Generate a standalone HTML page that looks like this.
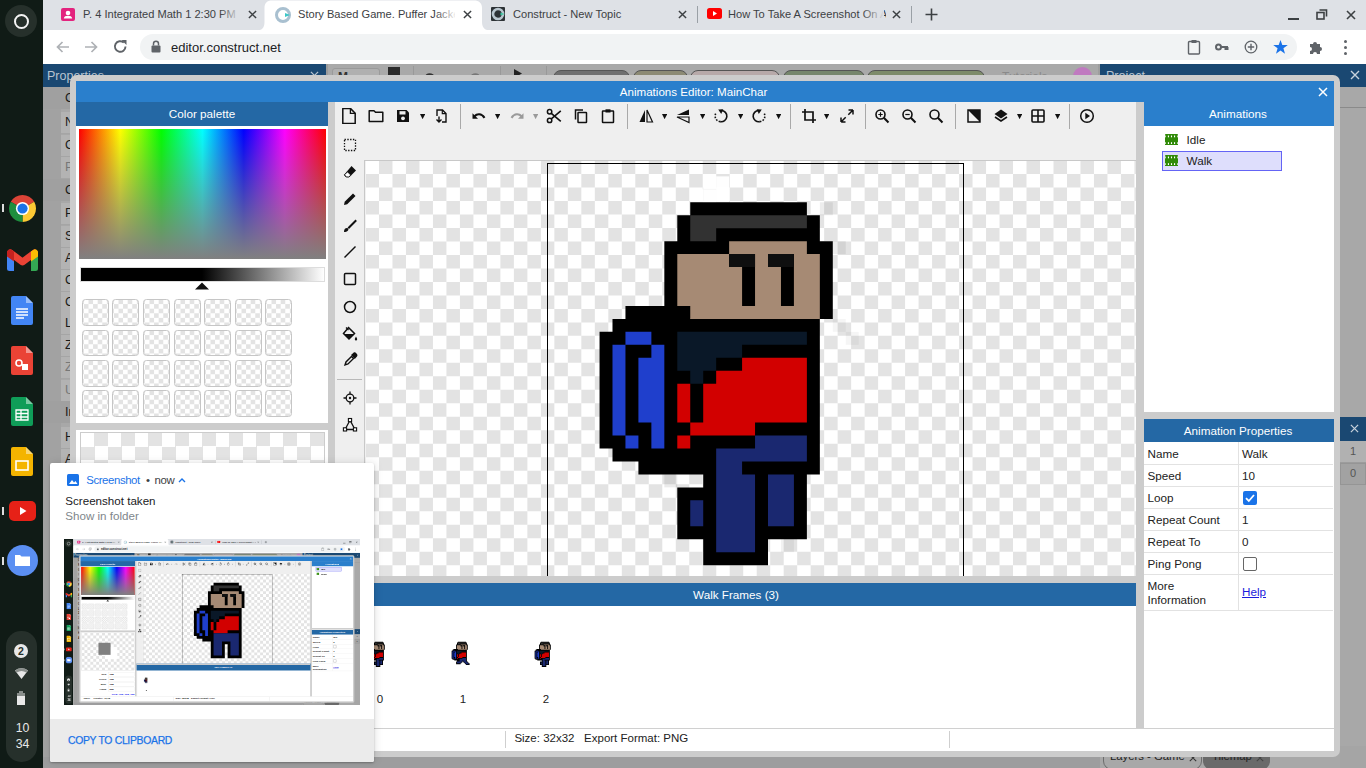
<!DOCTYPE html><html><head><meta charset="utf-8"><style>
html,body{margin:0;padding:0;}
.th div{font-weight:bold;}
body{width:1366px;height:768px;position:relative;overflow:hidden;font-family:"Liberation Sans",sans-serif;background:#a9a9a9;-webkit-font-smoothing:antialiased;}
</style></head><body><div style="position:absolute;left:0px;top:0px;width:43px;height:768px;background:#101b16;"></div><div style="position:absolute;left:5.2px;top:5.2px;width:32px;height:32px;background:#26302b;border-radius:50%;"></div><div style="position:absolute;left:13.8px;top:13.8px;width:15.2px;height:15.2px;border:2.5px solid #f4f4f4;border-radius:50%;box-sizing:border-box;"></div><svg style="position:absolute;left:8px;top:194px" width="29" height="29" viewBox="0 0 30 30"><path d="M15 15L2.88 8A14 14 0 0 1 27.12 8Z" fill="#db4437"/><path d="M15 15L27.12 8A14 14 0 0 1 15 29Z" fill="#fcc934"/><path d="M15 15L15 29A14 14 0 0 1 2.88 8Z" fill="#1e8e3e"/><circle cx="15" cy="15" r="6.8" fill="#fff"/><circle cx="15" cy="15" r="5.3" fill="#1a73e8"/></svg><div style="position:absolute;left:2px;top:204px;width:2px;height:8px;background:#ddd;"></div><svg style="position:absolute;left:7px;top:247px" width="31" height="24" viewBox="0 0 31 24"><path d="M3.5 6L15.5 15L27.5 6" stroke="#ea4335" stroke-width="7" fill="none" stroke-linecap="round" stroke-linejoin="round"/><path d="M0 6.5V21.5A2.5 2.5 0 0 0 2.5 24H7V9Z" fill="#4285f4"/><path d="M31 6.5V21.5A2.5 2.5 0 0 1 28.5 24H24V9Z" fill="#34a853"/><path d="M24 4.5L27.5 2.2A3.5 3.5 0 0 1 31 6.5V9.5L24 14.5Z" fill="#fbbc04"/><path d="M0 9.5V6.5A3.5 3.5 0 0 1 3.5 2.2L7 4.5V14.5Z" fill="#c5221f"/></svg><svg style="position:absolute;left:11px;top:296px" width="23" height="29" viewBox="0 0 23 29"><path d="M2 0H15L22 7V27A2 2 0 0 1 20 29H2A2 2 0 0 1 0 27V2A2 2 0 0 1 2 0Z" fill="#4285f4"/><path d="M15 0V7H22Z" fill="#fff" opacity="0.45"/><path d="M5 13H17M5 16H17M5 19H17M5 22H13" stroke="#fff" stroke-width="1.3"/></svg><svg style="position:absolute;left:11px;top:346px" width="23" height="29" viewBox="0 0 23 29"><path d="M2 0H15L22 7V27A2 2 0 0 1 20 29H2A2 2 0 0 1 0 27V2A2 2 0 0 1 2 0Z" fill="#ea4335"/><path d="M15 0V7H22Z" fill="#fff" opacity="0.45"/><circle cx="8" cy="17" r="3" fill="none" stroke="#fff" stroke-width="1.6"/><path d="M11 18H17V24H11Z" fill="#fff"/></svg><svg style="position:absolute;left:11px;top:397px" width="23" height="29" viewBox="0 0 23 29"><path d="M2 0H15L22 7V27A2 2 0 0 1 20 29H2A2 2 0 0 1 0 27V2A2 2 0 0 1 2 0Z" fill="#0f9d58"/><path d="M15 0V7H22Z" fill="#fff" opacity="0.45"/><path d="M5 13H17V23H5Z M5 16.5H17M5 20H17M10 13V23" fill="none" stroke="#fff" stroke-width="1.3"/></svg><svg style="position:absolute;left:11px;top:447px" width="23" height="29" viewBox="0 0 23 29"><path d="M2 0H15L22 7V27A2 2 0 0 1 20 29H2A2 2 0 0 1 0 27V2A2 2 0 0 1 2 0Z" fill="#f4b400"/><path d="M15 0V7H22Z" fill="#fff" opacity="0.45"/><rect x="5" y="14" width="12" height="9" fill="none" stroke="#fff" stroke-width="1.6"/></svg><svg style="position:absolute;left:9px;top:501px" width="27" height="20" viewBox="0 0 27 20"><rect x="0" y="0" width="27" height="20" rx="5" fill="#e62117"/><path d="M11 6V14L17.5 10Z" fill="#fff"/></svg><div style="position:absolute;left:2px;top:507px;width:2px;height:8px;background:#ddd;"></div><svg style="position:absolute;left:7px;top:545px" width="31" height="31" viewBox="0 0 31 31"><circle cx="15.5" cy="15.5" r="15.5" fill="#5b8ff2"/><path d="M8 10H13L14.5 11.5H23V21H8Z" fill="#fff"/></svg><div style="position:absolute;left:2px;top:557px;width:2px;height:8px;background:#ddd;"></div><div style="position:absolute;left:6px;top:631px;width:31px;height:131px;background:#26302b;border-radius:15px;"></div><div style="position:absolute;left:13.5px;top:643.5px;width:14.6px;height:14.6px;background:#e8e8e8;border-radius:50%;"></div><div style="position:absolute;left:-279.2px;width:600px;text-align:center;top:646.11px;font-size:10.5px;line-height:1;color:#26302b;white-space:pre;font-weight:bold;">2</div><svg style="position:absolute;left:14.5px;top:668px" width="13" height="11" viewBox="0 0 13 11"><path d="M0 2.5A11 11 0 0 1 13 2.5L6.5 11Z" fill="#e8e8e8"/><path d="M0 2.5A11 11 0 0 1 13 2.5L11.3 4.6A8.5 8.5 0 0 0 1.7 4.6Z" fill="#8a8f8c"/></svg><div style="position:absolute;left:17px;top:696px;width:8px;height:9px;background:#e8e8e8;"></div><div style="position:absolute;left:17px;top:693px;width:8px;height:3px;background:#8a8f8c;"></div><div style="position:absolute;left:19px;top:691px;width:4px;height:2px;background:#8a8f8c;"></div><div style="position:absolute;left:-277.4px;width:600px;text-align:center;top:722.29px;font-size:12.3px;line-height:1;color:#e8e8e8;white-space:pre;">10</div><div style="position:absolute;left:-277.4px;width:600px;text-align:center;top:738.29px;font-size:12.3px;line-height:1;color:#e8e8e8;white-space:pre;">34</div><div style="position:absolute;left:43px;top:0px;width:1323px;height:30px;background:#dee1e6;"></div><svg style="position:absolute;left:256px;top:0px" width="235" height="31" viewBox="0 0 235 31"><path d="M0 30.5C6 30.5 8.5 28 8.5 22V8C8.5 3 11 0.5 16 0.5H218C223 0.5 226 3 226 8V22C226 28 229 30.5 235 30.5Z" fill="#fff"/></svg><div style="position:absolute;left:61px;top:8px;width:14px;height:13px;background:#e3237e;border-radius:2px;"></div><svg style="position:absolute;left:61px;top:8px" width="14" height="13" viewBox="0 0 14 13"><circle cx="7" cy="5" r="2.3" fill="#fff"/><path d="M2.8 10.5C3 8.5 4.8 7.8 7 7.8C9.2 7.8 11 8.5 11.2 10.5Z" fill="#fff"/></svg><div style="position:absolute;left:83px;top:9.10px;font-size:11.1px;line-height:1;color:#3c4043;white-space:pre;width:155px;overflow:hidden;">P. 4 Integrated Math 1 2:30 PM -</div><div style="position:absolute;left:220px;top:4px;width:20px;height:20px;background:linear-gradient(90deg,rgba(222,225,230,0),#dee1e6);"></div><svg style="position:absolute;left:247.5px;top:9.5px" width="9" height="9" viewBox="0 0 10 10"><path d="M1 1L9 9M9 1L1 9" stroke="#3c4043" stroke-width="1.6"/></svg><svg style="position:absolute;left:275px;top:7px" width="16" height="16" viewBox="0 0 16 16"><circle cx="8" cy="8" r="6.5" fill="none" stroke="#a9c0d0" stroke-width="3"/><path d="M10 6L15 8L10 10Z" fill="#3cc7c7"/></svg><div style="position:absolute;left:298px;top:9.10px;font-size:11.1px;line-height:1;color:#3c4043;white-space:pre;width:157px;overflow:hidden;">Story Based Game. Puffer Jacket</div><div style="position:absolute;left:435px;top:4px;width:22px;height:20px;background:linear-gradient(90deg,rgba(255,255,255,0),#fff);"></div><svg style="position:absolute;left:462.5px;top:9.5px" width="9" height="9" viewBox="0 0 10 10"><path d="M1 1L9 9M9 1L1 9" stroke="#3c4043" stroke-width="1.6"/></svg><svg style="position:absolute;left:491px;top:7px" width="14" height="14" viewBox="0 0 14 14"><rect width="14" height="14" rx="1" fill="#2d3236"/><circle cx="7" cy="7" r="5" fill="none" stroke="#b9c6cf" stroke-width="2.6"/><path d="M9.5 5.5L13.5 7L9.5 8.5Z" fill="#3cc7a0"/></svg><div style="position:absolute;left:513px;top:9.10px;font-size:11.1px;line-height:1;color:#3c4043;white-space:pre;">Construct - New Topic</div><svg style="position:absolute;left:677.5px;top:9.5px" width="9" height="9" viewBox="0 0 10 10"><path d="M1 1L9 9M9 1L1 9" stroke="#3c4043" stroke-width="1.6"/></svg><div style="position:absolute;left:697px;top:6px;width:1px;height:17px;background:#9aa0a6;"></div><svg style="position:absolute;left:707px;top:8px" width="15" height="11" viewBox="0 0 15 11"><rect width="15" height="11" rx="2.5" fill="#f00"/><path d="M6 3V8L10 5.5Z" fill="#fff"/></svg><div style="position:absolute;left:728px;top:9.10px;font-size:11.1px;line-height:1;color:#3c4043;white-space:pre;width:158px;overflow:hidden;">How To Take A Screenshot On A</div><div style="position:absolute;left:862px;top:4px;width:22px;height:20px;background:linear-gradient(90deg,rgba(222,225,230,0),#dee1e6);"></div><svg style="position:absolute;left:891.5px;top:9.5px" width="9" height="9" viewBox="0 0 10 10"><path d="M1 1L9 9M9 1L1 9" stroke="#3c4043" stroke-width="1.6"/></svg><div style="position:absolute;left:911px;top:6px;width:1px;height:17px;background:#9aa0a6;"></div><svg style="position:absolute;left:925px;top:8px" width="13" height="13" viewBox="0 0 13 13"><path d="M6.5 0.5V12.5M0.5 6.5H12.5" stroke="#3c4043" stroke-width="1.6"/></svg><div style="position:absolute;left:1288px;top:18px;width:11px;height:2px;background:#3c4043;"></div><svg style="position:absolute;left:1316px;top:9px" width="12" height="11" viewBox="0 0 12 11"><rect x="1" y="3.5" width="7" height="6.5" fill="none" stroke="#3c4043" stroke-width="1.6"/><path d="M3.5 1H10.5V7.5" fill="none" stroke="#3c4043" stroke-width="1.6"/></svg><svg style="position:absolute;left:1346.0px;top:10.0px" width="10" height="10" viewBox="0 0 10 10"><path d="M1 1L9 9M9 1L1 9" stroke="#3c4043" stroke-width="1.6"/></svg><div style="position:absolute;left:43px;top:30px;width:1323px;height:34px;background:#fff;"></div><svg style="position:absolute;left:55px;top:39px" width="16" height="16" viewBox="0 0 16 16"><path d="M14 8H3M7.5 3L2.5 8L7.5 13" fill="none" stroke="#aeb1b5" stroke-width="1.7"/></svg><svg style="position:absolute;left:83px;top:39px" width="16" height="16" viewBox="0 0 16 16"><path d="M2 8H13M8.5 3L13.5 8L8.5 13" fill="none" stroke="#aeb1b5" stroke-width="1.7"/></svg><svg style="position:absolute;left:112px;top:38px" width="17" height="17" viewBox="0 0 17 17"><path d="M13.5 8.5A5.3 5.3 0 1 1 11.8 4.6" fill="none" stroke="#5f6368" stroke-width="1.9"/><path d="M9.5 2H14.5V7Z" fill="#5f6368"/></svg><div style="position:absolute;left:140px;top:34px;width:1157px;height:26px;background:#f1f3f4;border-radius:13px;"></div><svg style="position:absolute;left:151px;top:40px" width="10" height="13" viewBox="0 0 10 13"><path d="M2.5 5.5V3.8A2.5 2.5 0 0 1 7.5 3.8V5.5" fill="none" stroke="#5f6368" stroke-width="1.5"/><rect x="0.5" y="5.5" width="9" height="7" rx="1" fill="#5f6368"/></svg><div style="position:absolute;left:171px;top:40.80px;font-size:13px;line-height:1;color:#202124;white-space:pre;">editor.construct.net</div><svg style="position:absolute;left:1187px;top:39px" width="14" height="16" viewBox="0 0 14 16"><rect x="1.5" y="2.5" width="11" height="12.5" rx="1" fill="none" stroke="#5f6368" stroke-width="1.4"/><rect x="4.5" y="1" width="5" height="3" fill="#5f6368"/></svg><svg style="position:absolute;left:1215px;top:42px" width="14" height="10" viewBox="0 0 14 10"><circle cx="3.5" cy="5" r="2.5" fill="none" stroke="#5f6368" stroke-width="2"/><path d="M6 5H13M10.5 5V8M12.5 5V8" stroke="#5f6368" stroke-width="2"/></svg><svg style="position:absolute;left:1244px;top:40px" width="14" height="14" viewBox="0 0 14 14"><circle cx="7" cy="7" r="5.8" fill="none" stroke="#5f6368" stroke-width="1.3"/><path d="M7 3.8V10.2M3.8 7H10.2" stroke="#5f6368" stroke-width="1.4"/></svg><svg style="position:absolute;left:1273px;top:40px" width="15" height="14" viewBox="0 0 24 23"><path d="M12 0L15 8.3H24L16.8 13.6L19.4 22.5L12 17.2L4.6 22.5L7.2 13.6L0 8.3H9Z" fill="#1a73e8"/></svg><svg style="position:absolute;left:1309px;top:40px" width="15" height="14" viewBox="0 0 15 14"><path d="M1 4H4A2 2 0 0 1 8 4H11V7A2 2 0 0 1 11 11V14H8A2 2 0 0 0 4 14H1V11A2 2 0 0 0 1 7Z" fill="#5f6368"/></svg><div style="position:absolute;left:1344px;top:39.5px;width:3px;height:3px;background:#5f6368;border-radius:50%;"></div><div style="position:absolute;left:1344px;top:45.5px;width:3px;height:3px;background:#5f6368;border-radius:50%;"></div><div style="position:absolute;left:1344px;top:51.5px;width:3px;height:3px;background:#5f6368;border-radius:50%;"></div><div style="position:absolute;left:43px;top:64px;width:1323px;height:704px;background:#a8a8a8;"></div><div style="position:absolute;left:43px;top:64px;width:283px;height:23px;background:#1a4872;"></div><div style="position:absolute;left:47px;top:70.42px;font-size:12.5px;line-height:1;color:#b8c4d0;white-space:pre;">Properties</div><svg style="position:absolute;left:309.5px;top:70.5px" width="9" height="9" viewBox="0 0 10 10"><path d="M1 1L9 9M9 1L1 9" stroke="#b8c4d0" stroke-width="1.4"/></svg><div style="position:absolute;left:43px;top:87px;width:18px;height:681px;background:#a2a2a2;"></div><div style="position:absolute;left:43px;top:87px;width:283px;height:22px;background:#a0a0a0;"></div><div style="position:absolute;left:65px;top:92.42px;font-size:12.5px;line-height:1;color:#1a1a1a;white-space:pre;">C</div><div style="position:absolute;left:61px;top:112px;width:265px;height:21px;background:#b3b3b3;border-bottom:1px solid #a5a5a5;"></div><div style="position:absolute;left:65px;top:116.42px;font-size:12.5px;line-height:1;color:#1a1a1a;white-space:pre;">N</div><div style="position:absolute;left:61px;top:135px;width:265px;height:21px;background:#b3b3b3;border-bottom:1px solid #a5a5a5;"></div><div style="position:absolute;left:65px;top:139.42px;font-size:12.5px;line-height:1;color:#1a1a1a;white-space:pre;">G</div><div style="position:absolute;left:61px;top:157px;width:265px;height:21px;background:#b3b3b3;border-bottom:1px solid #a5a5a5;"></div><div style="position:absolute;left:65px;top:161.42px;font-size:12.5px;line-height:1;color:#777;white-space:pre;">P</div><div style="position:absolute;left:43px;top:179px;width:283px;height:22px;background:#a0a0a0;"></div><div style="position:absolute;left:65px;top:184.42px;font-size:12.5px;line-height:1;color:#1a1a1a;white-space:pre;">C</div><div style="position:absolute;left:61px;top:203px;width:265px;height:21px;background:#b3b3b3;border-bottom:1px solid #a5a5a5;"></div><div style="position:absolute;left:65px;top:207.42px;font-size:12.5px;line-height:1;color:#1a1a1a;white-space:pre;">P</div><div style="position:absolute;left:61px;top:226px;width:265px;height:21px;background:#b3b3b3;border-bottom:1px solid #a5a5a5;"></div><div style="position:absolute;left:65px;top:230.42px;font-size:12.5px;line-height:1;color:#1a1a1a;white-space:pre;">S</div><div style="position:absolute;left:61px;top:248px;width:265px;height:21px;background:#b3b3b3;border-bottom:1px solid #a5a5a5;"></div><div style="position:absolute;left:65px;top:252.42px;font-size:12.5px;line-height:1;color:#1a1a1a;white-space:pre;">A</div><div style="position:absolute;left:61px;top:270px;width:265px;height:21px;background:#b3b3b3;border-bottom:1px solid #a5a5a5;"></div><div style="position:absolute;left:65px;top:274.42px;font-size:12.5px;line-height:1;color:#1a1a1a;white-space:pre;">C</div><div style="position:absolute;left:61px;top:292px;width:265px;height:21px;background:#b3b3b3;border-bottom:1px solid #a5a5a5;"></div><div style="position:absolute;left:65px;top:296.42px;font-size:12.5px;line-height:1;color:#1a1a1a;white-space:pre;">C</div><div style="position:absolute;left:61px;top:313px;width:265px;height:21px;background:#b3b3b3;border-bottom:1px solid #a5a5a5;"></div><div style="position:absolute;left:65px;top:317.42px;font-size:12.5px;line-height:1;color:#1a1a1a;white-space:pre;">L</div><div style="position:absolute;left:61px;top:335px;width:265px;height:21px;background:#b3b3b3;border-bottom:1px solid #a5a5a5;"></div><div style="position:absolute;left:65px;top:339.42px;font-size:12.5px;line-height:1;color:#1a1a1a;white-space:pre;">Z</div><div style="position:absolute;left:61px;top:357px;width:265px;height:21px;background:#b3b3b3;border-bottom:1px solid #a5a5a5;"></div><div style="position:absolute;left:65px;top:361.42px;font-size:12.5px;line-height:1;color:#777;white-space:pre;">Z</div><div style="position:absolute;left:61px;top:380px;width:265px;height:21px;background:#b3b3b3;border-bottom:1px solid #a5a5a5;"></div><div style="position:absolute;left:65px;top:384.42px;font-size:12.5px;line-height:1;color:#777;white-space:pre;">U</div><div style="position:absolute;left:43px;top:401px;width:283px;height:22px;background:#a0a0a0;"></div><div style="position:absolute;left:65px;top:406.42px;font-size:12.5px;line-height:1;color:#1a1a1a;white-space:pre;">In</div><div style="position:absolute;left:61px;top:427px;width:265px;height:21px;background:#b3b3b3;border-bottom:1px solid #a5a5a5;"></div><div style="position:absolute;left:65px;top:431.42px;font-size:12.5px;line-height:1;color:#1a1a1a;white-space:pre;">H</div><div style="position:absolute;left:61px;top:449px;width:265px;height:21px;background:#b3b3b3;border-bottom:1px solid #a5a5a5;"></div><div style="position:absolute;left:65px;top:453.42px;font-size:12.5px;line-height:1;color:#1a1a1a;white-space:pre;">A</div><div style="position:absolute;left:326px;top:64px;width:2px;height:704px;background:#9b9b9b;"></div><div style="position:absolute;left:328px;top:64px;width:772px;height:12px;background:#a9a9a9;"></div><div style="position:absolute;left:332px;top:68px;width:46px;height:20px;background:#b0b0b0;border:1px solid #9a9a9a;border-radius:3px;"></div><div style="position:absolute;left:338px;top:70.84px;font-size:12px;line-height:1;color:#333;white-space:pre;font-weight:bold;">M</div><div style="position:absolute;left:388px;top:67px;width:12px;height:10px;background:#2a2a2a;"></div><svg style="position:absolute;left:423px;top:70px" width="14" height="8" viewBox="0 0 14 8"><path d="M2 8C4 3 9 3 12 8" fill="none" stroke="#333" stroke-width="2"/></svg><svg style="position:absolute;left:468px;top:70px" width="14" height="8" viewBox="0 0 14 8"><path d="M12 8C10 3 5 3 2 8" fill="none" stroke="#777" stroke-width="2"/></svg><svg style="position:absolute;left:513px;top:68px" width="10" height="10" viewBox="0 0 10 10"><path d="M1 1V10L9 5.5Z" fill="#222"/></svg><div style="position:absolute;left:413px;top:66px;width:1px;height:12px;background:#999;"></div><div style="position:absolute;left:500px;top:66px;width:1px;height:12px;background:#999;"></div><div style="position:absolute;left:546px;top:66px;width:1px;height:12px;background:#999;"></div><div style="position:absolute;left:553px;top:70px;width:77px;height:20px;background:#6f6f6f;border:1px solid #555;border-radius:8px;box-sizing:border-box;"></div><div style="position:absolute;left:633px;top:70px;width:55px;height:20px;background:#8c8a74;border:1px solid #555;border-radius:8px;box-sizing:border-box;"></div><div style="position:absolute;left:690px;top:70px;width:90px;height:20px;background:#b7a9a9;border:1px solid #555;border-radius:8px;box-sizing:border-box;"></div><div style="position:absolute;left:783px;top:70px;width:82px;height:20px;background:#76866c;border:1px solid #555;border-radius:8px;box-sizing:border-box;"></div><div style="position:absolute;left:867px;top:70px;width:118px;height:20px;background:#7d8b6a;border:1px solid #555;border-radius:8px;box-sizing:border-box;"></div><div style="position:absolute;left:1002px;top:70.84px;font-size:12px;line-height:1;color:#8a8a8a;white-space:pre;">Tutorials</div><div style="position:absolute;left:1073px;top:67px;width:19px;height:19px;background:#c07ac0;border-radius:50%;"></div><div style="position:absolute;left:1100px;top:64px;width:266px;height:23px;background:#1a4872;"></div><div style="position:absolute;left:1106px;top:70.42px;font-size:12.5px;line-height:1;color:#b8c4d0;white-space:pre;">Project</div><svg style="position:absolute;left:1350.0px;top:70.0px" width="10" height="10" viewBox="0 0 10 10"><path d="M1 1L9 9M9 1L1 9" stroke="#c8d2dc" stroke-width="1.4"/></svg><div style="position:absolute;left:1098px;top:64px;width:2px;height:704px;background:#9e9e9e;"></div><div style="position:absolute;left:1340px;top:107px;width:26px;height:1px;background:#8a8a8a;"></div><div style="position:absolute;left:1340px;top:417px;width:26px;height:24px;background:#1a4872;"></div><svg style="position:absolute;left:1349.5px;top:424.0px" width="9" height="9" viewBox="0 0 10 10"><path d="M1 1L9 9M9 1L1 9" stroke="#c8d2dc" stroke-width="1.4"/></svg><div style="position:absolute;left:1340px;top:441px;width:26px;height:22px;background:#b1b1b1;border-bottom:1px solid #9c9c9c;box-sizing:border-box;"></div><div style="position:absolute;left:1350px;top:445.69px;font-size:11px;line-height:1;color:#555;white-space:pre;">1</div><div style="position:absolute;left:1340px;top:463px;width:26px;height:22px;background:#a2a2a2;border:1px solid #959595;box-sizing:border-box;"></div><div style="position:absolute;left:1350px;top:467.69px;font-size:11px;line-height:1;color:#555;white-space:pre;">0</div><div style="position:absolute;left:1340px;top:746px;width:26px;height:22px;background:#a5a5a5;"></div><div style="position:absolute;left:43px;top:757px;width:1057px;height:11px;background:#9d9d9e;"></div><div style="position:absolute;left:1103px;top:746px;width:99px;height:24px;background:#a8a8a8;border:1px solid #6d6d6d;border-radius:9px;box-sizing:border-box;"></div><div style="position:absolute;left:1110px;top:751.43px;font-size:11.3px;line-height:1;color:#222;white-space:pre;">Layers - Game</div><svg style="position:absolute;left:1189.0px;top:753.5px" width="8" height="8" viewBox="0 0 10 10"><path d="M1 1L9 9M9 1L1 9" stroke="#333" stroke-width="1.3"/></svg><div style="position:absolute;left:1203px;top:746px;width:67px;height:24px;background:#6a6a6a;border-radius:9px;"></div><div style="position:absolute;left:1212px;top:751.43px;font-size:11.3px;line-height:1;color:#222;white-space:pre;">Tilemap</div><svg style="position:absolute;left:1256.0px;top:753.5px" width="8" height="8" viewBox="0 0 10 10"><path d="M1 1L9 9M9 1L1 9" stroke="#444" stroke-width="1.3"/></svg><div style="position:absolute;left:70px;top:75px;width:1270px;height:682px;background:#cccccc;border-radius:7px;"></div><div style="position:absolute;left:76px;top:81px;width:1258px;height:670px;background:#fff;"></div><div style="position:absolute;left:76px;top:81px;width:1258px;height:21px;background:#2a7fcc;"></div><div style="position:absolute;left:393.5px;width:600px;text-align:center;top:85.98px;font-size:11.6px;line-height:1;color:#fff;white-space:pre;">Animations Editor: MainChar</div><svg style="position:absolute;left:1317.5px;top:86.5px" width="10" height="10" viewBox="0 0 10 10"><path d="M1 1L9 9M9 1L1 9" stroke="#fff" stroke-width="1.5"/></svg><div style="position:absolute;left:76px;top:102px;width:252px;height:24px;background:#2468a5;"></div><div style="position:absolute;left:-98px;width:600px;text-align:center;top:107.90px;font-size:11.7px;line-height:1;color:#fff;white-space:pre;">Color palette</div><div style="position:absolute;left:79px;top:129px;width:247px;height:130px;background:linear-gradient(180deg,rgba(128,128,128,0),#808080),linear-gradient(90deg,#f00,#ff0 16.67%,#0f0 33.33%,#0ff 50%,#00f 66.67%,#f0f 83.33%,#f00);"></div><div style="position:absolute;left:80px;top:267px;width:245px;height:15px;background:linear-gradient(90deg,#000 0%,#000 49.8%,#fff 100%);border:1px solid #ddd;box-sizing:border-box;"></div><svg style="position:absolute;left:194px;top:281px" width="16" height="9" viewBox="0 0 16 9"><path d="M1 8.5H15L8 1.5Z" fill="#111"/></svg><div style="position:absolute;left:82.3px;top:299px;width:26.5px;height:26.5px;background-color:#fff;background-image:conic-gradient(#e3e3e3 0 25%,#fff 0 50%,#e3e3e3 0 75%,#fff 0);background-size:9.2px 9.2px;background-position:0.9px -0.5px;border:1px solid #c6c6c6;border-radius:3.5px;box-sizing:border-box;"></div><div style="position:absolute;left:112.2px;top:299px;width:26.5px;height:26.5px;background-color:#fff;background-image:conic-gradient(#e3e3e3 0 25%,#fff 0 50%,#e3e3e3 0 75%,#fff 0);background-size:9.2px 9.2px;background-position:0.9px -0.5px;border:1px solid #c6c6c6;border-radius:3.5px;box-sizing:border-box;"></div><div style="position:absolute;left:143.2px;top:299px;width:26.5px;height:26.5px;background-color:#fff;background-image:conic-gradient(#e3e3e3 0 25%,#fff 0 50%,#e3e3e3 0 75%,#fff 0);background-size:9.2px 9.2px;background-position:0.9px -0.5px;border:1px solid #c6c6c6;border-radius:3.5px;box-sizing:border-box;"></div><div style="position:absolute;left:174px;top:299px;width:26.5px;height:26.5px;background-color:#fff;background-image:conic-gradient(#e3e3e3 0 25%,#fff 0 50%,#e3e3e3 0 75%,#fff 0);background-size:9.2px 9.2px;background-position:0.9px -0.5px;border:1px solid #c6c6c6;border-radius:3.5px;box-sizing:border-box;"></div><div style="position:absolute;left:204.4px;top:299px;width:26.5px;height:26.5px;background-color:#fff;background-image:conic-gradient(#e3e3e3 0 25%,#fff 0 50%,#e3e3e3 0 75%,#fff 0);background-size:9.2px 9.2px;background-position:0.9px -0.5px;border:1px solid #c6c6c6;border-radius:3.5px;box-sizing:border-box;"></div><div style="position:absolute;left:235.2px;top:299px;width:26.5px;height:26.5px;background-color:#fff;background-image:conic-gradient(#e3e3e3 0 25%,#fff 0 50%,#e3e3e3 0 75%,#fff 0);background-size:9.2px 9.2px;background-position:0.9px -0.5px;border:1px solid #c6c6c6;border-radius:3.5px;box-sizing:border-box;"></div><div style="position:absolute;left:265px;top:299px;width:26.5px;height:26.5px;background-color:#fff;background-image:conic-gradient(#e3e3e3 0 25%,#fff 0 50%,#e3e3e3 0 75%,#fff 0);background-size:9.2px 9.2px;background-position:0.9px -0.5px;border:1px solid #c6c6c6;border-radius:3.5px;box-sizing:border-box;"></div><div style="position:absolute;left:82.3px;top:329.5px;width:26.5px;height:26.5px;background-color:#fff;background-image:conic-gradient(#e3e3e3 0 25%,#fff 0 50%,#e3e3e3 0 75%,#fff 0);background-size:9.2px 9.2px;background-position:0.9px -0.5px;border:1px solid #c6c6c6;border-radius:3.5px;box-sizing:border-box;"></div><div style="position:absolute;left:112.2px;top:329.5px;width:26.5px;height:26.5px;background-color:#fff;background-image:conic-gradient(#e3e3e3 0 25%,#fff 0 50%,#e3e3e3 0 75%,#fff 0);background-size:9.2px 9.2px;background-position:0.9px -0.5px;border:1px solid #c6c6c6;border-radius:3.5px;box-sizing:border-box;"></div><div style="position:absolute;left:143.2px;top:329.5px;width:26.5px;height:26.5px;background-color:#fff;background-image:conic-gradient(#e3e3e3 0 25%,#fff 0 50%,#e3e3e3 0 75%,#fff 0);background-size:9.2px 9.2px;background-position:0.9px -0.5px;border:1px solid #c6c6c6;border-radius:3.5px;box-sizing:border-box;"></div><div style="position:absolute;left:174px;top:329.5px;width:26.5px;height:26.5px;background-color:#fff;background-image:conic-gradient(#e3e3e3 0 25%,#fff 0 50%,#e3e3e3 0 75%,#fff 0);background-size:9.2px 9.2px;background-position:0.9px -0.5px;border:1px solid #c6c6c6;border-radius:3.5px;box-sizing:border-box;"></div><div style="position:absolute;left:204.4px;top:329.5px;width:26.5px;height:26.5px;background-color:#fff;background-image:conic-gradient(#e3e3e3 0 25%,#fff 0 50%,#e3e3e3 0 75%,#fff 0);background-size:9.2px 9.2px;background-position:0.9px -0.5px;border:1px solid #c6c6c6;border-radius:3.5px;box-sizing:border-box;"></div><div style="position:absolute;left:235.2px;top:329.5px;width:26.5px;height:26.5px;background-color:#fff;background-image:conic-gradient(#e3e3e3 0 25%,#fff 0 50%,#e3e3e3 0 75%,#fff 0);background-size:9.2px 9.2px;background-position:0.9px -0.5px;border:1px solid #c6c6c6;border-radius:3.5px;box-sizing:border-box;"></div><div style="position:absolute;left:265px;top:329.5px;width:26.5px;height:26.5px;background-color:#fff;background-image:conic-gradient(#e3e3e3 0 25%,#fff 0 50%,#e3e3e3 0 75%,#fff 0);background-size:9.2px 9.2px;background-position:0.9px -0.5px;border:1px solid #c6c6c6;border-radius:3.5px;box-sizing:border-box;"></div><div style="position:absolute;left:82.3px;top:360.2px;width:26.5px;height:26.5px;background-color:#fff;background-image:conic-gradient(#e3e3e3 0 25%,#fff 0 50%,#e3e3e3 0 75%,#fff 0);background-size:9.2px 9.2px;background-position:0.9px -0.5px;border:1px solid #c6c6c6;border-radius:3.5px;box-sizing:border-box;"></div><div style="position:absolute;left:112.2px;top:360.2px;width:26.5px;height:26.5px;background-color:#fff;background-image:conic-gradient(#e3e3e3 0 25%,#fff 0 50%,#e3e3e3 0 75%,#fff 0);background-size:9.2px 9.2px;background-position:0.9px -0.5px;border:1px solid #c6c6c6;border-radius:3.5px;box-sizing:border-box;"></div><div style="position:absolute;left:143.2px;top:360.2px;width:26.5px;height:26.5px;background-color:#fff;background-image:conic-gradient(#e3e3e3 0 25%,#fff 0 50%,#e3e3e3 0 75%,#fff 0);background-size:9.2px 9.2px;background-position:0.9px -0.5px;border:1px solid #c6c6c6;border-radius:3.5px;box-sizing:border-box;"></div><div style="position:absolute;left:174px;top:360.2px;width:26.5px;height:26.5px;background-color:#fff;background-image:conic-gradient(#e3e3e3 0 25%,#fff 0 50%,#e3e3e3 0 75%,#fff 0);background-size:9.2px 9.2px;background-position:0.9px -0.5px;border:1px solid #c6c6c6;border-radius:3.5px;box-sizing:border-box;"></div><div style="position:absolute;left:204.4px;top:360.2px;width:26.5px;height:26.5px;background-color:#fff;background-image:conic-gradient(#e3e3e3 0 25%,#fff 0 50%,#e3e3e3 0 75%,#fff 0);background-size:9.2px 9.2px;background-position:0.9px -0.5px;border:1px solid #c6c6c6;border-radius:3.5px;box-sizing:border-box;"></div><div style="position:absolute;left:235.2px;top:360.2px;width:26.5px;height:26.5px;background-color:#fff;background-image:conic-gradient(#e3e3e3 0 25%,#fff 0 50%,#e3e3e3 0 75%,#fff 0);background-size:9.2px 9.2px;background-position:0.9px -0.5px;border:1px solid #c6c6c6;border-radius:3.5px;box-sizing:border-box;"></div><div style="position:absolute;left:265px;top:360.2px;width:26.5px;height:26.5px;background-color:#fff;background-image:conic-gradient(#e3e3e3 0 25%,#fff 0 50%,#e3e3e3 0 75%,#fff 0);background-size:9.2px 9.2px;background-position:0.9px -0.5px;border:1px solid #c6c6c6;border-radius:3.5px;box-sizing:border-box;"></div><div style="position:absolute;left:82.3px;top:390.2px;width:26.5px;height:26.5px;background-color:#fff;background-image:conic-gradient(#e3e3e3 0 25%,#fff 0 50%,#e3e3e3 0 75%,#fff 0);background-size:9.2px 9.2px;background-position:0.9px -0.5px;border:1px solid #c6c6c6;border-radius:3.5px;box-sizing:border-box;"></div><div style="position:absolute;left:112.2px;top:390.2px;width:26.5px;height:26.5px;background-color:#fff;background-image:conic-gradient(#e3e3e3 0 25%,#fff 0 50%,#e3e3e3 0 75%,#fff 0);background-size:9.2px 9.2px;background-position:0.9px -0.5px;border:1px solid #c6c6c6;border-radius:3.5px;box-sizing:border-box;"></div><div style="position:absolute;left:143.2px;top:390.2px;width:26.5px;height:26.5px;background-color:#fff;background-image:conic-gradient(#e3e3e3 0 25%,#fff 0 50%,#e3e3e3 0 75%,#fff 0);background-size:9.2px 9.2px;background-position:0.9px -0.5px;border:1px solid #c6c6c6;border-radius:3.5px;box-sizing:border-box;"></div><div style="position:absolute;left:174px;top:390.2px;width:26.5px;height:26.5px;background-color:#fff;background-image:conic-gradient(#e3e3e3 0 25%,#fff 0 50%,#e3e3e3 0 75%,#fff 0);background-size:9.2px 9.2px;background-position:0.9px -0.5px;border:1px solid #c6c6c6;border-radius:3.5px;box-sizing:border-box;"></div><div style="position:absolute;left:204.4px;top:390.2px;width:26.5px;height:26.5px;background-color:#fff;background-image:conic-gradient(#e3e3e3 0 25%,#fff 0 50%,#e3e3e3 0 75%,#fff 0);background-size:9.2px 9.2px;background-position:0.9px -0.5px;border:1px solid #c6c6c6;border-radius:3.5px;box-sizing:border-box;"></div><div style="position:absolute;left:235.2px;top:390.2px;width:26.5px;height:26.5px;background-color:#fff;background-image:conic-gradient(#e3e3e3 0 25%,#fff 0 50%,#e3e3e3 0 75%,#fff 0);background-size:9.2px 9.2px;background-position:0.9px -0.5px;border:1px solid #c6c6c6;border-radius:3.5px;box-sizing:border-box;"></div><div style="position:absolute;left:265px;top:390.2px;width:26.5px;height:26.5px;background-color:#fff;background-image:conic-gradient(#e3e3e3 0 25%,#fff 0 50%,#e3e3e3 0 75%,#fff 0);background-size:9.2px 9.2px;background-position:0.9px -0.5px;border:1px solid #c6c6c6;border-radius:3.5px;box-sizing:border-box;"></div><div style="position:absolute;left:76px;top:423px;width:252px;height:7px;background:#cccccc;"></div><div style="position:absolute;left:80px;top:432px;width:245px;height:330px;background-color:#fff;background-image:conic-gradient(#e3e3e3 0 25%,#fff 0 50%,#e3e3e3 0 75%,#fff 0);background-size:27.0px 27.0px;border:1px solid #ccc;box-sizing:border-box;"></div><div style="position:absolute;left:328px;top:102px;width:7px;height:626px;background:#cccccc;"></div><div style="position:absolute;left:335px;top:102px;width:801px;height:58px;background:#efefef;"></div><div style="position:absolute;left:335px;top:160px;width:29px;height:416px;background:#efefef;"></div><svg style="position:absolute;left:341.0px;top:108.4px" width="16" height="16" viewBox="0 0 16 16"><path d="M1.8 0.6H9.6L14.2 5.2V15.6H1.8Z" fill="none" stroke="#111" stroke-width="1.5" stroke-linejoin="round"/><path d="M9.4 0.6V5.4H14.2" fill="none" stroke="#111" stroke-width="1.3"/></svg><svg style="position:absolute;left:368.3px;top:108.4px" width="16" height="16" viewBox="0 0 16 16"><path d="M1.2 2.8H6L7.5 4.3H14.8V13.6H1.2Z" fill="none" stroke="#111" stroke-width="1.5" stroke-linejoin="round"/></svg><svg style="position:absolute;left:395.2px;top:108.4px" width="16" height="16" viewBox="0 0 16 16"><path d="M2 2H11.5L14 4.5V14H2Z" fill="#111"/><rect x="4.5" y="3.2" width="6" height="3.3" fill="#efefef"/><circle cx="8" cy="10.3" r="1.9" fill="#efefef"/></svg><svg style="position:absolute;left:433.3px;top:108.4px" width="16" height="16" viewBox="0 0 16 16"><path d="M4 8V2H9.5L13 5.5V14H9" fill="none" stroke="#111" stroke-width="1.4"/><path d="M6 8.5V14M3.5 11.5L6 14L8.5 11.5" fill="none" stroke="#111" stroke-width="1.4"/><path d="M9.3 2V5.7H13" fill="none" stroke="#111" stroke-width="1.2"/></svg><svg style="position:absolute;left:470.8px;top:108.4px" width="16" height="16" viewBox="0 0 16 16"><path d="M3.5 8.3C6 5.5 10.5 5.3 13.5 9.8" fill="none" stroke="#111" stroke-width="2.1"/><path d="M1.5 5.2V10.8H7Z" fill="#111"/></svg><svg style="position:absolute;left:508.79999999999995px;top:108.4px" width="16" height="16" viewBox="0 0 16 16"><path d="M12.5 8.3C10 5.5 5.5 5.3 2.5 9.8" fill="none" stroke="#9a9a9a" stroke-width="2.1"/><path d="M14.5 5.2V10.8H9Z" fill="#9a9a9a"/></svg><svg style="position:absolute;left:546.0px;top:108.4px" width="16" height="16" viewBox="0 0 16 16"><circle cx="3.6" cy="3.8" r="2.2" fill="none" stroke="#111" stroke-width="1.5"/><circle cx="3.6" cy="12.4" r="2.2" fill="none" stroke="#111" stroke-width="1.5"/><path d="M5.3 5.3L14.8 13.3M5.3 10.9L14.8 2.9" stroke="#111" stroke-width="1.6"/></svg><svg style="position:absolute;left:573.2px;top:108.4px" width="16" height="16" viewBox="0 0 16 16"><rect x="5" y="4.5" width="8.5" height="10" fill="none" stroke="#111" stroke-width="1.5" rx="0.5"/><path d="M2.5 11.5V2H10" fill="none" stroke="#111" stroke-width="1.5"/></svg><svg style="position:absolute;left:600.2px;top:108.4px" width="16" height="16" viewBox="0 0 16 16"><rect x="2.5" y="3" width="11" height="11.5" fill="none" stroke="#111" stroke-width="1.5" rx="0.5"/><rect x="5.5" y="1.3" width="5" height="3.2" fill="#111"/></svg><svg style="position:absolute;left:637.7px;top:108.4px" width="16" height="16" viewBox="0 0 16 16"><path d="M7 2V14H1.5Z" fill="#111"/><path d="M9 2V14H14.5Z" fill="none" stroke="#111" stroke-width="1.2"/></svg><svg style="position:absolute;left:675.4px;top:108.4px" width="16" height="16" viewBox="0 0 16 16"><path d="M14 7H2L14 1.5Z" fill="#111"/><path d="M14 9H2L14 14.5Z" fill="none" stroke="#111" stroke-width="1.2"/></svg><svg style="position:absolute;left:713.0px;top:108.4px" width="16" height="16" viewBox="0 0 16 16"><path d="M8.3 2.5A5.6 5.6 0 1 1 7.2 13.6" fill="none" stroke="#111" stroke-width="1.6"/><path d="M7.2 13.6A5.6 5.6 0 0 1 3.3 4.6" fill="none" stroke="#111" stroke-width="1.6" stroke-dasharray="1.6 1.4"/><path d="M5.2 1.4L10.3 1.2L8.2 6Z" fill="#111"/></svg><svg style="position:absolute;left:750.9px;top:108.4px" width="16" height="16" viewBox="0 0 16 16"><path d="M7.7 2.5A5.6 5.6 0 1 0 8.8 13.6" fill="none" stroke="#111" stroke-width="1.6"/><path d="M8.8 13.6A5.6 5.6 0 0 0 12.7 4.6" fill="none" stroke="#111" stroke-width="1.6" stroke-dasharray="1.6 1.4"/><path d="M10.8 1.4L5.7 1.2L7.8 6Z" fill="#111"/></svg><svg style="position:absolute;left:800.7px;top:108.4px" width="16" height="16" viewBox="0 0 16 16"><path d="M4 1V12H15M1 4H12V15" fill="none" stroke="#111" stroke-width="1.7"/></svg><svg style="position:absolute;left:838.6px;top:108.4px" width="16" height="16" viewBox="0 0 16 16"><path d="M9.3 6.7L14 2M2 14L6.7 9.3M14 2V6.5M14 2H9.5M2 14V9.5M2 14H6.5" fill="none" stroke="#111" stroke-width="1.5"/></svg><svg style="position:absolute;left:873.8px;top:108.4px" width="16" height="16" viewBox="0 0 16 16"><circle cx="6.5" cy="6.5" r="4.5" fill="none" stroke="#111" stroke-width="1.6"/><path d="M9.8 9.8L14.5 14.5" stroke="#111" stroke-width="2"/><path d="M4.3 6.5H8.7M6.5 4.3V8.7" stroke="#111" stroke-width="1.2"/></svg><svg style="position:absolute;left:900.9px;top:108.4px" width="16" height="16" viewBox="0 0 16 16"><circle cx="6.5" cy="6.5" r="4.5" fill="none" stroke="#111" stroke-width="1.6"/><path d="M9.8 9.8L14.5 14.5" stroke="#111" stroke-width="2"/><path d="M4.3 6.5H8.7" stroke="#111" stroke-width="1.2"/></svg><svg style="position:absolute;left:928.2px;top:108.4px" width="16" height="16" viewBox="0 0 16 16"><circle cx="6.5" cy="6.5" r="4.5" fill="none" stroke="#111" stroke-width="1.6"/><path d="M9.8 9.8L14.5 14.5" stroke="#111" stroke-width="2"/></svg><svg style="position:absolute;left:965.6px;top:108.4px" width="16" height="16" viewBox="0 0 16 16"><rect x="2" y="2" width="12" height="12" fill="none" stroke="#111" stroke-width="1.5"/><path d="M2 2H14V14Z" fill="#111"/></svg><svg style="position:absolute;left:992.6px;top:108.4px" width="16" height="16" viewBox="0 0 16 16"><path d="M8 1.5L14.5 6L8 10.5L1.5 6Z" fill="#111"/><path d="M2 9L8 13L14 9" fill="none" stroke="#111" stroke-width="1.6"/></svg><svg style="position:absolute;left:1030.0px;top:108.4px" width="16" height="16" viewBox="0 0 16 16"><rect x="2" y="2" width="12" height="12" fill="none" stroke="#111" stroke-width="1.6" rx="1"/><path d="M8 2V14M2 8H14" stroke="#111" stroke-width="1.6"/></svg><svg style="position:absolute;left:1078.5px;top:108.4px" width="16" height="16" viewBox="0 0 16 16"><circle cx="8" cy="8" r="6.3" fill="none" stroke="#111" stroke-width="1.5"/><path d="M6.3 4.8V11.2L11 8Z" fill="#111"/></svg><svg style="position:absolute;left:419.59999999999997px;top:114.2px" width="5.2" height="5.2" viewBox="0 0 5.2 5.2"><path d="M0 0H5.2L2.6 5.2Z" fill="#111"/></svg><svg style="position:absolute;left:494.9px;top:114.2px" width="5.2" height="5.2" viewBox="0 0 5.2 5.2"><path d="M0 0H5.2L2.6 5.2Z" fill="#111"/></svg><svg style="position:absolute;left:533.3px;top:114.2px" width="5.2" height="5.2" viewBox="0 0 5.2 5.2"><path d="M0 0H5.2L2.6 5.2Z" fill="#9a9a9a"/></svg><svg style="position:absolute;left:661.8px;top:114.2px" width="5.2" height="5.2" viewBox="0 0 5.2 5.2"><path d="M0 0H5.2L2.6 5.2Z" fill="#111"/></svg><svg style="position:absolute;left:699.9px;top:114.2px" width="5.2" height="5.2" viewBox="0 0 5.2 5.2"><path d="M0 0H5.2L2.6 5.2Z" fill="#111"/></svg><svg style="position:absolute;left:737.6px;top:114.2px" width="5.2" height="5.2" viewBox="0 0 5.2 5.2"><path d="M0 0H5.2L2.6 5.2Z" fill="#111"/></svg><svg style="position:absolute;left:775.9px;top:114.2px" width="5.2" height="5.2" viewBox="0 0 5.2 5.2"><path d="M0 0H5.2L2.6 5.2Z" fill="#111"/></svg><svg style="position:absolute;left:824.1px;top:114.2px" width="5.2" height="5.2" viewBox="0 0 5.2 5.2"><path d="M0 0H5.2L2.6 5.2Z" fill="#111"/></svg><svg style="position:absolute;left:1016.6999999999999px;top:114.2px" width="5.2" height="5.2" viewBox="0 0 5.2 5.2"><path d="M0 0H5.2L2.6 5.2Z" fill="#111"/></svg><svg style="position:absolute;left:1055.0px;top:114.2px" width="5.2" height="5.2" viewBox="0 0 5.2 5.2"><path d="M0 0H5.2L2.6 5.2Z" fill="#111"/></svg><div style="position:absolute;left:460px;top:104px;width:1px;height:25px;background:#a9a9a9;"></div><div style="position:absolute;left:627px;top:104px;width:1px;height:25px;background:#a9a9a9;"></div><div style="position:absolute;left:790px;top:104px;width:1px;height:25px;background:#a9a9a9;"></div><div style="position:absolute;left:865px;top:104px;width:1px;height:25px;background:#a9a9a9;"></div><div style="position:absolute;left:955px;top:104px;width:1px;height:25px;background:#a9a9a9;"></div><div style="position:absolute;left:1069px;top:104px;width:1px;height:25px;background:#a9a9a9;"></div><svg style="position:absolute;left:341.5px;top:136.6px" width="16" height="16" viewBox="0 0 16 16"><rect x="2.5" y="2.5" width="11" height="11" fill="none" stroke="#111" stroke-width="1.3" stroke-dasharray="1.4 1.4"/></svg><svg style="position:absolute;left:341.5px;top:163.7px" width="16" height="16" viewBox="0 0 16 16"><path d="M9.5 2L14 6.5L7.5 13H4L2 11Z" fill="#111"/><path d="M2.5 10.8L5.5 7.8L8.8 11.1L6.8 13H4.2Z" fill="#fff" stroke="#111" stroke-width="1"/></svg><svg style="position:absolute;left:341.5px;top:190.75px" width="16" height="16" viewBox="0 0 16 16"><path d="M2 14L2.7 10.8L11 2.5L13.5 5L5.2 13.3Z" fill="#111"/></svg><svg style="position:absolute;left:341.5px;top:217.8px" width="16" height="16" viewBox="0 0 16 16"><path d="M6.5 9.5L13.5 2.5L14 3L7 10Z" fill="#111" stroke="#111" stroke-width="1.3"/><path d="M2 14C2 11.5 3 10 5 10C6.5 10 6.8 11.5 6 12.5C5 13.8 3.5 14 2 14Z" fill="#111"/></svg><svg style="position:absolute;left:341.5px;top:244.0px" width="16" height="16" viewBox="0 0 16 16"><path d="M2.5 13.5L13.5 2.5" stroke="#111" stroke-width="1.4"/></svg><svg style="position:absolute;left:341.5px;top:271.2px" width="16" height="16" viewBox="0 0 16 16"><rect x="2.5" y="2.5" width="11" height="11" fill="none" stroke="#111" stroke-width="1.5" rx="1"/></svg><svg style="position:absolute;left:341.5px;top:298.7px" width="16" height="16" viewBox="0 0 16 16"><circle cx="8" cy="8" r="5.5" fill="none" stroke="#111" stroke-width="1.5"/></svg><svg style="position:absolute;left:341.5px;top:326.0px" width="16" height="16" viewBox="0 0 16 16"><path d="M6.5 1.5L12.5 7.5L7 13L1.5 7.5Z" fill="none" stroke="#111" stroke-width="1.5"/><path d="M2.2 8H12L7 13Z" fill="#111"/><path d="M14 10.5C14.8 12 15.2 12.7 15.2 13.3A1.2 1.2 0 0 1 12.8 13.3C12.8 12.7 13.2 12 14 10.5Z" fill="#111"/><path d="M4 1.5L6.5 4" stroke="#111" stroke-width="1.3"/></svg><svg style="position:absolute;left:341.5px;top:352.4px" width="16" height="16" viewBox="0 0 16 16"><path d="M3 13L4 10L9.5 4.5L11.5 6.5L6 12Z" fill="none" stroke="#111" stroke-width="1.4"/><path d="M9 3L11.5 0.8C12.3 0 13.5 0.3 14.5 1.5C15.5 2.5 15.8 3.7 15 4.5L12.8 7L9 3Z" fill="#111"/></svg><svg style="position:absolute;left:341.5px;top:389.5px" width="16" height="16" viewBox="0 0 16 16"><circle cx="8" cy="8" r="3.8" fill="none" stroke="#111" stroke-width="1.3"/><circle cx="8" cy="8" r="1.2" fill="#111"/><path d="M8 1.5V4.2M8 11.8V14.5M1.5 8H4.2M11.8 8H14.5" stroke="#111" stroke-width="1.3"/></svg><svg style="position:absolute;left:341.5px;top:416.6px" width="16" height="16" viewBox="0 0 16 16"><path d="M8 3.2L3 12.5H13Z" fill="none" stroke="#111" stroke-width="1.3"/><rect x="6.4" y="1.5" width="3.2" height="3.2" fill="#fff" stroke="#111" stroke-width="1.1"/><rect x="1.4" y="10.8" width="3.2" height="3.2" fill="#fff" stroke="#111" stroke-width="1.1"/><rect x="11.4" y="10.8" width="3.2" height="3.2" fill="#fff" stroke="#111" stroke-width="1.1"/></svg><div style="position:absolute;left:337px;top:379px;width:25px;height:1px;background:#b9b9b9;"></div><div style="position:absolute;left:364px;top:160px;width:772px;height:416px;overflow:hidden;background:#fff;"><svg style="position:absolute;left:0px;top:0px" width="772" height="416" viewBox="0 0 772 416"><rect width="772" height="416" fill="#fff"/><path d="M-25.48 -12.99h13.49v13.49h-13.49ZM-25.48 13.99h13.49v13.49h-13.49ZM-25.48 40.97h13.49v13.49h-13.49ZM-25.48 67.95h13.49v13.49h-13.49ZM-25.48 94.93h13.49v13.49h-13.49ZM-25.48 121.91h13.49v13.49h-13.49ZM-25.48 148.89h13.49v13.49h-13.49ZM-25.48 175.87h13.49v13.49h-13.49ZM-25.48 202.85h13.49v13.49h-13.49ZM-25.48 229.83h13.49v13.49h-13.49ZM-25.48 256.81h13.49v13.49h-13.49ZM-25.48 283.79h13.49v13.49h-13.49ZM-25.48 310.77h13.49v13.49h-13.49ZM-25.48 337.75h13.49v13.49h-13.49ZM-25.48 364.73h13.49v13.49h-13.49ZM-25.48 391.71h13.49v13.49h-13.49ZM-11.99 -26.48h13.49v13.49h-13.49ZM-11.99 0.50h13.49v13.49h-13.49ZM-11.99 27.48h13.49v13.49h-13.49ZM-11.99 54.46h13.49v13.49h-13.49ZM-11.99 81.44h13.49v13.49h-13.49ZM-11.99 108.42h13.49v13.49h-13.49ZM-11.99 135.40h13.49v13.49h-13.49ZM-11.99 162.38h13.49v13.49h-13.49ZM-11.99 189.36h13.49v13.49h-13.49ZM-11.99 216.34h13.49v13.49h-13.49ZM-11.99 243.32h13.49v13.49h-13.49ZM-11.99 270.30h13.49v13.49h-13.49ZM-11.99 297.28h13.49v13.49h-13.49ZM-11.99 324.26h13.49v13.49h-13.49ZM-11.99 351.24h13.49v13.49h-13.49ZM-11.99 378.22h13.49v13.49h-13.49ZM-11.99 405.20h13.49v13.49h-13.49ZM1.50 -12.99h13.49v13.49h-13.49ZM1.50 13.99h13.49v13.49h-13.49ZM1.50 40.97h13.49v13.49h-13.49ZM1.50 67.95h13.49v13.49h-13.49ZM1.50 94.93h13.49v13.49h-13.49ZM1.50 121.91h13.49v13.49h-13.49ZM1.50 148.89h13.49v13.49h-13.49ZM1.50 175.87h13.49v13.49h-13.49ZM1.50 202.85h13.49v13.49h-13.49ZM1.50 229.83h13.49v13.49h-13.49ZM1.50 256.81h13.49v13.49h-13.49ZM1.50 283.79h13.49v13.49h-13.49ZM1.50 310.77h13.49v13.49h-13.49ZM1.50 337.75h13.49v13.49h-13.49ZM1.50 364.73h13.49v13.49h-13.49ZM1.50 391.71h13.49v13.49h-13.49ZM14.99 -26.48h13.49v13.49h-13.49ZM14.99 0.50h13.49v13.49h-13.49ZM14.99 27.48h13.49v13.49h-13.49ZM14.99 54.46h13.49v13.49h-13.49ZM14.99 81.44h13.49v13.49h-13.49ZM14.99 108.42h13.49v13.49h-13.49ZM14.99 135.40h13.49v13.49h-13.49ZM14.99 162.38h13.49v13.49h-13.49ZM14.99 189.36h13.49v13.49h-13.49ZM14.99 216.34h13.49v13.49h-13.49ZM14.99 243.32h13.49v13.49h-13.49ZM14.99 270.30h13.49v13.49h-13.49ZM14.99 297.28h13.49v13.49h-13.49ZM14.99 324.26h13.49v13.49h-13.49ZM14.99 351.24h13.49v13.49h-13.49ZM14.99 378.22h13.49v13.49h-13.49ZM14.99 405.20h13.49v13.49h-13.49ZM28.48 -12.99h13.49v13.49h-13.49ZM28.48 13.99h13.49v13.49h-13.49ZM28.48 40.97h13.49v13.49h-13.49ZM28.48 67.95h13.49v13.49h-13.49ZM28.48 94.93h13.49v13.49h-13.49ZM28.48 121.91h13.49v13.49h-13.49ZM28.48 148.89h13.49v13.49h-13.49ZM28.48 175.87h13.49v13.49h-13.49ZM28.48 202.85h13.49v13.49h-13.49ZM28.48 229.83h13.49v13.49h-13.49ZM28.48 256.81h13.49v13.49h-13.49ZM28.48 283.79h13.49v13.49h-13.49ZM28.48 310.77h13.49v13.49h-13.49ZM28.48 337.75h13.49v13.49h-13.49ZM28.48 364.73h13.49v13.49h-13.49ZM28.48 391.71h13.49v13.49h-13.49ZM41.97 -26.48h13.49v13.49h-13.49ZM41.97 0.50h13.49v13.49h-13.49ZM41.97 27.48h13.49v13.49h-13.49ZM41.97 54.46h13.49v13.49h-13.49ZM41.97 81.44h13.49v13.49h-13.49ZM41.97 108.42h13.49v13.49h-13.49ZM41.97 135.40h13.49v13.49h-13.49ZM41.97 162.38h13.49v13.49h-13.49ZM41.97 189.36h13.49v13.49h-13.49ZM41.97 216.34h13.49v13.49h-13.49ZM41.97 243.32h13.49v13.49h-13.49ZM41.97 270.30h13.49v13.49h-13.49ZM41.97 297.28h13.49v13.49h-13.49ZM41.97 324.26h13.49v13.49h-13.49ZM41.97 351.24h13.49v13.49h-13.49ZM41.97 378.22h13.49v13.49h-13.49ZM41.97 405.20h13.49v13.49h-13.49ZM55.46 -12.99h13.49v13.49h-13.49ZM55.46 13.99h13.49v13.49h-13.49ZM55.46 40.97h13.49v13.49h-13.49ZM55.46 67.95h13.49v13.49h-13.49ZM55.46 94.93h13.49v13.49h-13.49ZM55.46 121.91h13.49v13.49h-13.49ZM55.46 148.89h13.49v13.49h-13.49ZM55.46 175.87h13.49v13.49h-13.49ZM55.46 202.85h13.49v13.49h-13.49ZM55.46 229.83h13.49v13.49h-13.49ZM55.46 256.81h13.49v13.49h-13.49ZM55.46 283.79h13.49v13.49h-13.49ZM55.46 310.77h13.49v13.49h-13.49ZM55.46 337.75h13.49v13.49h-13.49ZM55.46 364.73h13.49v13.49h-13.49ZM55.46 391.71h13.49v13.49h-13.49ZM68.95 -26.48h13.49v13.49h-13.49ZM68.95 0.50h13.49v13.49h-13.49ZM68.95 27.48h13.49v13.49h-13.49ZM68.95 54.46h13.49v13.49h-13.49ZM68.95 81.44h13.49v13.49h-13.49ZM68.95 108.42h13.49v13.49h-13.49ZM68.95 135.40h13.49v13.49h-13.49ZM68.95 162.38h13.49v13.49h-13.49ZM68.95 189.36h13.49v13.49h-13.49ZM68.95 216.34h13.49v13.49h-13.49ZM68.95 243.32h13.49v13.49h-13.49ZM68.95 270.30h13.49v13.49h-13.49ZM68.95 297.28h13.49v13.49h-13.49ZM68.95 324.26h13.49v13.49h-13.49ZM68.95 351.24h13.49v13.49h-13.49ZM68.95 378.22h13.49v13.49h-13.49ZM68.95 405.20h13.49v13.49h-13.49ZM82.44 -12.99h13.49v13.49h-13.49ZM82.44 13.99h13.49v13.49h-13.49ZM82.44 40.97h13.49v13.49h-13.49ZM82.44 67.95h13.49v13.49h-13.49ZM82.44 94.93h13.49v13.49h-13.49ZM82.44 121.91h13.49v13.49h-13.49ZM82.44 148.89h13.49v13.49h-13.49ZM82.44 175.87h13.49v13.49h-13.49ZM82.44 202.85h13.49v13.49h-13.49ZM82.44 229.83h13.49v13.49h-13.49ZM82.44 256.81h13.49v13.49h-13.49ZM82.44 283.79h13.49v13.49h-13.49ZM82.44 310.77h13.49v13.49h-13.49ZM82.44 337.75h13.49v13.49h-13.49ZM82.44 364.73h13.49v13.49h-13.49ZM82.44 391.71h13.49v13.49h-13.49ZM95.93 -26.48h13.49v13.49h-13.49ZM95.93 0.50h13.49v13.49h-13.49ZM95.93 27.48h13.49v13.49h-13.49ZM95.93 54.46h13.49v13.49h-13.49ZM95.93 81.44h13.49v13.49h-13.49ZM95.93 108.42h13.49v13.49h-13.49ZM95.93 135.40h13.49v13.49h-13.49ZM95.93 162.38h13.49v13.49h-13.49ZM95.93 189.36h13.49v13.49h-13.49ZM95.93 216.34h13.49v13.49h-13.49ZM95.93 243.32h13.49v13.49h-13.49ZM95.93 270.30h13.49v13.49h-13.49ZM95.93 297.28h13.49v13.49h-13.49ZM95.93 324.26h13.49v13.49h-13.49ZM95.93 351.24h13.49v13.49h-13.49ZM95.93 378.22h13.49v13.49h-13.49ZM95.93 405.20h13.49v13.49h-13.49ZM109.42 -12.99h13.49v13.49h-13.49ZM109.42 13.99h13.49v13.49h-13.49ZM109.42 40.97h13.49v13.49h-13.49ZM109.42 67.95h13.49v13.49h-13.49ZM109.42 94.93h13.49v13.49h-13.49ZM109.42 121.91h13.49v13.49h-13.49ZM109.42 148.89h13.49v13.49h-13.49ZM109.42 175.87h13.49v13.49h-13.49ZM109.42 202.85h13.49v13.49h-13.49ZM109.42 229.83h13.49v13.49h-13.49ZM109.42 256.81h13.49v13.49h-13.49ZM109.42 283.79h13.49v13.49h-13.49ZM109.42 310.77h13.49v13.49h-13.49ZM109.42 337.75h13.49v13.49h-13.49ZM109.42 364.73h13.49v13.49h-13.49ZM109.42 391.71h13.49v13.49h-13.49ZM122.91 -26.48h13.49v13.49h-13.49ZM122.91 0.50h13.49v13.49h-13.49ZM122.91 27.48h13.49v13.49h-13.49ZM122.91 54.46h13.49v13.49h-13.49ZM122.91 81.44h13.49v13.49h-13.49ZM122.91 108.42h13.49v13.49h-13.49ZM122.91 135.40h13.49v13.49h-13.49ZM122.91 162.38h13.49v13.49h-13.49ZM122.91 189.36h13.49v13.49h-13.49ZM122.91 216.34h13.49v13.49h-13.49ZM122.91 243.32h13.49v13.49h-13.49ZM122.91 270.30h13.49v13.49h-13.49ZM122.91 297.28h13.49v13.49h-13.49ZM122.91 324.26h13.49v13.49h-13.49ZM122.91 351.24h13.49v13.49h-13.49ZM122.91 378.22h13.49v13.49h-13.49ZM122.91 405.20h13.49v13.49h-13.49ZM136.40 -12.99h13.49v13.49h-13.49ZM136.40 13.99h13.49v13.49h-13.49ZM136.40 40.97h13.49v13.49h-13.49ZM136.40 67.95h13.49v13.49h-13.49ZM136.40 94.93h13.49v13.49h-13.49ZM136.40 121.91h13.49v13.49h-13.49ZM136.40 148.89h13.49v13.49h-13.49ZM136.40 175.87h13.49v13.49h-13.49ZM136.40 202.85h13.49v13.49h-13.49ZM136.40 229.83h13.49v13.49h-13.49ZM136.40 256.81h13.49v13.49h-13.49ZM136.40 283.79h13.49v13.49h-13.49ZM136.40 310.77h13.49v13.49h-13.49ZM136.40 337.75h13.49v13.49h-13.49ZM136.40 364.73h13.49v13.49h-13.49ZM136.40 391.71h13.49v13.49h-13.49ZM149.89 -26.48h13.49v13.49h-13.49ZM149.89 0.50h13.49v13.49h-13.49ZM149.89 27.48h13.49v13.49h-13.49ZM149.89 54.46h13.49v13.49h-13.49ZM149.89 81.44h13.49v13.49h-13.49ZM149.89 108.42h13.49v13.49h-13.49ZM149.89 135.40h13.49v13.49h-13.49ZM149.89 162.38h13.49v13.49h-13.49ZM149.89 189.36h13.49v13.49h-13.49ZM149.89 216.34h13.49v13.49h-13.49ZM149.89 243.32h13.49v13.49h-13.49ZM149.89 270.30h13.49v13.49h-13.49ZM149.89 297.28h13.49v13.49h-13.49ZM149.89 324.26h13.49v13.49h-13.49ZM149.89 351.24h13.49v13.49h-13.49ZM149.89 378.22h13.49v13.49h-13.49ZM149.89 405.20h13.49v13.49h-13.49ZM163.38 -12.99h13.49v13.49h-13.49ZM163.38 13.99h13.49v13.49h-13.49ZM163.38 40.97h13.49v13.49h-13.49ZM163.38 67.95h13.49v13.49h-13.49ZM163.38 94.93h13.49v13.49h-13.49ZM163.38 121.91h13.49v13.49h-13.49ZM163.38 148.89h13.49v13.49h-13.49ZM163.38 175.87h13.49v13.49h-13.49ZM163.38 202.85h13.49v13.49h-13.49ZM163.38 229.83h13.49v13.49h-13.49ZM163.38 256.81h13.49v13.49h-13.49ZM163.38 283.79h13.49v13.49h-13.49ZM163.38 310.77h13.49v13.49h-13.49ZM163.38 337.75h13.49v13.49h-13.49ZM163.38 364.73h13.49v13.49h-13.49ZM163.38 391.71h13.49v13.49h-13.49ZM176.87 -26.48h13.49v13.49h-13.49ZM176.87 0.50h13.49v13.49h-13.49ZM176.87 27.48h13.49v13.49h-13.49ZM176.87 54.46h13.49v13.49h-13.49ZM176.87 81.44h13.49v13.49h-13.49ZM176.87 108.42h13.49v13.49h-13.49ZM176.87 135.40h13.49v13.49h-13.49ZM176.87 162.38h13.49v13.49h-13.49ZM176.87 189.36h13.49v13.49h-13.49ZM176.87 216.34h13.49v13.49h-13.49ZM176.87 243.32h13.49v13.49h-13.49ZM176.87 270.30h13.49v13.49h-13.49ZM176.87 297.28h13.49v13.49h-13.49ZM176.87 324.26h13.49v13.49h-13.49ZM176.87 351.24h13.49v13.49h-13.49ZM176.87 378.22h13.49v13.49h-13.49ZM176.87 405.20h13.49v13.49h-13.49ZM190.36 -12.99h13.49v13.49h-13.49ZM190.36 13.99h13.49v13.49h-13.49ZM190.36 40.97h13.49v13.49h-13.49ZM190.36 67.95h13.49v13.49h-13.49ZM190.36 94.93h13.49v13.49h-13.49ZM190.36 121.91h13.49v13.49h-13.49ZM190.36 148.89h13.49v13.49h-13.49ZM190.36 175.87h13.49v13.49h-13.49ZM190.36 202.85h13.49v13.49h-13.49ZM190.36 229.83h13.49v13.49h-13.49ZM190.36 256.81h13.49v13.49h-13.49ZM190.36 283.79h13.49v13.49h-13.49ZM190.36 310.77h13.49v13.49h-13.49ZM190.36 337.75h13.49v13.49h-13.49ZM190.36 364.73h13.49v13.49h-13.49ZM190.36 391.71h13.49v13.49h-13.49ZM203.85 -26.48h13.49v13.49h-13.49ZM203.85 0.50h13.49v13.49h-13.49ZM203.85 27.48h13.49v13.49h-13.49ZM203.85 54.46h13.49v13.49h-13.49ZM203.85 81.44h13.49v13.49h-13.49ZM203.85 108.42h13.49v13.49h-13.49ZM203.85 135.40h13.49v13.49h-13.49ZM203.85 162.38h13.49v13.49h-13.49ZM203.85 189.36h13.49v13.49h-13.49ZM203.85 216.34h13.49v13.49h-13.49ZM203.85 243.32h13.49v13.49h-13.49ZM203.85 270.30h13.49v13.49h-13.49ZM203.85 297.28h13.49v13.49h-13.49ZM203.85 324.26h13.49v13.49h-13.49ZM203.85 351.24h13.49v13.49h-13.49ZM203.85 378.22h13.49v13.49h-13.49ZM203.85 405.20h13.49v13.49h-13.49ZM217.34 -12.99h13.49v13.49h-13.49ZM217.34 13.99h13.49v13.49h-13.49ZM217.34 40.97h13.49v13.49h-13.49ZM217.34 67.95h13.49v13.49h-13.49ZM217.34 94.93h13.49v13.49h-13.49ZM217.34 121.91h13.49v13.49h-13.49ZM217.34 148.89h13.49v13.49h-13.49ZM217.34 175.87h13.49v13.49h-13.49ZM217.34 202.85h13.49v13.49h-13.49ZM217.34 229.83h13.49v13.49h-13.49ZM217.34 256.81h13.49v13.49h-13.49ZM217.34 283.79h13.49v13.49h-13.49ZM217.34 310.77h13.49v13.49h-13.49ZM217.34 337.75h13.49v13.49h-13.49ZM217.34 364.73h13.49v13.49h-13.49ZM217.34 391.71h13.49v13.49h-13.49ZM230.83 -26.48h13.49v13.49h-13.49ZM230.83 0.50h13.49v13.49h-13.49ZM230.83 27.48h13.49v13.49h-13.49ZM230.83 54.46h13.49v13.49h-13.49ZM230.83 81.44h13.49v13.49h-13.49ZM230.83 108.42h13.49v13.49h-13.49ZM230.83 135.40h13.49v13.49h-13.49ZM230.83 162.38h13.49v13.49h-13.49ZM230.83 189.36h13.49v13.49h-13.49ZM230.83 216.34h13.49v13.49h-13.49ZM230.83 243.32h13.49v13.49h-13.49ZM230.83 270.30h13.49v13.49h-13.49ZM230.83 297.28h13.49v13.49h-13.49ZM230.83 324.26h13.49v13.49h-13.49ZM230.83 351.24h13.49v13.49h-13.49ZM230.83 378.22h13.49v13.49h-13.49ZM230.83 405.20h13.49v13.49h-13.49ZM244.32 -12.99h13.49v13.49h-13.49ZM244.32 13.99h13.49v13.49h-13.49ZM244.32 40.97h13.49v13.49h-13.49ZM244.32 67.95h13.49v13.49h-13.49ZM244.32 94.93h13.49v13.49h-13.49ZM244.32 121.91h13.49v13.49h-13.49ZM244.32 148.89h13.49v13.49h-13.49ZM244.32 175.87h13.49v13.49h-13.49ZM244.32 202.85h13.49v13.49h-13.49ZM244.32 229.83h13.49v13.49h-13.49ZM244.32 256.81h13.49v13.49h-13.49ZM244.32 283.79h13.49v13.49h-13.49ZM244.32 310.77h13.49v13.49h-13.49ZM244.32 337.75h13.49v13.49h-13.49ZM244.32 364.73h13.49v13.49h-13.49ZM244.32 391.71h13.49v13.49h-13.49ZM257.81 -26.48h13.49v13.49h-13.49ZM257.81 0.50h13.49v13.49h-13.49ZM257.81 27.48h13.49v13.49h-13.49ZM257.81 54.46h13.49v13.49h-13.49ZM257.81 81.44h13.49v13.49h-13.49ZM257.81 108.42h13.49v13.49h-13.49ZM257.81 135.40h13.49v13.49h-13.49ZM257.81 162.38h13.49v13.49h-13.49ZM257.81 189.36h13.49v13.49h-13.49ZM257.81 216.34h13.49v13.49h-13.49ZM257.81 243.32h13.49v13.49h-13.49ZM257.81 270.30h13.49v13.49h-13.49ZM257.81 297.28h13.49v13.49h-13.49ZM257.81 324.26h13.49v13.49h-13.49ZM257.81 351.24h13.49v13.49h-13.49ZM257.81 378.22h13.49v13.49h-13.49ZM257.81 405.20h13.49v13.49h-13.49ZM271.30 -12.99h13.49v13.49h-13.49ZM271.30 13.99h13.49v13.49h-13.49ZM271.30 40.97h13.49v13.49h-13.49ZM271.30 67.95h13.49v13.49h-13.49ZM271.30 94.93h13.49v13.49h-13.49ZM271.30 121.91h13.49v13.49h-13.49ZM271.30 148.89h13.49v13.49h-13.49ZM271.30 175.87h13.49v13.49h-13.49ZM271.30 202.85h13.49v13.49h-13.49ZM271.30 229.83h13.49v13.49h-13.49ZM271.30 256.81h13.49v13.49h-13.49ZM271.30 283.79h13.49v13.49h-13.49ZM271.30 310.77h13.49v13.49h-13.49ZM271.30 337.75h13.49v13.49h-13.49ZM271.30 364.73h13.49v13.49h-13.49ZM271.30 391.71h13.49v13.49h-13.49ZM284.79 -26.48h13.49v13.49h-13.49ZM284.79 0.50h13.49v13.49h-13.49ZM284.79 27.48h13.49v13.49h-13.49ZM284.79 54.46h13.49v13.49h-13.49ZM284.79 81.44h13.49v13.49h-13.49ZM284.79 108.42h13.49v13.49h-13.49ZM284.79 135.40h13.49v13.49h-13.49ZM284.79 162.38h13.49v13.49h-13.49ZM284.79 189.36h13.49v13.49h-13.49ZM284.79 216.34h13.49v13.49h-13.49ZM284.79 243.32h13.49v13.49h-13.49ZM284.79 270.30h13.49v13.49h-13.49ZM284.79 297.28h13.49v13.49h-13.49ZM284.79 324.26h13.49v13.49h-13.49ZM284.79 351.24h13.49v13.49h-13.49ZM284.79 378.22h13.49v13.49h-13.49ZM284.79 405.20h13.49v13.49h-13.49ZM298.28 -12.99h13.49v13.49h-13.49ZM298.28 13.99h13.49v13.49h-13.49ZM298.28 40.97h13.49v13.49h-13.49ZM298.28 67.95h13.49v13.49h-13.49ZM298.28 94.93h13.49v13.49h-13.49ZM298.28 121.91h13.49v13.49h-13.49ZM298.28 148.89h13.49v13.49h-13.49ZM298.28 175.87h13.49v13.49h-13.49ZM298.28 202.85h13.49v13.49h-13.49ZM298.28 229.83h13.49v13.49h-13.49ZM298.28 256.81h13.49v13.49h-13.49ZM298.28 283.79h13.49v13.49h-13.49ZM298.28 310.77h13.49v13.49h-13.49ZM298.28 337.75h13.49v13.49h-13.49ZM298.28 364.73h13.49v13.49h-13.49ZM298.28 391.71h13.49v13.49h-13.49ZM311.77 -26.48h13.49v13.49h-13.49ZM311.77 0.50h13.49v13.49h-13.49ZM311.77 27.48h13.49v13.49h-13.49ZM311.77 54.46h13.49v13.49h-13.49ZM311.77 81.44h13.49v13.49h-13.49ZM311.77 108.42h13.49v13.49h-13.49ZM311.77 135.40h13.49v13.49h-13.49ZM311.77 162.38h13.49v13.49h-13.49ZM311.77 189.36h13.49v13.49h-13.49ZM311.77 216.34h13.49v13.49h-13.49ZM311.77 243.32h13.49v13.49h-13.49ZM311.77 270.30h13.49v13.49h-13.49ZM311.77 297.28h13.49v13.49h-13.49ZM311.77 324.26h13.49v13.49h-13.49ZM311.77 351.24h13.49v13.49h-13.49ZM311.77 378.22h13.49v13.49h-13.49ZM311.77 405.20h13.49v13.49h-13.49ZM325.26 -12.99h13.49v13.49h-13.49ZM325.26 13.99h13.49v13.49h-13.49ZM325.26 40.97h13.49v13.49h-13.49ZM325.26 67.95h13.49v13.49h-13.49ZM325.26 94.93h13.49v13.49h-13.49ZM325.26 121.91h13.49v13.49h-13.49ZM325.26 148.89h13.49v13.49h-13.49ZM325.26 175.87h13.49v13.49h-13.49ZM325.26 202.85h13.49v13.49h-13.49ZM325.26 229.83h13.49v13.49h-13.49ZM325.26 256.81h13.49v13.49h-13.49ZM325.26 283.79h13.49v13.49h-13.49ZM325.26 310.77h13.49v13.49h-13.49ZM325.26 337.75h13.49v13.49h-13.49ZM325.26 364.73h13.49v13.49h-13.49ZM325.26 391.71h13.49v13.49h-13.49ZM338.75 -26.48h13.49v13.49h-13.49ZM338.75 0.50h13.49v13.49h-13.49ZM338.75 27.48h13.49v13.49h-13.49ZM338.75 54.46h13.49v13.49h-13.49ZM338.75 81.44h13.49v13.49h-13.49ZM338.75 108.42h13.49v13.49h-13.49ZM338.75 135.40h13.49v13.49h-13.49ZM338.75 162.38h13.49v13.49h-13.49ZM338.75 189.36h13.49v13.49h-13.49ZM338.75 216.34h13.49v13.49h-13.49ZM338.75 243.32h13.49v13.49h-13.49ZM338.75 270.30h13.49v13.49h-13.49ZM338.75 297.28h13.49v13.49h-13.49ZM338.75 324.26h13.49v13.49h-13.49ZM338.75 351.24h13.49v13.49h-13.49ZM338.75 378.22h13.49v13.49h-13.49ZM338.75 405.20h13.49v13.49h-13.49ZM352.24 -12.99h13.49v13.49h-13.49ZM352.24 13.99h13.49v13.49h-13.49ZM352.24 40.97h13.49v13.49h-13.49ZM352.24 67.95h13.49v13.49h-13.49ZM352.24 94.93h13.49v13.49h-13.49ZM352.24 121.91h13.49v13.49h-13.49ZM352.24 148.89h13.49v13.49h-13.49ZM352.24 175.87h13.49v13.49h-13.49ZM352.24 202.85h13.49v13.49h-13.49ZM352.24 229.83h13.49v13.49h-13.49ZM352.24 256.81h13.49v13.49h-13.49ZM352.24 283.79h13.49v13.49h-13.49ZM352.24 310.77h13.49v13.49h-13.49ZM352.24 337.75h13.49v13.49h-13.49ZM352.24 364.73h13.49v13.49h-13.49ZM352.24 391.71h13.49v13.49h-13.49ZM365.73 -26.48h13.49v13.49h-13.49ZM365.73 0.50h13.49v13.49h-13.49ZM365.73 27.48h13.49v13.49h-13.49ZM365.73 54.46h13.49v13.49h-13.49ZM365.73 81.44h13.49v13.49h-13.49ZM365.73 108.42h13.49v13.49h-13.49ZM365.73 135.40h13.49v13.49h-13.49ZM365.73 162.38h13.49v13.49h-13.49ZM365.73 189.36h13.49v13.49h-13.49ZM365.73 216.34h13.49v13.49h-13.49ZM365.73 243.32h13.49v13.49h-13.49ZM365.73 270.30h13.49v13.49h-13.49ZM365.73 297.28h13.49v13.49h-13.49ZM365.73 324.26h13.49v13.49h-13.49ZM365.73 351.24h13.49v13.49h-13.49ZM365.73 378.22h13.49v13.49h-13.49ZM365.73 405.20h13.49v13.49h-13.49ZM379.22 -12.99h13.49v13.49h-13.49ZM379.22 13.99h13.49v13.49h-13.49ZM379.22 40.97h13.49v13.49h-13.49ZM379.22 67.95h13.49v13.49h-13.49ZM379.22 94.93h13.49v13.49h-13.49ZM379.22 121.91h13.49v13.49h-13.49ZM379.22 148.89h13.49v13.49h-13.49ZM379.22 175.87h13.49v13.49h-13.49ZM379.22 202.85h13.49v13.49h-13.49ZM379.22 229.83h13.49v13.49h-13.49ZM379.22 256.81h13.49v13.49h-13.49ZM379.22 283.79h13.49v13.49h-13.49ZM379.22 310.77h13.49v13.49h-13.49ZM379.22 337.75h13.49v13.49h-13.49ZM379.22 364.73h13.49v13.49h-13.49ZM379.22 391.71h13.49v13.49h-13.49ZM392.71 -26.48h13.49v13.49h-13.49ZM392.71 0.50h13.49v13.49h-13.49ZM392.71 27.48h13.49v13.49h-13.49ZM392.71 54.46h13.49v13.49h-13.49ZM392.71 81.44h13.49v13.49h-13.49ZM392.71 108.42h13.49v13.49h-13.49ZM392.71 135.40h13.49v13.49h-13.49ZM392.71 162.38h13.49v13.49h-13.49ZM392.71 189.36h13.49v13.49h-13.49ZM392.71 216.34h13.49v13.49h-13.49ZM392.71 243.32h13.49v13.49h-13.49ZM392.71 270.30h13.49v13.49h-13.49ZM392.71 297.28h13.49v13.49h-13.49ZM392.71 324.26h13.49v13.49h-13.49ZM392.71 351.24h13.49v13.49h-13.49ZM392.71 378.22h13.49v13.49h-13.49ZM392.71 405.20h13.49v13.49h-13.49ZM406.20 -12.99h13.49v13.49h-13.49ZM406.20 13.99h13.49v13.49h-13.49ZM406.20 40.97h13.49v13.49h-13.49ZM406.20 67.95h13.49v13.49h-13.49ZM406.20 94.93h13.49v13.49h-13.49ZM406.20 121.91h13.49v13.49h-13.49ZM406.20 148.89h13.49v13.49h-13.49ZM406.20 175.87h13.49v13.49h-13.49ZM406.20 202.85h13.49v13.49h-13.49ZM406.20 229.83h13.49v13.49h-13.49ZM406.20 256.81h13.49v13.49h-13.49ZM406.20 283.79h13.49v13.49h-13.49ZM406.20 310.77h13.49v13.49h-13.49ZM406.20 337.75h13.49v13.49h-13.49ZM406.20 364.73h13.49v13.49h-13.49ZM406.20 391.71h13.49v13.49h-13.49ZM419.69 -26.48h13.49v13.49h-13.49ZM419.69 0.50h13.49v13.49h-13.49ZM419.69 27.48h13.49v13.49h-13.49ZM419.69 54.46h13.49v13.49h-13.49ZM419.69 81.44h13.49v13.49h-13.49ZM419.69 108.42h13.49v13.49h-13.49ZM419.69 135.40h13.49v13.49h-13.49ZM419.69 162.38h13.49v13.49h-13.49ZM419.69 189.36h13.49v13.49h-13.49ZM419.69 216.34h13.49v13.49h-13.49ZM419.69 243.32h13.49v13.49h-13.49ZM419.69 270.30h13.49v13.49h-13.49ZM419.69 297.28h13.49v13.49h-13.49ZM419.69 324.26h13.49v13.49h-13.49ZM419.69 351.24h13.49v13.49h-13.49ZM419.69 378.22h13.49v13.49h-13.49ZM419.69 405.20h13.49v13.49h-13.49ZM433.18 -12.99h13.49v13.49h-13.49ZM433.18 13.99h13.49v13.49h-13.49ZM433.18 40.97h13.49v13.49h-13.49ZM433.18 67.95h13.49v13.49h-13.49ZM433.18 94.93h13.49v13.49h-13.49ZM433.18 121.91h13.49v13.49h-13.49ZM433.18 148.89h13.49v13.49h-13.49ZM433.18 175.87h13.49v13.49h-13.49ZM433.18 202.85h13.49v13.49h-13.49ZM433.18 229.83h13.49v13.49h-13.49ZM433.18 256.81h13.49v13.49h-13.49ZM433.18 283.79h13.49v13.49h-13.49ZM433.18 310.77h13.49v13.49h-13.49ZM433.18 337.75h13.49v13.49h-13.49ZM433.18 364.73h13.49v13.49h-13.49ZM433.18 391.71h13.49v13.49h-13.49ZM446.67 -26.48h13.49v13.49h-13.49ZM446.67 0.50h13.49v13.49h-13.49ZM446.67 27.48h13.49v13.49h-13.49ZM446.67 54.46h13.49v13.49h-13.49ZM446.67 81.44h13.49v13.49h-13.49ZM446.67 108.42h13.49v13.49h-13.49ZM446.67 135.40h13.49v13.49h-13.49ZM446.67 162.38h13.49v13.49h-13.49ZM446.67 189.36h13.49v13.49h-13.49ZM446.67 216.34h13.49v13.49h-13.49ZM446.67 243.32h13.49v13.49h-13.49ZM446.67 270.30h13.49v13.49h-13.49ZM446.67 297.28h13.49v13.49h-13.49ZM446.67 324.26h13.49v13.49h-13.49ZM446.67 351.24h13.49v13.49h-13.49ZM446.67 378.22h13.49v13.49h-13.49ZM446.67 405.20h13.49v13.49h-13.49ZM460.16 -12.99h13.49v13.49h-13.49ZM460.16 13.99h13.49v13.49h-13.49ZM460.16 40.97h13.49v13.49h-13.49ZM460.16 67.95h13.49v13.49h-13.49ZM460.16 94.93h13.49v13.49h-13.49ZM460.16 121.91h13.49v13.49h-13.49ZM460.16 148.89h13.49v13.49h-13.49ZM460.16 175.87h13.49v13.49h-13.49ZM460.16 202.85h13.49v13.49h-13.49ZM460.16 229.83h13.49v13.49h-13.49ZM460.16 256.81h13.49v13.49h-13.49ZM460.16 283.79h13.49v13.49h-13.49ZM460.16 310.77h13.49v13.49h-13.49ZM460.16 337.75h13.49v13.49h-13.49ZM460.16 364.73h13.49v13.49h-13.49ZM460.16 391.71h13.49v13.49h-13.49ZM473.65 -26.48h13.49v13.49h-13.49ZM473.65 0.50h13.49v13.49h-13.49ZM473.65 27.48h13.49v13.49h-13.49ZM473.65 54.46h13.49v13.49h-13.49ZM473.65 81.44h13.49v13.49h-13.49ZM473.65 108.42h13.49v13.49h-13.49ZM473.65 135.40h13.49v13.49h-13.49ZM473.65 162.38h13.49v13.49h-13.49ZM473.65 189.36h13.49v13.49h-13.49ZM473.65 216.34h13.49v13.49h-13.49ZM473.65 243.32h13.49v13.49h-13.49ZM473.65 270.30h13.49v13.49h-13.49ZM473.65 297.28h13.49v13.49h-13.49ZM473.65 324.26h13.49v13.49h-13.49ZM473.65 351.24h13.49v13.49h-13.49ZM473.65 378.22h13.49v13.49h-13.49ZM473.65 405.20h13.49v13.49h-13.49ZM487.14 -12.99h13.49v13.49h-13.49ZM487.14 13.99h13.49v13.49h-13.49ZM487.14 40.97h13.49v13.49h-13.49ZM487.14 67.95h13.49v13.49h-13.49ZM487.14 94.93h13.49v13.49h-13.49ZM487.14 121.91h13.49v13.49h-13.49ZM487.14 148.89h13.49v13.49h-13.49ZM487.14 175.87h13.49v13.49h-13.49ZM487.14 202.85h13.49v13.49h-13.49ZM487.14 229.83h13.49v13.49h-13.49ZM487.14 256.81h13.49v13.49h-13.49ZM487.14 283.79h13.49v13.49h-13.49ZM487.14 310.77h13.49v13.49h-13.49ZM487.14 337.75h13.49v13.49h-13.49ZM487.14 364.73h13.49v13.49h-13.49ZM487.14 391.71h13.49v13.49h-13.49ZM500.63 -26.48h13.49v13.49h-13.49ZM500.63 0.50h13.49v13.49h-13.49ZM500.63 27.48h13.49v13.49h-13.49ZM500.63 54.46h13.49v13.49h-13.49ZM500.63 81.44h13.49v13.49h-13.49ZM500.63 108.42h13.49v13.49h-13.49ZM500.63 135.40h13.49v13.49h-13.49ZM500.63 162.38h13.49v13.49h-13.49ZM500.63 189.36h13.49v13.49h-13.49ZM500.63 216.34h13.49v13.49h-13.49ZM500.63 243.32h13.49v13.49h-13.49ZM500.63 270.30h13.49v13.49h-13.49ZM500.63 297.28h13.49v13.49h-13.49ZM500.63 324.26h13.49v13.49h-13.49ZM500.63 351.24h13.49v13.49h-13.49ZM500.63 378.22h13.49v13.49h-13.49ZM500.63 405.20h13.49v13.49h-13.49ZM514.12 -12.99h13.49v13.49h-13.49ZM514.12 13.99h13.49v13.49h-13.49ZM514.12 40.97h13.49v13.49h-13.49ZM514.12 67.95h13.49v13.49h-13.49ZM514.12 94.93h13.49v13.49h-13.49ZM514.12 121.91h13.49v13.49h-13.49ZM514.12 148.89h13.49v13.49h-13.49ZM514.12 175.87h13.49v13.49h-13.49ZM514.12 202.85h13.49v13.49h-13.49ZM514.12 229.83h13.49v13.49h-13.49ZM514.12 256.81h13.49v13.49h-13.49ZM514.12 283.79h13.49v13.49h-13.49ZM514.12 310.77h13.49v13.49h-13.49ZM514.12 337.75h13.49v13.49h-13.49ZM514.12 364.73h13.49v13.49h-13.49ZM514.12 391.71h13.49v13.49h-13.49ZM527.61 -26.48h13.49v13.49h-13.49ZM527.61 0.50h13.49v13.49h-13.49ZM527.61 27.48h13.49v13.49h-13.49ZM527.61 54.46h13.49v13.49h-13.49ZM527.61 81.44h13.49v13.49h-13.49ZM527.61 108.42h13.49v13.49h-13.49ZM527.61 135.40h13.49v13.49h-13.49ZM527.61 162.38h13.49v13.49h-13.49ZM527.61 189.36h13.49v13.49h-13.49ZM527.61 216.34h13.49v13.49h-13.49ZM527.61 243.32h13.49v13.49h-13.49ZM527.61 270.30h13.49v13.49h-13.49ZM527.61 297.28h13.49v13.49h-13.49ZM527.61 324.26h13.49v13.49h-13.49ZM527.61 351.24h13.49v13.49h-13.49ZM527.61 378.22h13.49v13.49h-13.49ZM527.61 405.20h13.49v13.49h-13.49ZM541.10 -12.99h13.49v13.49h-13.49ZM541.10 13.99h13.49v13.49h-13.49ZM541.10 40.97h13.49v13.49h-13.49ZM541.10 67.95h13.49v13.49h-13.49ZM541.10 94.93h13.49v13.49h-13.49ZM541.10 121.91h13.49v13.49h-13.49ZM541.10 148.89h13.49v13.49h-13.49ZM541.10 175.87h13.49v13.49h-13.49ZM541.10 202.85h13.49v13.49h-13.49ZM541.10 229.83h13.49v13.49h-13.49ZM541.10 256.81h13.49v13.49h-13.49ZM541.10 283.79h13.49v13.49h-13.49ZM541.10 310.77h13.49v13.49h-13.49ZM541.10 337.75h13.49v13.49h-13.49ZM541.10 364.73h13.49v13.49h-13.49ZM541.10 391.71h13.49v13.49h-13.49ZM554.59 -26.48h13.49v13.49h-13.49ZM554.59 0.50h13.49v13.49h-13.49ZM554.59 27.48h13.49v13.49h-13.49ZM554.59 54.46h13.49v13.49h-13.49ZM554.59 81.44h13.49v13.49h-13.49ZM554.59 108.42h13.49v13.49h-13.49ZM554.59 135.40h13.49v13.49h-13.49ZM554.59 162.38h13.49v13.49h-13.49ZM554.59 189.36h13.49v13.49h-13.49ZM554.59 216.34h13.49v13.49h-13.49ZM554.59 243.32h13.49v13.49h-13.49ZM554.59 270.30h13.49v13.49h-13.49ZM554.59 297.28h13.49v13.49h-13.49ZM554.59 324.26h13.49v13.49h-13.49ZM554.59 351.24h13.49v13.49h-13.49ZM554.59 378.22h13.49v13.49h-13.49ZM554.59 405.20h13.49v13.49h-13.49ZM568.08 -12.99h13.49v13.49h-13.49ZM568.08 13.99h13.49v13.49h-13.49ZM568.08 40.97h13.49v13.49h-13.49ZM568.08 67.95h13.49v13.49h-13.49ZM568.08 94.93h13.49v13.49h-13.49ZM568.08 121.91h13.49v13.49h-13.49ZM568.08 148.89h13.49v13.49h-13.49ZM568.08 175.87h13.49v13.49h-13.49ZM568.08 202.85h13.49v13.49h-13.49ZM568.08 229.83h13.49v13.49h-13.49ZM568.08 256.81h13.49v13.49h-13.49ZM568.08 283.79h13.49v13.49h-13.49ZM568.08 310.77h13.49v13.49h-13.49ZM568.08 337.75h13.49v13.49h-13.49ZM568.08 364.73h13.49v13.49h-13.49ZM568.08 391.71h13.49v13.49h-13.49ZM581.57 -26.48h13.49v13.49h-13.49ZM581.57 0.50h13.49v13.49h-13.49ZM581.57 27.48h13.49v13.49h-13.49ZM581.57 54.46h13.49v13.49h-13.49ZM581.57 81.44h13.49v13.49h-13.49ZM581.57 108.42h13.49v13.49h-13.49ZM581.57 135.40h13.49v13.49h-13.49ZM581.57 162.38h13.49v13.49h-13.49ZM581.57 189.36h13.49v13.49h-13.49ZM581.57 216.34h13.49v13.49h-13.49ZM581.57 243.32h13.49v13.49h-13.49ZM581.57 270.30h13.49v13.49h-13.49ZM581.57 297.28h13.49v13.49h-13.49ZM581.57 324.26h13.49v13.49h-13.49ZM581.57 351.24h13.49v13.49h-13.49ZM581.57 378.22h13.49v13.49h-13.49ZM581.57 405.20h13.49v13.49h-13.49ZM595.06 -12.99h13.49v13.49h-13.49ZM595.06 13.99h13.49v13.49h-13.49ZM595.06 40.97h13.49v13.49h-13.49ZM595.06 67.95h13.49v13.49h-13.49ZM595.06 94.93h13.49v13.49h-13.49ZM595.06 121.91h13.49v13.49h-13.49ZM595.06 148.89h13.49v13.49h-13.49ZM595.06 175.87h13.49v13.49h-13.49ZM595.06 202.85h13.49v13.49h-13.49ZM595.06 229.83h13.49v13.49h-13.49ZM595.06 256.81h13.49v13.49h-13.49ZM595.06 283.79h13.49v13.49h-13.49ZM595.06 310.77h13.49v13.49h-13.49ZM595.06 337.75h13.49v13.49h-13.49ZM595.06 364.73h13.49v13.49h-13.49ZM595.06 391.71h13.49v13.49h-13.49ZM608.55 -26.48h13.49v13.49h-13.49ZM608.55 0.50h13.49v13.49h-13.49ZM608.55 27.48h13.49v13.49h-13.49ZM608.55 54.46h13.49v13.49h-13.49ZM608.55 81.44h13.49v13.49h-13.49ZM608.55 108.42h13.49v13.49h-13.49ZM608.55 135.40h13.49v13.49h-13.49ZM608.55 162.38h13.49v13.49h-13.49ZM608.55 189.36h13.49v13.49h-13.49ZM608.55 216.34h13.49v13.49h-13.49ZM608.55 243.32h13.49v13.49h-13.49ZM608.55 270.30h13.49v13.49h-13.49ZM608.55 297.28h13.49v13.49h-13.49ZM608.55 324.26h13.49v13.49h-13.49ZM608.55 351.24h13.49v13.49h-13.49ZM608.55 378.22h13.49v13.49h-13.49ZM608.55 405.20h13.49v13.49h-13.49ZM622.04 -12.99h13.49v13.49h-13.49ZM622.04 13.99h13.49v13.49h-13.49ZM622.04 40.97h13.49v13.49h-13.49ZM622.04 67.95h13.49v13.49h-13.49ZM622.04 94.93h13.49v13.49h-13.49ZM622.04 121.91h13.49v13.49h-13.49ZM622.04 148.89h13.49v13.49h-13.49ZM622.04 175.87h13.49v13.49h-13.49ZM622.04 202.85h13.49v13.49h-13.49ZM622.04 229.83h13.49v13.49h-13.49ZM622.04 256.81h13.49v13.49h-13.49ZM622.04 283.79h13.49v13.49h-13.49ZM622.04 310.77h13.49v13.49h-13.49ZM622.04 337.75h13.49v13.49h-13.49ZM622.04 364.73h13.49v13.49h-13.49ZM622.04 391.71h13.49v13.49h-13.49ZM635.53 -26.48h13.49v13.49h-13.49ZM635.53 0.50h13.49v13.49h-13.49ZM635.53 27.48h13.49v13.49h-13.49ZM635.53 54.46h13.49v13.49h-13.49ZM635.53 81.44h13.49v13.49h-13.49ZM635.53 108.42h13.49v13.49h-13.49ZM635.53 135.40h13.49v13.49h-13.49ZM635.53 162.38h13.49v13.49h-13.49ZM635.53 189.36h13.49v13.49h-13.49ZM635.53 216.34h13.49v13.49h-13.49ZM635.53 243.32h13.49v13.49h-13.49ZM635.53 270.30h13.49v13.49h-13.49ZM635.53 297.28h13.49v13.49h-13.49ZM635.53 324.26h13.49v13.49h-13.49ZM635.53 351.24h13.49v13.49h-13.49ZM635.53 378.22h13.49v13.49h-13.49ZM635.53 405.20h13.49v13.49h-13.49ZM649.02 -12.99h13.49v13.49h-13.49ZM649.02 13.99h13.49v13.49h-13.49ZM649.02 40.97h13.49v13.49h-13.49ZM649.02 67.95h13.49v13.49h-13.49ZM649.02 94.93h13.49v13.49h-13.49ZM649.02 121.91h13.49v13.49h-13.49ZM649.02 148.89h13.49v13.49h-13.49ZM649.02 175.87h13.49v13.49h-13.49ZM649.02 202.85h13.49v13.49h-13.49ZM649.02 229.83h13.49v13.49h-13.49ZM649.02 256.81h13.49v13.49h-13.49ZM649.02 283.79h13.49v13.49h-13.49ZM649.02 310.77h13.49v13.49h-13.49ZM649.02 337.75h13.49v13.49h-13.49ZM649.02 364.73h13.49v13.49h-13.49ZM649.02 391.71h13.49v13.49h-13.49ZM662.51 -26.48h13.49v13.49h-13.49ZM662.51 0.50h13.49v13.49h-13.49ZM662.51 27.48h13.49v13.49h-13.49ZM662.51 54.46h13.49v13.49h-13.49ZM662.51 81.44h13.49v13.49h-13.49ZM662.51 108.42h13.49v13.49h-13.49ZM662.51 135.40h13.49v13.49h-13.49ZM662.51 162.38h13.49v13.49h-13.49ZM662.51 189.36h13.49v13.49h-13.49ZM662.51 216.34h13.49v13.49h-13.49ZM662.51 243.32h13.49v13.49h-13.49ZM662.51 270.30h13.49v13.49h-13.49ZM662.51 297.28h13.49v13.49h-13.49ZM662.51 324.26h13.49v13.49h-13.49ZM662.51 351.24h13.49v13.49h-13.49ZM662.51 378.22h13.49v13.49h-13.49ZM662.51 405.20h13.49v13.49h-13.49ZM676.00 -12.99h13.49v13.49h-13.49ZM676.00 13.99h13.49v13.49h-13.49ZM676.00 40.97h13.49v13.49h-13.49ZM676.00 67.95h13.49v13.49h-13.49ZM676.00 94.93h13.49v13.49h-13.49ZM676.00 121.91h13.49v13.49h-13.49ZM676.00 148.89h13.49v13.49h-13.49ZM676.00 175.87h13.49v13.49h-13.49ZM676.00 202.85h13.49v13.49h-13.49ZM676.00 229.83h13.49v13.49h-13.49ZM676.00 256.81h13.49v13.49h-13.49ZM676.00 283.79h13.49v13.49h-13.49ZM676.00 310.77h13.49v13.49h-13.49ZM676.00 337.75h13.49v13.49h-13.49ZM676.00 364.73h13.49v13.49h-13.49ZM676.00 391.71h13.49v13.49h-13.49ZM689.49 -26.48h13.49v13.49h-13.49ZM689.49 0.50h13.49v13.49h-13.49ZM689.49 27.48h13.49v13.49h-13.49ZM689.49 54.46h13.49v13.49h-13.49ZM689.49 81.44h13.49v13.49h-13.49ZM689.49 108.42h13.49v13.49h-13.49ZM689.49 135.40h13.49v13.49h-13.49ZM689.49 162.38h13.49v13.49h-13.49ZM689.49 189.36h13.49v13.49h-13.49ZM689.49 216.34h13.49v13.49h-13.49ZM689.49 243.32h13.49v13.49h-13.49ZM689.49 270.30h13.49v13.49h-13.49ZM689.49 297.28h13.49v13.49h-13.49ZM689.49 324.26h13.49v13.49h-13.49ZM689.49 351.24h13.49v13.49h-13.49ZM689.49 378.22h13.49v13.49h-13.49ZM689.49 405.20h13.49v13.49h-13.49ZM702.98 -12.99h13.49v13.49h-13.49ZM702.98 13.99h13.49v13.49h-13.49ZM702.98 40.97h13.49v13.49h-13.49ZM702.98 67.95h13.49v13.49h-13.49ZM702.98 94.93h13.49v13.49h-13.49ZM702.98 121.91h13.49v13.49h-13.49ZM702.98 148.89h13.49v13.49h-13.49ZM702.98 175.87h13.49v13.49h-13.49ZM702.98 202.85h13.49v13.49h-13.49ZM702.98 229.83h13.49v13.49h-13.49ZM702.98 256.81h13.49v13.49h-13.49ZM702.98 283.79h13.49v13.49h-13.49ZM702.98 310.77h13.49v13.49h-13.49ZM702.98 337.75h13.49v13.49h-13.49ZM702.98 364.73h13.49v13.49h-13.49ZM702.98 391.71h13.49v13.49h-13.49ZM716.47 -26.48h13.49v13.49h-13.49ZM716.47 0.50h13.49v13.49h-13.49ZM716.47 27.48h13.49v13.49h-13.49ZM716.47 54.46h13.49v13.49h-13.49ZM716.47 81.44h13.49v13.49h-13.49ZM716.47 108.42h13.49v13.49h-13.49ZM716.47 135.40h13.49v13.49h-13.49ZM716.47 162.38h13.49v13.49h-13.49ZM716.47 189.36h13.49v13.49h-13.49ZM716.47 216.34h13.49v13.49h-13.49ZM716.47 243.32h13.49v13.49h-13.49ZM716.47 270.30h13.49v13.49h-13.49ZM716.47 297.28h13.49v13.49h-13.49ZM716.47 324.26h13.49v13.49h-13.49ZM716.47 351.24h13.49v13.49h-13.49ZM716.47 378.22h13.49v13.49h-13.49ZM716.47 405.20h13.49v13.49h-13.49ZM729.96 -12.99h13.49v13.49h-13.49ZM729.96 13.99h13.49v13.49h-13.49ZM729.96 40.97h13.49v13.49h-13.49ZM729.96 67.95h13.49v13.49h-13.49ZM729.96 94.93h13.49v13.49h-13.49ZM729.96 121.91h13.49v13.49h-13.49ZM729.96 148.89h13.49v13.49h-13.49ZM729.96 175.87h13.49v13.49h-13.49ZM729.96 202.85h13.49v13.49h-13.49ZM729.96 229.83h13.49v13.49h-13.49ZM729.96 256.81h13.49v13.49h-13.49ZM729.96 283.79h13.49v13.49h-13.49ZM729.96 310.77h13.49v13.49h-13.49ZM729.96 337.75h13.49v13.49h-13.49ZM729.96 364.73h13.49v13.49h-13.49ZM729.96 391.71h13.49v13.49h-13.49ZM743.45 -26.48h13.49v13.49h-13.49ZM743.45 0.50h13.49v13.49h-13.49ZM743.45 27.48h13.49v13.49h-13.49ZM743.45 54.46h13.49v13.49h-13.49ZM743.45 81.44h13.49v13.49h-13.49ZM743.45 108.42h13.49v13.49h-13.49ZM743.45 135.40h13.49v13.49h-13.49ZM743.45 162.38h13.49v13.49h-13.49ZM743.45 189.36h13.49v13.49h-13.49ZM743.45 216.34h13.49v13.49h-13.49ZM743.45 243.32h13.49v13.49h-13.49ZM743.45 270.30h13.49v13.49h-13.49ZM743.45 297.28h13.49v13.49h-13.49ZM743.45 324.26h13.49v13.49h-13.49ZM743.45 351.24h13.49v13.49h-13.49ZM743.45 378.22h13.49v13.49h-13.49ZM743.45 405.20h13.49v13.49h-13.49ZM756.94 -12.99h13.49v13.49h-13.49ZM756.94 13.99h13.49v13.49h-13.49ZM756.94 40.97h13.49v13.49h-13.49ZM756.94 67.95h13.49v13.49h-13.49ZM756.94 94.93h13.49v13.49h-13.49ZM756.94 121.91h13.49v13.49h-13.49ZM756.94 148.89h13.49v13.49h-13.49ZM756.94 175.87h13.49v13.49h-13.49ZM756.94 202.85h13.49v13.49h-13.49ZM756.94 229.83h13.49v13.49h-13.49ZM756.94 256.81h13.49v13.49h-13.49ZM756.94 283.79h13.49v13.49h-13.49ZM756.94 310.77h13.49v13.49h-13.49ZM756.94 337.75h13.49v13.49h-13.49ZM756.94 364.73h13.49v13.49h-13.49ZM756.94 391.71h13.49v13.49h-13.49ZM770.43 -26.48h13.49v13.49h-13.49ZM770.43 0.50h13.49v13.49h-13.49ZM770.43 27.48h13.49v13.49h-13.49ZM770.43 54.46h13.49v13.49h-13.49ZM770.43 81.44h13.49v13.49h-13.49ZM770.43 108.42h13.49v13.49h-13.49ZM770.43 135.40h13.49v13.49h-13.49ZM770.43 162.38h13.49v13.49h-13.49ZM770.43 189.36h13.49v13.49h-13.49ZM770.43 216.34h13.49v13.49h-13.49ZM770.43 243.32h13.49v13.49h-13.49ZM770.43 270.30h13.49v13.49h-13.49ZM770.43 297.28h13.49v13.49h-13.49ZM770.43 324.26h13.49v13.49h-13.49ZM770.43 351.24h13.49v13.49h-13.49ZM770.43 378.22h13.49v13.49h-13.49ZM770.43 405.20h13.49v13.49h-13.49Z" fill="#e3e3e3"/></svg><div style="position:absolute;left:0px;top:0px;width:772px;height:1px;background:#c8c8c8;"></div><div style="position:absolute;left:0px;top:0px;width:1px;height:416px;background:#c8c8c8;"></div><div style="position:absolute;left:183px;top:3px;width:417px;height:440px;border:1px solid #000;box-sizing:border-box;"></div><svg style="position:absolute;left:183px;top:3px;overflow:visible" width="414.7" height="414.7" viewBox="-0.054 -0.031 32 32"><rect x="12" y="1" width="1" height="1" fill="rgba(255,255,255,0.95)"/><rect x="13" y="1" width="1" height="1" fill="rgba(255,255,255,0.95)"/><rect x="11" y="2" width="1" height="1" fill="rgba(255,255,255,0.95)"/><rect x="12" y="2" width="1" height="1" fill="rgba(255,255,255,0.95)"/><rect x="13" y="2" width="1" height="1" fill="rgba(255,255,255,0.95)"/><rect x="21" y="3" width="1" height="1" fill="rgba(0,0,0,0.07)"/><rect x="22" y="6" width="1" height="1" fill="rgba(0,0,0,0.07)"/><rect x="22" y="12" width="1" height="1" fill="rgba(0,0,0,0.04)"/><rect x="23" y="13" width="1" height="1" fill="rgba(0,0,0,0.04)"/><rect x="9" y="24" width="1" height="1" fill="rgba(0,0,0,0.08)"/><rect x="18" y="29" width="1" height="1" fill="rgba(0,0,0,0.05)"/></svg><svg style="position:absolute;left:183px;top:3px;overflow:visible" width="414.7" height="414.7" viewBox="-0.054 -0.031 32 32"><path d="M11 3H20V4H11ZM10 4H11V5H10ZM20 4H21V5H20ZM10 5H11V6H10ZM13 5H21V6H13ZM9 6H14V7H9ZM20 6H22V7H20ZM9 7H10V8H9ZM21 7H22V8H21ZM9 8H10V9H9ZM15 8H16V9H15ZM18 8H19V9H18ZM21 8H22V9H21ZM9 9H10V10H9ZM15 9H16V10H15ZM18 9H19V10H18ZM21 9H22V10H21ZM9 10H10V11H9ZM15 10H16V11H15ZM18 10H19V11H18ZM21 10H22V11H21ZM6 11H11V12H6ZM21 11H22V12H21ZM5 12H21V13H5ZM4 13H6V14H4ZM8 13H10V14H8ZM20 13H21V14H20ZM4 14H5V15H4ZM6 14H8V15H6ZM9 14H10V15H9ZM15 14H21V15H15ZM4 15H5V16H4ZM6 15H7V16H6ZM9 15H10V16H9ZM13 15H15V16H13ZM20 15H21V16H20ZM4 16H5V17H4ZM6 16H7V17H6ZM9 16H11V17H9ZM12 16H13V17H12ZM20 16H21V17H20ZM4 17H5V18H4ZM6 17H7V18H6ZM9 17H10V18H9ZM11 17H12V18H11ZM20 17H21V18H20ZM4 18H5V19H4ZM6 18H7V19H6ZM9 18H10V19H9ZM11 18H12V19H11ZM20 18H21V19H20ZM4 19H5V20H4ZM6 19H7V20H6ZM9 19H10V20H9ZM11 19H12V20H11ZM20 19H21V20H20ZM4 20H5V21H4ZM6 20H8V21H6ZM9 20H11V21H9ZM16 20H21V21H16ZM4 21H6V22H4ZM7 21H8V22H7ZM9 21H10V22H9ZM11 21H16V22H11ZM20 21H21V22H20ZM5 22H13V23H5ZM20 22H21V23H20ZM7 23H13V24H7ZM15 23H21V24H15ZM12 24H13V25H12ZM16 24H17V25H16ZM19 24H20V25H19ZM10 25H13V26H10ZM16 25H17V26H16ZM19 25H20V26H19ZM10 26H11V27H10ZM12 26H13V27H12ZM16 26H17V27H16ZM19 26H20V27H19ZM10 27H11V28H10ZM12 27H13V28H12ZM16 27H17V28H16ZM19 27H20V28H19ZM10 28H13V29H10ZM16 28H20V29H16ZM12 29H13V30H12ZM16 29H17V30H16ZM12 30H17V31H12ZM11 4H20V5H11ZM11 5H13V6H11ZM14 6H20V7H14ZM10 7H14V8H10ZM16 7H17V8H16ZM19 7H21V8H19ZM10 8H15V9H10ZM16 8H18V9H16ZM19 8H21V9H19ZM10 9H15V10H10ZM16 9H18V10H16ZM19 9H21V10H19ZM10 10H15V11H10ZM16 10H18V11H16ZM19 10H21V11H19ZM11 11H21V12H11ZM14 7H16V8H14ZM17 7H19V8H17ZM6 13H8V14H6ZM5 14H6V15H5ZM8 14H9V15H8ZM5 15H6V16H5ZM7 15H9V16H7ZM5 16H6V17H5ZM7 16H9V17H7ZM5 17H6V18H5ZM7 17H9V18H7ZM5 18H6V19H5ZM7 18H9V19H7ZM5 19H6V20H5ZM7 19H9V20H7ZM5 20H6V21H5ZM8 20H9V21H8ZM6 21H7V22H6ZM8 21H9V22H8ZM10 13H20V14H10ZM10 14H15V15H10ZM10 15H13V16H10ZM11 16H12V17H11ZM15 15H20V16H15ZM13 16H20V17H13ZM10 17H11V18H10ZM12 17H20V18H12ZM10 18H11V19H10ZM12 18H20V19H12ZM10 19H11V20H10ZM12 19H20V20H12ZM11 20H16V21H11ZM10 21H11V22H10ZM16 21H20V22H16ZM13 22H20V23H13ZM13 23H15V24H13ZM13 24H16V25H13ZM17 24H19V25H17ZM13 25H16V26H13ZM17 25H19V26H17ZM11 26H12V27H11ZM13 26H16V27H13ZM17 26H19V27H17ZM11 27H12V28H11ZM13 27H16V28H13ZM17 27H19V28H17ZM13 28H16V29H13ZM13 29H16V30H13Z" fill="#000"/><path d="M11 4H20V5H11ZM11 5H13V6H11Z" fill="#323232"/><path d="M14 6H20V7H14ZM10 7H14V8H10ZM16 7H17V8H16ZM19 7H21V8H19ZM10 8H15V9H10ZM16 8H18V9H16ZM19 8H21V9H19ZM10 9H15V10H10ZM16 9H18V10H16ZM19 9H21V10H19ZM10 10H15V11H10ZM16 10H18V11H16ZM19 10H21V11H19ZM11 11H21V12H11Z" fill="#a68a74"/><path d="M14 7H16V8H14ZM17 7H19V8H17Z" fill="#0f0f0f"/><path d="M6 13H8V14H6ZM5 14H6V15H5ZM8 14H9V15H8ZM5 15H6V16H5ZM7 15H9V16H7ZM5 16H6V17H5ZM7 16H9V17H7ZM5 17H6V18H5ZM7 17H9V18H7ZM5 18H6V19H5ZM7 18H9V19H7ZM5 19H6V20H5ZM7 19H9V20H7ZM5 20H6V21H5ZM8 20H9V21H8ZM6 21H7V22H6ZM8 21H9V22H8Z" fill="#1f3fcc"/><path d="M10 13H20V14H10ZM10 14H15V15H10ZM10 15H13V16H10ZM11 16H12V17H11Z" fill="#0a1828"/><path d="M15 15H20V16H15ZM13 16H20V17H13ZM10 17H11V18H10ZM12 17H20V18H12ZM10 18H11V19H10ZM12 18H20V19H12ZM10 19H11V20H10ZM12 19H20V20H12ZM11 20H16V21H11ZM10 21H11V22H10Z" fill="#d20000"/><path d="M16 21H20V22H16ZM13 22H20V23H13ZM13 23H15V24H13ZM13 24H16V25H13ZM17 24H19V25H17ZM13 25H16V26H13ZM17 25H19V26H17ZM11 26H12V27H11ZM13 26H16V27H13ZM17 26H19V27H17ZM11 27H12V28H11ZM13 27H16V28H13ZM17 27H19V28H17ZM13 28H16V29H13ZM13 29H16V30H13Z" fill="#1a2870"/></svg></div><div style="position:absolute;left:1136px;top:102px;width:8px;height:626px;background:#cccccc;"></div><div style="position:absolute;left:335px;top:576px;width:801px;height:7px;background:#cccccc;"></div><div style="position:absolute;left:335px;top:583px;width:801px;height:23px;background:#2468a5;"></div><div style="position:absolute;left:436px;width:600px;text-align:center;top:588.60px;font-size:11.7px;line-height:1;color:#fff;white-space:pre;">Walk Frames (3)</div><svg style="position:absolute;left:365px;top:639px;overflow:visible" width="28.8" height="28.8" viewBox="0 0 32 32"><path d="M11 3H20V4H11ZM10 4H11V5H10ZM20 4H21V5H20ZM10 5H11V6H10ZM13 5H21V6H13ZM9 6H14V7H9ZM20 6H22V7H20ZM9 7H10V8H9ZM21 7H22V8H21ZM9 8H10V9H9ZM15 8H16V9H15ZM18 8H19V9H18ZM21 8H22V9H21ZM9 9H10V10H9ZM15 9H16V10H15ZM18 9H19V10H18ZM21 9H22V10H21ZM9 10H10V11H9ZM15 10H16V11H15ZM18 10H19V11H18ZM21 10H22V11H21ZM6 11H11V12H6ZM21 11H22V12H21ZM5 12H21V13H5ZM4 13H6V14H4ZM8 13H10V14H8ZM20 13H21V14H20ZM4 14H5V15H4ZM6 14H8V15H6ZM9 14H10V15H9ZM15 14H21V15H15ZM4 15H5V16H4ZM6 15H7V16H6ZM9 15H10V16H9ZM13 15H15V16H13ZM20 15H21V16H20ZM4 16H5V17H4ZM6 16H7V17H6ZM9 16H11V17H9ZM12 16H13V17H12ZM20 16H21V17H20ZM4 17H5V18H4ZM6 17H7V18H6ZM9 17H10V18H9ZM11 17H12V18H11ZM20 17H21V18H20ZM4 18H5V19H4ZM6 18H7V19H6ZM9 18H10V19H9ZM11 18H12V19H11ZM20 18H21V19H20ZM4 19H5V20H4ZM6 19H7V20H6ZM9 19H10V20H9ZM11 19H12V20H11ZM20 19H21V20H20ZM4 20H5V21H4ZM6 20H8V21H6ZM9 20H11V21H9ZM16 20H21V21H16ZM4 21H6V22H4ZM7 21H8V22H7ZM9 21H10V22H9ZM11 21H16V22H11ZM20 21H21V22H20ZM5 22H13V23H5ZM20 22H21V23H20ZM7 23H13V24H7ZM15 23H21V24H15ZM12 24H13V25H12ZM16 24H17V25H16ZM19 24H20V25H19ZM10 25H13V26H10ZM16 25H17V26H16ZM19 25H20V26H19ZM10 26H11V27H10ZM12 26H13V27H12ZM16 26H17V27H16ZM19 26H20V27H19ZM10 27H11V28H10ZM12 27H13V28H12ZM16 27H17V28H16ZM19 27H20V28H19ZM10 28H13V29H10ZM16 28H20V29H16ZM12 29H13V30H12ZM16 29H17V30H16ZM12 30H17V31H12ZM11 4H20V5H11ZM11 5H13V6H11ZM14 6H20V7H14ZM10 7H14V8H10ZM16 7H17V8H16ZM19 7H21V8H19ZM10 8H15V9H10ZM16 8H18V9H16ZM19 8H21V9H19ZM10 9H15V10H10ZM16 9H18V10H16ZM19 9H21V10H19ZM10 10H15V11H10ZM16 10H18V11H16ZM19 10H21V11H19ZM11 11H21V12H11ZM14 7H16V8H14ZM17 7H19V8H17ZM6 13H8V14H6ZM5 14H6V15H5ZM8 14H9V15H8ZM5 15H6V16H5ZM7 15H9V16H7ZM5 16H6V17H5ZM7 16H9V17H7ZM5 17H6V18H5ZM7 17H9V18H7ZM5 18H6V19H5ZM7 18H9V19H7ZM5 19H6V20H5ZM7 19H9V20H7ZM5 20H6V21H5ZM8 20H9V21H8ZM6 21H7V22H6ZM8 21H9V22H8ZM10 13H20V14H10ZM10 14H15V15H10ZM10 15H13V16H10ZM11 16H12V17H11ZM15 15H20V16H15ZM13 16H20V17H13ZM10 17H11V18H10ZM12 17H20V18H12ZM10 18H11V19H10ZM12 18H20V19H12ZM10 19H11V20H10ZM12 19H20V20H12ZM11 20H16V21H11ZM10 21H11V22H10ZM16 21H20V22H16ZM13 22H20V23H13ZM13 23H15V24H13ZM13 24H16V25H13ZM17 24H19V25H17ZM13 25H16V26H13ZM17 25H19V26H17ZM11 26H12V27H11ZM13 26H16V27H13ZM17 26H19V27H17ZM11 27H12V28H11ZM13 27H16V28H13ZM17 27H19V28H17ZM13 28H16V29H13ZM13 29H16V30H13Z" fill="#000"/><path d="M11 4H20V5H11ZM11 5H13V6H11Z" fill="#323232"/><path d="M14 6H20V7H14ZM10 7H14V8H10ZM16 7H17V8H16ZM19 7H21V8H19ZM10 8H15V9H10ZM16 8H18V9H16ZM19 8H21V9H19ZM10 9H15V10H10ZM16 9H18V10H16ZM19 9H21V10H19ZM10 10H15V11H10ZM16 10H18V11H16ZM19 10H21V11H19ZM11 11H21V12H11Z" fill="#a68a74"/><path d="M14 7H16V8H14ZM17 7H19V8H17Z" fill="#0f0f0f"/><path d="M6 13H8V14H6ZM5 14H6V15H5ZM8 14H9V15H8ZM5 15H6V16H5ZM7 15H9V16H7ZM5 16H6V17H5ZM7 16H9V17H7ZM5 17H6V18H5ZM7 17H9V18H7ZM5 18H6V19H5ZM7 18H9V19H7ZM5 19H6V20H5ZM7 19H9V20H7ZM5 20H6V21H5ZM8 20H9V21H8ZM6 21H7V22H6ZM8 21H9V22H8Z" fill="#1f3fcc"/><path d="M10 13H20V14H10ZM10 14H15V15H10ZM10 15H13V16H10ZM11 16H12V17H11Z" fill="#0a1828"/><path d="M15 15H20V16H15ZM13 16H20V17H13ZM10 17H11V18H10ZM12 17H20V18H12ZM10 18H11V19H10ZM12 18H20V19H12ZM10 19H11V20H10ZM12 19H20V20H12ZM11 20H16V21H11ZM10 21H11V22H10Z" fill="#d20000"/><path d="M16 21H20V22H16ZM13 22H20V23H13ZM13 23H15V24H13ZM13 24H16V25H13ZM17 24H19V25H17ZM13 25H16V26H13ZM17 25H19V26H17ZM11 26H12V27H11ZM13 26H16V27H13ZM17 26H19V27H17ZM11 27H12V28H11ZM13 27H16V28H13ZM17 27H19V28H17ZM13 28H16V29H13ZM13 29H16V30H13Z" fill="#1a2870"/></svg><svg style="position:absolute;left:448px;top:639px;overflow:visible" width="28.8" height="28.8" viewBox="0 0 32 32"><path d="M11 3H20V4H11ZM10 4H11V5H10ZM20 4H21V5H20ZM10 5H11V6H10ZM13 5H21V6H13ZM9 6H14V7H9ZM20 6H22V7H20ZM9 7H10V8H9ZM21 7H22V8H21ZM9 8H10V9H9ZM15 8H16V9H15ZM18 8H19V9H18ZM21 8H22V9H21ZM9 9H10V10H9ZM15 9H16V10H15ZM18 9H19V10H18ZM21 9H22V10H21ZM9 10H10V11H9ZM15 10H16V11H15ZM18 10H19V11H18ZM21 10H22V11H21ZM6 11H11V12H6ZM21 11H22V12H21ZM5 12H21V13H5ZM4 13H6V14H4ZM8 13H10V14H8ZM20 13H21V14H20ZM4 14H5V15H4ZM6 14H8V15H6ZM9 14H10V15H9ZM15 14H21V15H15ZM4 15H5V16H4ZM6 15H7V16H6ZM9 15H10V16H9ZM13 15H15V16H13ZM20 15H21V16H20ZM4 16H5V17H4ZM6 16H7V17H6ZM9 16H11V17H9ZM12 16H13V17H12ZM20 16H21V17H20ZM4 17H5V18H4ZM6 17H7V18H6ZM9 17H10V18H9ZM11 17H12V18H11ZM20 17H21V18H20ZM4 18H5V19H4ZM6 18H7V19H6ZM9 18H10V19H9ZM11 18H12V19H11ZM20 18H21V19H20ZM4 19H5V20H4ZM6 19H7V20H6ZM9 19H10V20H9ZM11 19H12V20H11ZM20 19H21V20H20ZM4 20H5V21H4ZM6 20H8V21H6ZM9 20H11V21H9ZM16 20H21V21H16ZM4 21H6V22H4ZM7 21H8V22H7ZM9 21H10V22H9ZM11 21H16V22H11ZM20 21H21V22H20ZM5 22H13V23H5ZM20 22H21V23H20ZM7 23H13V24H7ZM20 23H21V24H20ZM10 24H13V25H10ZM16 24H17V25H16ZM20 24H21V25H20ZM9 25H10V26H9ZM15 25H16V26H15ZM17 25H18V26H17ZM21 25H22V26H21ZM9 26H10V27H9ZM14 26H15V27H14ZM18 26H19V27H18ZM22 26H23V27H22ZM9 27H14V28H9ZM19 27H20V28H19ZM23 27H24V28H23ZM20 28H24V29H20ZM11 4H20V5H11ZM11 5H13V6H11ZM14 6H20V7H14ZM10 7H14V8H10ZM16 7H17V8H16ZM19 7H21V8H19ZM10 8H15V9H10ZM16 8H18V9H16ZM19 8H21V9H19ZM10 9H15V10H10ZM16 9H18V10H16ZM19 9H21V10H19ZM10 10H15V11H10ZM16 10H18V11H16ZM19 10H21V11H19ZM11 11H21V12H11ZM14 7H16V8H14ZM17 7H19V8H17ZM6 13H8V14H6ZM5 14H6V15H5ZM8 14H9V15H8ZM5 15H6V16H5ZM7 15H9V16H7ZM5 16H6V17H5ZM7 16H9V17H7ZM5 17H6V18H5ZM7 17H9V18H7ZM5 18H6V19H5ZM7 18H9V19H7ZM5 19H6V20H5ZM7 19H9V20H7ZM5 20H6V21H5ZM8 20H9V21H8ZM6 21H7V22H6ZM8 21H9V22H8ZM10 13H20V14H10ZM10 14H15V15H10ZM10 15H13V16H10ZM11 16H12V17H11ZM15 15H20V16H15ZM13 16H20V17H13ZM10 17H11V18H10ZM12 17H20V18H12ZM10 18H11V19H10ZM12 18H20V19H12ZM10 19H11V20H10ZM12 19H20V20H12ZM11 20H16V21H11ZM10 21H11V22H10ZM16 21H20V22H16ZM13 22H20V23H13ZM13 23H20V24H13ZM13 24H16V25H13ZM17 24H20V25H17ZM10 25H15V26H10ZM18 25H21V26H18ZM10 26H14V27H10ZM19 26H22V27H19ZM20 27H23V28H20Z" fill="#000"/><path d="M11 4H20V5H11ZM11 5H13V6H11Z" fill="#323232"/><path d="M14 6H20V7H14ZM10 7H14V8H10ZM16 7H17V8H16ZM19 7H21V8H19ZM10 8H15V9H10ZM16 8H18V9H16ZM19 8H21V9H19ZM10 9H15V10H10ZM16 9H18V10H16ZM19 9H21V10H19ZM10 10H15V11H10ZM16 10H18V11H16ZM19 10H21V11H19ZM11 11H21V12H11Z" fill="#a68a74"/><path d="M14 7H16V8H14ZM17 7H19V8H17Z" fill="#0f0f0f"/><path d="M6 13H8V14H6ZM5 14H6V15H5ZM8 14H9V15H8ZM5 15H6V16H5ZM7 15H9V16H7ZM5 16H6V17H5ZM7 16H9V17H7ZM5 17H6V18H5ZM7 17H9V18H7ZM5 18H6V19H5ZM7 18H9V19H7ZM5 19H6V20H5ZM7 19H9V20H7ZM5 20H6V21H5ZM8 20H9V21H8ZM6 21H7V22H6ZM8 21H9V22H8Z" fill="#1f3fcc"/><path d="M10 13H20V14H10ZM10 14H15V15H10ZM10 15H13V16H10ZM11 16H12V17H11Z" fill="#0a1828"/><path d="M15 15H20V16H15ZM13 16H20V17H13ZM10 17H11V18H10ZM12 17H20V18H12ZM10 18H11V19H10ZM12 18H20V19H12ZM10 19H11V20H10ZM12 19H20V20H12ZM11 20H16V21H11ZM10 21H11V22H10Z" fill="#d20000"/><path d="M16 21H20V22H16ZM13 22H20V23H13ZM13 23H20V24H13ZM13 24H16V25H13ZM17 24H20V25H17ZM10 25H15V26H10ZM18 25H21V26H18ZM10 26H14V27H10ZM19 26H22V27H19ZM20 27H23V28H20Z" fill="#1a2870"/></svg><svg style="position:absolute;left:531px;top:639px;overflow:visible" width="28.8" height="28.8" viewBox="0 0 32 32"><path d="M11 3H20V4H11ZM10 4H11V5H10ZM20 4H21V5H20ZM10 5H11V6H10ZM13 5H21V6H13ZM9 6H14V7H9ZM20 6H22V7H20ZM9 7H10V8H9ZM21 7H22V8H21ZM9 8H10V9H9ZM15 8H16V9H15ZM18 8H19V9H18ZM21 8H22V9H21ZM9 9H10V10H9ZM15 9H16V10H15ZM18 9H19V10H18ZM21 9H22V10H21ZM9 10H10V11H9ZM15 10H16V11H15ZM18 10H19V11H18ZM21 10H22V11H21ZM6 11H11V12H6ZM21 11H22V12H21ZM5 12H21V13H5ZM4 13H6V14H4ZM8 13H10V14H8ZM20 13H21V14H20ZM4 14H5V15H4ZM6 14H8V15H6ZM9 14H10V15H9ZM15 14H21V15H15ZM4 15H5V16H4ZM6 15H7V16H6ZM9 15H10V16H9ZM13 15H15V16H13ZM20 15H21V16H20ZM4 16H5V17H4ZM6 16H7V17H6ZM9 16H11V17H9ZM12 16H13V17H12ZM20 16H21V17H20ZM4 17H5V18H4ZM6 17H7V18H6ZM9 17H10V18H9ZM11 17H12V18H11ZM20 17H21V18H20ZM4 18H5V19H4ZM6 18H7V19H6ZM9 18H10V19H9ZM11 18H12V19H11ZM20 18H21V19H20ZM4 19H5V20H4ZM6 19H7V20H6ZM9 19H10V20H9ZM11 19H12V20H11ZM20 19H21V20H20ZM4 20H5V21H4ZM6 20H8V21H6ZM9 20H11V21H9ZM16 20H21V21H16ZM4 21H6V22H4ZM7 21H8V22H7ZM9 21H10V22H9ZM11 21H16V22H11ZM20 21H21V22H20ZM5 22H13V23H5ZM20 22H21V23H20ZM7 23H13V24H7ZM15 23H21V24H15ZM12 24H13V25H12ZM16 24H17V25H16ZM19 24H20V25H19ZM10 25H13V26H10ZM16 25H17V26H16ZM19 25H20V26H19ZM10 26H11V27H10ZM12 26H13V27H12ZM16 26H17V27H16ZM19 26H20V27H19ZM10 27H11V28H10ZM12 27H13V28H12ZM16 27H17V28H16ZM19 27H20V28H19ZM10 28H13V29H10ZM16 28H20V29H16ZM12 29H13V30H12ZM16 29H17V30H16ZM12 30H17V31H12ZM11 4H20V5H11ZM11 5H13V6H11ZM14 6H20V7H14ZM10 7H14V8H10ZM16 7H17V8H16ZM19 7H21V8H19ZM10 8H15V9H10ZM16 8H18V9H16ZM19 8H21V9H19ZM10 9H15V10H10ZM16 9H18V10H16ZM19 9H21V10H19ZM10 10H15V11H10ZM16 10H18V11H16ZM19 10H21V11H19ZM11 11H21V12H11ZM14 7H16V8H14ZM17 7H19V8H17ZM6 13H8V14H6ZM5 14H6V15H5ZM8 14H9V15H8ZM5 15H6V16H5ZM7 15H9V16H7ZM5 16H6V17H5ZM7 16H9V17H7ZM5 17H6V18H5ZM7 17H9V18H7ZM5 18H6V19H5ZM7 18H9V19H7ZM5 19H6V20H5ZM7 19H9V20H7ZM5 20H6V21H5ZM8 20H9V21H8ZM6 21H7V22H6ZM8 21H9V22H8ZM10 13H20V14H10ZM10 14H15V15H10ZM10 15H13V16H10ZM11 16H12V17H11ZM15 15H20V16H15ZM13 16H20V17H13ZM10 17H11V18H10ZM12 17H20V18H12ZM10 18H11V19H10ZM12 18H20V19H12ZM10 19H11V20H10ZM12 19H20V20H12ZM11 20H16V21H11ZM10 21H11V22H10ZM16 21H20V22H16ZM13 22H20V23H13ZM13 23H15V24H13ZM13 24H16V25H13ZM17 24H19V25H17ZM13 25H16V26H13ZM17 25H19V26H17ZM11 26H12V27H11ZM13 26H16V27H13ZM17 26H19V27H17ZM11 27H12V28H11ZM13 27H16V28H13ZM17 27H19V28H17ZM13 28H16V29H13ZM13 29H16V30H13Z" fill="#000"/><path d="M11 4H20V5H11ZM11 5H13V6H11Z" fill="#323232"/><path d="M14 6H20V7H14ZM10 7H14V8H10ZM16 7H17V8H16ZM19 7H21V8H19ZM10 8H15V9H10ZM16 8H18V9H16ZM19 8H21V9H19ZM10 9H15V10H10ZM16 9H18V10H16ZM19 9H21V10H19ZM10 10H15V11H10ZM16 10H18V11H16ZM19 10H21V11H19ZM11 11H21V12H11Z" fill="#a68a74"/><path d="M14 7H16V8H14ZM17 7H19V8H17Z" fill="#0f0f0f"/><path d="M6 13H8V14H6ZM5 14H6V15H5ZM8 14H9V15H8ZM5 15H6V16H5ZM7 15H9V16H7ZM5 16H6V17H5ZM7 16H9V17H7ZM5 17H6V18H5ZM7 17H9V18H7ZM5 18H6V19H5ZM7 18H9V19H7ZM5 19H6V20H5ZM7 19H9V20H7ZM5 20H6V21H5ZM8 20H9V21H8ZM6 21H7V22H6ZM8 21H9V22H8Z" fill="#1f3fcc"/><path d="M10 13H20V14H10ZM10 14H15V15H10ZM10 15H13V16H10ZM11 16H12V17H11Z" fill="#0a1828"/><path d="M15 15H20V16H15ZM13 16H20V17H13ZM10 17H11V18H10ZM12 17H20V18H12ZM10 18H11V19H10ZM12 18H20V19H12ZM10 19H11V20H10ZM12 19H20V20H12ZM11 20H16V21H11ZM10 21H11V22H10Z" fill="#d20000"/><path d="M16 21H20V22H16ZM13 22H20V23H13ZM13 23H15V24H13ZM13 24H16V25H13ZM17 24H19V25H17ZM13 25H16V26H13ZM17 25H19V26H17ZM11 26H12V27H11ZM13 26H16V27H13ZM17 26H19V27H17ZM11 27H12V28H11ZM13 27H16V28H13ZM17 27H19V28H17ZM13 28H16V29H13ZM13 29H16V30H13Z" fill="#1a2870"/></svg><div style="position:absolute;left:80px;width:600px;text-align:center;top:693.77px;font-size:11.5px;line-height:1;color:#222;white-space:pre;">0</div><div style="position:absolute;left:163px;width:600px;text-align:center;top:693.77px;font-size:11.5px;line-height:1;color:#222;white-space:pre;">1</div><div style="position:absolute;left:246px;width:600px;text-align:center;top:693.77px;font-size:11.5px;line-height:1;color:#222;white-space:pre;">2</div><div style="position:absolute;left:76px;top:728px;width:1258px;height:1px;background:#d0d0d0;"></div><div style="position:absolute;left:505px;top:731px;width:1px;height:17px;background:#cfcfcf;"></div><div style="position:absolute;left:949px;top:731px;width:1px;height:17px;background:#cfcfcf;"></div><div style="position:absolute;left:514.4px;top:733.27px;font-size:11.5px;line-height:1;color:#222;white-space:pre;">Size: 32x32&nbsp;&nbsp;&nbsp;Export Format: PNG</div><div style="position:absolute;left:1144px;top:102px;width:190px;height:24px;background:#2a7fcc;"></div><div style="position:absolute;left:938px;width:600px;text-align:center;top:107.90px;font-size:11.7px;line-height:1;color:#fff;white-space:pre;">Animations</div><svg style="position:absolute;left:1165.0px;top:133.95px" width="13" height="11.5" viewBox="0 0 13 11.5"><rect x="0" y="0" width="13" height="11.5" rx="0.8" fill="#2f8a07"/><rect x="0" y="1.5" width="0.7" height="1.8" fill="#fff"/><rect x="0" y="8.2" width="0.7" height="1.8" fill="#fff"/><rect x="2.9" y="1.5" width="1.1" height="1.8" fill="#fff"/><rect x="2.9" y="8.2" width="1.1" height="1.8" fill="#fff"/><rect x="5.95" y="1.5" width="1.1" height="1.8" fill="#fff"/><rect x="5.95" y="8.2" width="1.1" height="1.8" fill="#fff"/><rect x="9" y="1.5" width="1.1" height="1.8" fill="#fff"/><rect x="9" y="8.2" width="1.1" height="1.8" fill="#fff"/><rect x="12.3" y="1.5" width="0.7" height="1.8" fill="#fff"/><rect x="12.3" y="8.2" width="0.7" height="1.8" fill="#fff"/></svg><div style="position:absolute;left:1186.6px;top:134.10px;font-size:11.7px;line-height:1;color:#222;white-space:pre;">Idle</div><div style="position:absolute;left:1162px;top:151px;width:120px;height:20px;background:#dedefc;border:1px solid #6464f5;box-sizing:border-box;"></div><svg style="position:absolute;left:1165.0px;top:154.65px" width="13" height="11.5" viewBox="0 0 13 11.5"><rect x="0" y="0" width="13" height="11.5" rx="0.8" fill="#2f8a07"/><rect x="0" y="1.5" width="0.7" height="1.8" fill="#fff"/><rect x="0" y="8.2" width="0.7" height="1.8" fill="#fff"/><rect x="2.9" y="1.5" width="1.1" height="1.8" fill="#fff"/><rect x="2.9" y="8.2" width="1.1" height="1.8" fill="#fff"/><rect x="5.95" y="1.5" width="1.1" height="1.8" fill="#fff"/><rect x="5.95" y="8.2" width="1.1" height="1.8" fill="#fff"/><rect x="9" y="1.5" width="1.1" height="1.8" fill="#fff"/><rect x="9" y="8.2" width="1.1" height="1.8" fill="#fff"/><rect x="12.3" y="1.5" width="0.7" height="1.8" fill="#fff"/><rect x="12.3" y="8.2" width="0.7" height="1.8" fill="#fff"/></svg><div style="position:absolute;left:1186.6px;top:154.90px;font-size:11.7px;line-height:1;color:#222;white-space:pre;">Walk</div><div style="position:absolute;left:1144px;top:412px;width:190px;height:7px;background:#cccccc;"></div><div style="position:absolute;left:1144px;top:419px;width:190px;height:23px;background:#2468a5;"></div><div style="position:absolute;left:938px;width:600px;text-align:center;top:425.10px;font-size:11.7px;line-height:1;color:#fff;white-space:pre;">Animation Properties</div><div style="position:absolute;left:1144px;top:464px;width:189px;height:1px;background:#e2e2e2;"></div><div style="position:absolute;left:1147.5px;top:448.10px;font-size:11.7px;line-height:1;color:#222;white-space:pre;">Name</div><div style="position:absolute;left:1242px;top:448.10px;font-size:11.7px;line-height:1;color:#222;white-space:pre;">Walk</div><div style="position:absolute;left:1144px;top:486px;width:189px;height:1px;background:#e2e2e2;"></div><div style="position:absolute;left:1147.5px;top:470.10px;font-size:11.7px;line-height:1;color:#222;white-space:pre;">Speed</div><div style="position:absolute;left:1242px;top:470.10px;font-size:11.7px;line-height:1;color:#222;white-space:pre;">10</div><div style="position:absolute;left:1144px;top:508px;width:189px;height:1px;background:#e2e2e2;"></div><div style="position:absolute;left:1147.5px;top:492.10px;font-size:11.7px;line-height:1;color:#222;white-space:pre;">Loop</div><div style="position:absolute;left:1144px;top:530px;width:189px;height:1px;background:#e2e2e2;"></div><div style="position:absolute;left:1147.5px;top:514.10px;font-size:11.7px;line-height:1;color:#222;white-space:pre;">Repeat Count</div><div style="position:absolute;left:1242px;top:514.10px;font-size:11.7px;line-height:1;color:#222;white-space:pre;">1</div><div style="position:absolute;left:1144px;top:552px;width:189px;height:1px;background:#e2e2e2;"></div><div style="position:absolute;left:1147.5px;top:536.10px;font-size:11.7px;line-height:1;color:#222;white-space:pre;">Repeat To</div><div style="position:absolute;left:1242px;top:536.10px;font-size:11.7px;line-height:1;color:#222;white-space:pre;">0</div><div style="position:absolute;left:1144px;top:574px;width:189px;height:1px;background:#e2e2e2;"></div><div style="position:absolute;left:1147.5px;top:558.10px;font-size:11.7px;line-height:1;color:#222;white-space:pre;">Ping Pong</div><div style="position:absolute;left:1144px;top:610px;width:189px;height:1px;background:#e2e2e2;"></div><div style="position:absolute;left:1147.5px;top:579px;font-size:11.7px;line-height:14px;color:#222;">More<br>Information</div><div style="position:absolute;left:1238px;top:442px;width:1px;height:168px;background:#e2e2e2;"></div><svg style="position:absolute;left:1243px;top:491px" width="14" height="14" viewBox="0 0 14 14"><rect width="14" height="14" rx="2" fill="#1a73e8"/><path d="M3 7.2L5.8 10L11 4" fill="none" stroke="#fff" stroke-width="1.8"/></svg><div style="position:absolute;left:1243px;top:557px;width:14px;height:14px;border:1px solid #666;border-radius:2px;box-sizing:border-box;background:#fff;"></div><div style="position:absolute;left:1242px;top:586.10px;font-size:11.7px;line-height:1;color:#1c1cdc;white-space:pre;"><u>Help</u></div><div style="position:absolute;left:50px;top:463px;width:324px;height:299px;background:#fff;border-radius:2px;box-shadow:0 1px 2px rgba(0,0,0,0.25),1px 0 9px rgba(0,0,0,0.12);"></div><div style="position:absolute;left:50px;top:719px;width:324px;height:43px;background:#ebebeb;border-radius:0 0 2px 2px;"></div><svg style="position:absolute;left:67px;top:474px" width="12" height="12" viewBox="0 0 12 12"><rect width="12" height="12" rx="1.5" fill="#1a73e8"/><path d="M2 10L5 6L7 8.5L8.5 7L10.5 10Z" fill="#fff"/></svg><div style="position:absolute;left:86.2px;top:474.55px;font-size:11.4px;line-height:1;color:#1a73e8;white-space:pre;letter-spacing:-0.4px;">Screenshot</div><div style="position:absolute;left:146px;top:474.55px;font-size:11.4px;line-height:1;color:#3c4043;white-space:pre;">•</div><div style="position:absolute;left:154.5px;top:474.55px;font-size:11.4px;line-height:1;color:#3c4043;white-space:pre;letter-spacing:-0.3px;">now</div><svg style="position:absolute;left:178px;top:477px" width="8" height="6" viewBox="0 0 8 6"><path d="M1 5L4 2L7 5" fill="none" stroke="#1a73e8" stroke-width="1.4"/></svg><div style="position:absolute;left:65.3px;top:495.28px;font-size:11.6px;line-height:1;color:#202124;white-space:pre;">Screenshot taken</div><div style="position:absolute;left:65.3px;top:509.78px;font-size:11.6px;line-height:1;color:#80868b;white-space:pre;">Show in folder</div><div style="position:absolute;left:68px;top:735.60px;font-size:10.4px;line-height:1;color:#1a73e8;white-space:pre;letter-spacing:-0.3px;-webkit-text-stroke:0.25px #1a73e8;">COPY TO CLIPBOARD</div><div style="position:absolute;left:64px;top:539px;width:296px;height:166px;overflow:hidden;background:#fff;"><div class="th" style="position:absolute;left:0;top:0;width:1366px;height:768px;transform:scale(0.21669,0.21615);transform-origin:0 0;"><div style="position:absolute;left:0px;top:0px;width:43px;height:768px;background:#101b16;"></div><div style="position:absolute;left:5.2px;top:5.2px;width:32px;height:32px;background:#26302b;border-radius:50%;"></div><div style="position:absolute;left:13.8px;top:13.8px;width:15.2px;height:15.2px;border:2.5px solid #f4f4f4;border-radius:50%;box-sizing:border-box;"></div><svg style="position:absolute;left:8px;top:194px" width="29" height="29" viewBox="0 0 30 30"><path d="M15 15L2.88 8A14 14 0 0 1 27.12 8Z" fill="#db4437"/><path d="M15 15L27.12 8A14 14 0 0 1 15 29Z" fill="#fcc934"/><path d="M15 15L15 29A14 14 0 0 1 2.88 8Z" fill="#1e8e3e"/><circle cx="15" cy="15" r="6.8" fill="#fff"/><circle cx="15" cy="15" r="5.3" fill="#1a73e8"/></svg><div style="position:absolute;left:2px;top:204px;width:2px;height:8px;background:#ddd;"></div><svg style="position:absolute;left:7px;top:247px" width="31" height="24" viewBox="0 0 31 24"><path d="M3.5 6L15.5 15L27.5 6" stroke="#ea4335" stroke-width="7" fill="none" stroke-linecap="round" stroke-linejoin="round"/><path d="M0 6.5V21.5A2.5 2.5 0 0 0 2.5 24H7V9Z" fill="#4285f4"/><path d="M31 6.5V21.5A2.5 2.5 0 0 1 28.5 24H24V9Z" fill="#34a853"/><path d="M24 4.5L27.5 2.2A3.5 3.5 0 0 1 31 6.5V9.5L24 14.5Z" fill="#fbbc04"/><path d="M0 9.5V6.5A3.5 3.5 0 0 1 3.5 2.2L7 4.5V14.5Z" fill="#c5221f"/></svg><svg style="position:absolute;left:11px;top:296px" width="23" height="29" viewBox="0 0 23 29"><path d="M2 0H15L22 7V27A2 2 0 0 1 20 29H2A2 2 0 0 1 0 27V2A2 2 0 0 1 2 0Z" fill="#4285f4"/><path d="M15 0V7H22Z" fill="#fff" opacity="0.45"/><path d="M5 13H17M5 16H17M5 19H17M5 22H13" stroke="#fff" stroke-width="1.3"/></svg><svg style="position:absolute;left:11px;top:346px" width="23" height="29" viewBox="0 0 23 29"><path d="M2 0H15L22 7V27A2 2 0 0 1 20 29H2A2 2 0 0 1 0 27V2A2 2 0 0 1 2 0Z" fill="#ea4335"/><path d="M15 0V7H22Z" fill="#fff" opacity="0.45"/><circle cx="8" cy="17" r="3" fill="none" stroke="#fff" stroke-width="1.6"/><path d="M11 18H17V24H11Z" fill="#fff"/></svg><svg style="position:absolute;left:11px;top:397px" width="23" height="29" viewBox="0 0 23 29"><path d="M2 0H15L22 7V27A2 2 0 0 1 20 29H2A2 2 0 0 1 0 27V2A2 2 0 0 1 2 0Z" fill="#0f9d58"/><path d="M15 0V7H22Z" fill="#fff" opacity="0.45"/><path d="M5 13H17V23H5Z M5 16.5H17M5 20H17M10 13V23" fill="none" stroke="#fff" stroke-width="1.3"/></svg><svg style="position:absolute;left:11px;top:447px" width="23" height="29" viewBox="0 0 23 29"><path d="M2 0H15L22 7V27A2 2 0 0 1 20 29H2A2 2 0 0 1 0 27V2A2 2 0 0 1 2 0Z" fill="#f4b400"/><path d="M15 0V7H22Z" fill="#fff" opacity="0.45"/><rect x="5" y="14" width="12" height="9" fill="none" stroke="#fff" stroke-width="1.6"/></svg><svg style="position:absolute;left:9px;top:501px" width="27" height="20" viewBox="0 0 27 20"><rect x="0" y="0" width="27" height="20" rx="5" fill="#e62117"/><path d="M11 6V14L17.5 10Z" fill="#fff"/></svg><div style="position:absolute;left:2px;top:507px;width:2px;height:8px;background:#ddd;"></div><svg style="position:absolute;left:7px;top:545px" width="31" height="31" viewBox="0 0 31 31"><circle cx="15.5" cy="15.5" r="15.5" fill="#5b8ff2"/><path d="M8 10H13L14.5 11.5H23V21H8Z" fill="#fff"/></svg><div style="position:absolute;left:2px;top:557px;width:2px;height:8px;background:#ddd;"></div><div style="position:absolute;left:6px;top:631px;width:31px;height:131px;background:#26302b;border-radius:15px;"></div><div style="position:absolute;left:13.5px;top:643.5px;width:14.6px;height:14.6px;background:#e8e8e8;border-radius:50%;"></div><div style="position:absolute;left:-279.2px;width:600px;text-align:center;top:646.11px;font-size:10.5px;line-height:1;color:#26302b;white-space:pre;font-weight:bold;">2</div><svg style="position:absolute;left:14.5px;top:668px" width="13" height="11" viewBox="0 0 13 11"><path d="M0 2.5A11 11 0 0 1 13 2.5L6.5 11Z" fill="#e8e8e8"/><path d="M0 2.5A11 11 0 0 1 13 2.5L11.3 4.6A8.5 8.5 0 0 0 1.7 4.6Z" fill="#8a8f8c"/></svg><div style="position:absolute;left:17px;top:696px;width:8px;height:9px;background:#e8e8e8;"></div><div style="position:absolute;left:17px;top:693px;width:8px;height:3px;background:#8a8f8c;"></div><div style="position:absolute;left:19px;top:691px;width:4px;height:2px;background:#8a8f8c;"></div><div style="position:absolute;left:-277.4px;width:600px;text-align:center;top:722.29px;font-size:12.3px;line-height:1;color:#e8e8e8;white-space:pre;">10</div><div style="position:absolute;left:-277.4px;width:600px;text-align:center;top:738.29px;font-size:12.3px;line-height:1;color:#e8e8e8;white-space:pre;">34</div><div style="position:absolute;left:43px;top:0px;width:1323px;height:30px;background:#dee1e6;"></div><svg style="position:absolute;left:256px;top:0px" width="235" height="31" viewBox="0 0 235 31"><path d="M0 30.5C6 30.5 8.5 28 8.5 22V8C8.5 3 11 0.5 16 0.5H218C223 0.5 226 3 226 8V22C226 28 229 30.5 235 30.5Z" fill="#fff"/></svg><div style="position:absolute;left:61px;top:8px;width:14px;height:13px;background:#e3237e;border-radius:2px;"></div><svg style="position:absolute;left:61px;top:8px" width="14" height="13" viewBox="0 0 14 13"><circle cx="7" cy="5" r="2.3" fill="#fff"/><path d="M2.8 10.5C3 8.5 4.8 7.8 7 7.8C9.2 7.8 11 8.5 11.2 10.5Z" fill="#fff"/></svg><div style="position:absolute;left:83px;top:9.10px;font-size:11.1px;line-height:1;color:#3c4043;white-space:pre;width:155px;overflow:hidden;">P. 4 Integrated Math 1 2:30 PM -</div><div style="position:absolute;left:220px;top:4px;width:20px;height:20px;background:linear-gradient(90deg,rgba(222,225,230,0),#dee1e6);"></div><svg style="position:absolute;left:247.5px;top:9.5px" width="9" height="9" viewBox="0 0 10 10"><path d="M1 1L9 9M9 1L1 9" stroke="#3c4043" stroke-width="1.6"/></svg><svg style="position:absolute;left:275px;top:7px" width="16" height="16" viewBox="0 0 16 16"><circle cx="8" cy="8" r="6.5" fill="none" stroke="#a9c0d0" stroke-width="3"/><path d="M10 6L15 8L10 10Z" fill="#3cc7c7"/></svg><div style="position:absolute;left:298px;top:9.10px;font-size:11.1px;line-height:1;color:#3c4043;white-space:pre;width:157px;overflow:hidden;">Story Based Game. Puffer Jacket</div><div style="position:absolute;left:435px;top:4px;width:22px;height:20px;background:linear-gradient(90deg,rgba(255,255,255,0),#fff);"></div><svg style="position:absolute;left:462.5px;top:9.5px" width="9" height="9" viewBox="0 0 10 10"><path d="M1 1L9 9M9 1L1 9" stroke="#3c4043" stroke-width="1.6"/></svg><svg style="position:absolute;left:491px;top:7px" width="14" height="14" viewBox="0 0 14 14"><rect width="14" height="14" rx="1" fill="#2d3236"/><circle cx="7" cy="7" r="5" fill="none" stroke="#b9c6cf" stroke-width="2.6"/><path d="M9.5 5.5L13.5 7L9.5 8.5Z" fill="#3cc7a0"/></svg><div style="position:absolute;left:513px;top:9.10px;font-size:11.1px;line-height:1;color:#3c4043;white-space:pre;">Construct - New Topic</div><svg style="position:absolute;left:677.5px;top:9.5px" width="9" height="9" viewBox="0 0 10 10"><path d="M1 1L9 9M9 1L1 9" stroke="#3c4043" stroke-width="1.6"/></svg><div style="position:absolute;left:697px;top:6px;width:1px;height:17px;background:#9aa0a6;"></div><svg style="position:absolute;left:707px;top:8px" width="15" height="11" viewBox="0 0 15 11"><rect width="15" height="11" rx="2.5" fill="#f00"/><path d="M6 3V8L10 5.5Z" fill="#fff"/></svg><div style="position:absolute;left:728px;top:9.10px;font-size:11.1px;line-height:1;color:#3c4043;white-space:pre;width:158px;overflow:hidden;">How To Take A Screenshot On A</div><div style="position:absolute;left:862px;top:4px;width:22px;height:20px;background:linear-gradient(90deg,rgba(222,225,230,0),#dee1e6);"></div><svg style="position:absolute;left:891.5px;top:9.5px" width="9" height="9" viewBox="0 0 10 10"><path d="M1 1L9 9M9 1L1 9" stroke="#3c4043" stroke-width="1.6"/></svg><div style="position:absolute;left:911px;top:6px;width:1px;height:17px;background:#9aa0a6;"></div><svg style="position:absolute;left:925px;top:8px" width="13" height="13" viewBox="0 0 13 13"><path d="M6.5 0.5V12.5M0.5 6.5H12.5" stroke="#3c4043" stroke-width="1.6"/></svg><div style="position:absolute;left:1288px;top:18px;width:11px;height:2px;background:#3c4043;"></div><svg style="position:absolute;left:1316px;top:9px" width="12" height="11" viewBox="0 0 12 11"><rect x="1" y="3.5" width="7" height="6.5" fill="none" stroke="#3c4043" stroke-width="1.6"/><path d="M3.5 1H10.5V7.5" fill="none" stroke="#3c4043" stroke-width="1.6"/></svg><svg style="position:absolute;left:1346.0px;top:10.0px" width="10" height="10" viewBox="0 0 10 10"><path d="M1 1L9 9M9 1L1 9" stroke="#3c4043" stroke-width="1.6"/></svg><div style="position:absolute;left:43px;top:30px;width:1323px;height:34px;background:#fff;"></div><svg style="position:absolute;left:55px;top:39px" width="16" height="16" viewBox="0 0 16 16"><path d="M14 8H3M7.5 3L2.5 8L7.5 13" fill="none" stroke="#aeb1b5" stroke-width="1.7"/></svg><svg style="position:absolute;left:83px;top:39px" width="16" height="16" viewBox="0 0 16 16"><path d="M2 8H13M8.5 3L13.5 8L8.5 13" fill="none" stroke="#aeb1b5" stroke-width="1.7"/></svg><svg style="position:absolute;left:112px;top:38px" width="17" height="17" viewBox="0 0 17 17"><path d="M13.5 8.5A5.3 5.3 0 1 1 11.8 4.6" fill="none" stroke="#5f6368" stroke-width="1.9"/><path d="M9.5 2H14.5V7Z" fill="#5f6368"/></svg><div style="position:absolute;left:140px;top:34px;width:1157px;height:26px;background:#f1f3f4;border-radius:13px;"></div><svg style="position:absolute;left:151px;top:40px" width="10" height="13" viewBox="0 0 10 13"><path d="M2.5 5.5V3.8A2.5 2.5 0 0 1 7.5 3.8V5.5" fill="none" stroke="#5f6368" stroke-width="1.5"/><rect x="0.5" y="5.5" width="9" height="7" rx="1" fill="#5f6368"/></svg><div style="position:absolute;left:171px;top:40.80px;font-size:13px;line-height:1;color:#202124;white-space:pre;">editor.construct.net</div><svg style="position:absolute;left:1187px;top:39px" width="14" height="16" viewBox="0 0 14 16"><rect x="1.5" y="2.5" width="11" height="12.5" rx="1" fill="none" stroke="#5f6368" stroke-width="1.4"/><rect x="4.5" y="1" width="5" height="3" fill="#5f6368"/></svg><svg style="position:absolute;left:1215px;top:42px" width="14" height="10" viewBox="0 0 14 10"><circle cx="3.5" cy="5" r="2.5" fill="none" stroke="#5f6368" stroke-width="2"/><path d="M6 5H13M10.5 5V8M12.5 5V8" stroke="#5f6368" stroke-width="2"/></svg><svg style="position:absolute;left:1244px;top:40px" width="14" height="14" viewBox="0 0 14 14"><circle cx="7" cy="7" r="5.8" fill="none" stroke="#5f6368" stroke-width="1.3"/><path d="M7 3.8V10.2M3.8 7H10.2" stroke="#5f6368" stroke-width="1.4"/></svg><svg style="position:absolute;left:1273px;top:40px" width="15" height="14" viewBox="0 0 24 23"><path d="M12 0L15 8.3H24L16.8 13.6L19.4 22.5L12 17.2L4.6 22.5L7.2 13.6L0 8.3H9Z" fill="#1a73e8"/></svg><svg style="position:absolute;left:1309px;top:40px" width="15" height="14" viewBox="0 0 15 14"><path d="M1 4H4A2 2 0 0 1 8 4H11V7A2 2 0 0 1 11 11V14H8A2 2 0 0 0 4 14H1V11A2 2 0 0 0 1 7Z" fill="#5f6368"/></svg><div style="position:absolute;left:1344px;top:39.5px;width:3px;height:3px;background:#5f6368;border-radius:50%;"></div><div style="position:absolute;left:1344px;top:45.5px;width:3px;height:3px;background:#5f6368;border-radius:50%;"></div><div style="position:absolute;left:1344px;top:51.5px;width:3px;height:3px;background:#5f6368;border-radius:50%;"></div><div style="position:absolute;left:43px;top:64px;width:1323px;height:704px;background:#a8a8a8;"></div><div style="position:absolute;left:43px;top:64px;width:283px;height:23px;background:#1a4872;"></div><div style="position:absolute;left:47px;top:70.42px;font-size:12.5px;line-height:1;color:#b8c4d0;white-space:pre;">Properties</div><svg style="position:absolute;left:309.5px;top:70.5px" width="9" height="9" viewBox="0 0 10 10"><path d="M1 1L9 9M9 1L1 9" stroke="#b8c4d0" stroke-width="1.4"/></svg><div style="position:absolute;left:43px;top:87px;width:18px;height:681px;background:#a2a2a2;"></div><div style="position:absolute;left:43px;top:87px;width:283px;height:22px;background:#a0a0a0;"></div><div style="position:absolute;left:65px;top:92.42px;font-size:12.5px;line-height:1;color:#1a1a1a;white-space:pre;">C</div><div style="position:absolute;left:61px;top:112px;width:265px;height:21px;background:#b3b3b3;border-bottom:1px solid #a5a5a5;"></div><div style="position:absolute;left:65px;top:116.42px;font-size:12.5px;line-height:1;color:#1a1a1a;white-space:pre;">N</div><div style="position:absolute;left:61px;top:135px;width:265px;height:21px;background:#b3b3b3;border-bottom:1px solid #a5a5a5;"></div><div style="position:absolute;left:65px;top:139.42px;font-size:12.5px;line-height:1;color:#1a1a1a;white-space:pre;">G</div><div style="position:absolute;left:61px;top:157px;width:265px;height:21px;background:#b3b3b3;border-bottom:1px solid #a5a5a5;"></div><div style="position:absolute;left:65px;top:161.42px;font-size:12.5px;line-height:1;color:#777;white-space:pre;">P</div><div style="position:absolute;left:43px;top:179px;width:283px;height:22px;background:#a0a0a0;"></div><div style="position:absolute;left:65px;top:184.42px;font-size:12.5px;line-height:1;color:#1a1a1a;white-space:pre;">C</div><div style="position:absolute;left:61px;top:203px;width:265px;height:21px;background:#b3b3b3;border-bottom:1px solid #a5a5a5;"></div><div style="position:absolute;left:65px;top:207.42px;font-size:12.5px;line-height:1;color:#1a1a1a;white-space:pre;">P</div><div style="position:absolute;left:61px;top:226px;width:265px;height:21px;background:#b3b3b3;border-bottom:1px solid #a5a5a5;"></div><div style="position:absolute;left:65px;top:230.42px;font-size:12.5px;line-height:1;color:#1a1a1a;white-space:pre;">S</div><div style="position:absolute;left:61px;top:248px;width:265px;height:21px;background:#b3b3b3;border-bottom:1px solid #a5a5a5;"></div><div style="position:absolute;left:65px;top:252.42px;font-size:12.5px;line-height:1;color:#1a1a1a;white-space:pre;">A</div><div style="position:absolute;left:61px;top:270px;width:265px;height:21px;background:#b3b3b3;border-bottom:1px solid #a5a5a5;"></div><div style="position:absolute;left:65px;top:274.42px;font-size:12.5px;line-height:1;color:#1a1a1a;white-space:pre;">C</div><div style="position:absolute;left:61px;top:292px;width:265px;height:21px;background:#b3b3b3;border-bottom:1px solid #a5a5a5;"></div><div style="position:absolute;left:65px;top:296.42px;font-size:12.5px;line-height:1;color:#1a1a1a;white-space:pre;">C</div><div style="position:absolute;left:61px;top:313px;width:265px;height:21px;background:#b3b3b3;border-bottom:1px solid #a5a5a5;"></div><div style="position:absolute;left:65px;top:317.42px;font-size:12.5px;line-height:1;color:#1a1a1a;white-space:pre;">L</div><div style="position:absolute;left:61px;top:335px;width:265px;height:21px;background:#b3b3b3;border-bottom:1px solid #a5a5a5;"></div><div style="position:absolute;left:65px;top:339.42px;font-size:12.5px;line-height:1;color:#1a1a1a;white-space:pre;">Z</div><div style="position:absolute;left:61px;top:357px;width:265px;height:21px;background:#b3b3b3;border-bottom:1px solid #a5a5a5;"></div><div style="position:absolute;left:65px;top:361.42px;font-size:12.5px;line-height:1;color:#777;white-space:pre;">Z</div><div style="position:absolute;left:61px;top:380px;width:265px;height:21px;background:#b3b3b3;border-bottom:1px solid #a5a5a5;"></div><div style="position:absolute;left:65px;top:384.42px;font-size:12.5px;line-height:1;color:#777;white-space:pre;">U</div><div style="position:absolute;left:43px;top:401px;width:283px;height:22px;background:#a0a0a0;"></div><div style="position:absolute;left:65px;top:406.42px;font-size:12.5px;line-height:1;color:#1a1a1a;white-space:pre;">In</div><div style="position:absolute;left:61px;top:427px;width:265px;height:21px;background:#b3b3b3;border-bottom:1px solid #a5a5a5;"></div><div style="position:absolute;left:65px;top:431.42px;font-size:12.5px;line-height:1;color:#1a1a1a;white-space:pre;">H</div><div style="position:absolute;left:61px;top:449px;width:265px;height:21px;background:#b3b3b3;border-bottom:1px solid #a5a5a5;"></div><div style="position:absolute;left:65px;top:453.42px;font-size:12.5px;line-height:1;color:#1a1a1a;white-space:pre;">A</div><div style="position:absolute;left:326px;top:64px;width:2px;height:704px;background:#9b9b9b;"></div><div style="position:absolute;left:328px;top:64px;width:772px;height:12px;background:#a9a9a9;"></div><div style="position:absolute;left:332px;top:68px;width:46px;height:20px;background:#b0b0b0;border:1px solid #9a9a9a;border-radius:3px;"></div><div style="position:absolute;left:338px;top:70.84px;font-size:12px;line-height:1;color:#333;white-space:pre;font-weight:bold;">M</div><div style="position:absolute;left:388px;top:67px;width:12px;height:10px;background:#2a2a2a;"></div><svg style="position:absolute;left:423px;top:70px" width="14" height="8" viewBox="0 0 14 8"><path d="M2 8C4 3 9 3 12 8" fill="none" stroke="#333" stroke-width="2"/></svg><svg style="position:absolute;left:468px;top:70px" width="14" height="8" viewBox="0 0 14 8"><path d="M12 8C10 3 5 3 2 8" fill="none" stroke="#777" stroke-width="2"/></svg><svg style="position:absolute;left:513px;top:68px" width="10" height="10" viewBox="0 0 10 10"><path d="M1 1V10L9 5.5Z" fill="#222"/></svg><div style="position:absolute;left:413px;top:66px;width:1px;height:12px;background:#999;"></div><div style="position:absolute;left:500px;top:66px;width:1px;height:12px;background:#999;"></div><div style="position:absolute;left:546px;top:66px;width:1px;height:12px;background:#999;"></div><div style="position:absolute;left:553px;top:70px;width:77px;height:20px;background:#6f6f6f;border:1px solid #555;border-radius:8px;box-sizing:border-box;"></div><div style="position:absolute;left:633px;top:70px;width:55px;height:20px;background:#8c8a74;border:1px solid #555;border-radius:8px;box-sizing:border-box;"></div><div style="position:absolute;left:690px;top:70px;width:90px;height:20px;background:#b7a9a9;border:1px solid #555;border-radius:8px;box-sizing:border-box;"></div><div style="position:absolute;left:783px;top:70px;width:82px;height:20px;background:#76866c;border:1px solid #555;border-radius:8px;box-sizing:border-box;"></div><div style="position:absolute;left:867px;top:70px;width:118px;height:20px;background:#7d8b6a;border:1px solid #555;border-radius:8px;box-sizing:border-box;"></div><div style="position:absolute;left:1002px;top:70.84px;font-size:12px;line-height:1;color:#8a8a8a;white-space:pre;">Tutorials</div><div style="position:absolute;left:1073px;top:67px;width:19px;height:19px;background:#c07ac0;border-radius:50%;"></div><div style="position:absolute;left:1100px;top:64px;width:266px;height:23px;background:#1a4872;"></div><div style="position:absolute;left:1106px;top:70.42px;font-size:12.5px;line-height:1;color:#b8c4d0;white-space:pre;">Project</div><svg style="position:absolute;left:1350.0px;top:70.0px" width="10" height="10" viewBox="0 0 10 10"><path d="M1 1L9 9M9 1L1 9" stroke="#c8d2dc" stroke-width="1.4"/></svg><div style="position:absolute;left:1098px;top:64px;width:2px;height:704px;background:#9e9e9e;"></div><div style="position:absolute;left:1340px;top:107px;width:26px;height:1px;background:#8a8a8a;"></div><div style="position:absolute;left:1340px;top:417px;width:26px;height:24px;background:#1a4872;"></div><svg style="position:absolute;left:1349.5px;top:424.0px" width="9" height="9" viewBox="0 0 10 10"><path d="M1 1L9 9M9 1L1 9" stroke="#c8d2dc" stroke-width="1.4"/></svg><div style="position:absolute;left:1340px;top:441px;width:26px;height:22px;background:#b1b1b1;border-bottom:1px solid #9c9c9c;box-sizing:border-box;"></div><div style="position:absolute;left:1350px;top:445.69px;font-size:11px;line-height:1;color:#555;white-space:pre;">1</div><div style="position:absolute;left:1340px;top:463px;width:26px;height:22px;background:#a2a2a2;border:1px solid #959595;box-sizing:border-box;"></div><div style="position:absolute;left:1350px;top:467.69px;font-size:11px;line-height:1;color:#555;white-space:pre;">0</div><div style="position:absolute;left:1340px;top:746px;width:26px;height:22px;background:#a5a5a5;"></div><div style="position:absolute;left:43px;top:757px;width:1057px;height:11px;background:#9d9d9e;"></div><div style="position:absolute;left:1103px;top:746px;width:99px;height:24px;background:#a8a8a8;border:1px solid #6d6d6d;border-radius:9px;box-sizing:border-box;"></div><div style="position:absolute;left:1110px;top:751.43px;font-size:11.3px;line-height:1;color:#222;white-space:pre;">Layers - Game</div><svg style="position:absolute;left:1189.0px;top:753.5px" width="8" height="8" viewBox="0 0 10 10"><path d="M1 1L9 9M9 1L1 9" stroke="#333" stroke-width="1.3"/></svg><div style="position:absolute;left:1203px;top:746px;width:67px;height:24px;background:#6a6a6a;border-radius:9px;"></div><div style="position:absolute;left:1212px;top:751.43px;font-size:11.3px;line-height:1;color:#222;white-space:pre;">Tilemap</div><svg style="position:absolute;left:1256.0px;top:753.5px" width="8" height="8" viewBox="0 0 10 10"><path d="M1 1L9 9M9 1L1 9" stroke="#444" stroke-width="1.3"/></svg><div style="position:absolute;left:70px;top:75px;width:1270px;height:682px;background:#cccccc;border-radius:7px;"></div><div style="position:absolute;left:76px;top:81px;width:1258px;height:670px;background:#fff;"></div><div style="position:absolute;left:76px;top:81px;width:1258px;height:21px;background:#2a7fcc;"></div><div style="position:absolute;left:393.5px;width:600px;text-align:center;top:85.98px;font-size:11.6px;line-height:1;color:#fff;white-space:pre;">Animations Editor: MainChar</div><svg style="position:absolute;left:1317.5px;top:86.5px" width="10" height="10" viewBox="0 0 10 10"><path d="M1 1L9 9M9 1L1 9" stroke="#fff" stroke-width="1.5"/></svg><div style="position:absolute;left:76px;top:102px;width:252px;height:24px;background:#2468a5;"></div><div style="position:absolute;left:-98px;width:600px;text-align:center;top:107.90px;font-size:11.7px;line-height:1;color:#fff;white-space:pre;">Color palette</div><div style="position:absolute;left:79px;top:129px;width:247px;height:130px;background:linear-gradient(180deg,rgba(128,128,128,0),#808080),linear-gradient(90deg,#f00,#ff0 16.67%,#0f0 33.33%,#0ff 50%,#00f 66.67%,#f0f 83.33%,#f00);"></div><div style="position:absolute;left:80px;top:267px;width:245px;height:15px;background:linear-gradient(90deg,#000 0%,#000 49.8%,#fff 100%);border:1px solid #ddd;box-sizing:border-box;"></div><svg style="position:absolute;left:194px;top:281px" width="16" height="9" viewBox="0 0 16 9"><path d="M1 8.5H15L8 1.5Z" fill="#111"/></svg><div style="position:absolute;left:82.3px;top:299px;width:26.5px;height:26.5px;background-color:#fff;background-image:conic-gradient(#e3e3e3 0 25%,#fff 0 50%,#e3e3e3 0 75%,#fff 0);background-size:9.2px 9.2px;background-position:0.9px -0.5px;border:1px solid #c6c6c6;border-radius:3.5px;box-sizing:border-box;"></div><div style="position:absolute;left:112.2px;top:299px;width:26.5px;height:26.5px;background-color:#fff;background-image:conic-gradient(#e3e3e3 0 25%,#fff 0 50%,#e3e3e3 0 75%,#fff 0);background-size:9.2px 9.2px;background-position:0.9px -0.5px;border:1px solid #c6c6c6;border-radius:3.5px;box-sizing:border-box;"></div><div style="position:absolute;left:143.2px;top:299px;width:26.5px;height:26.5px;background-color:#fff;background-image:conic-gradient(#e3e3e3 0 25%,#fff 0 50%,#e3e3e3 0 75%,#fff 0);background-size:9.2px 9.2px;background-position:0.9px -0.5px;border:1px solid #c6c6c6;border-radius:3.5px;box-sizing:border-box;"></div><div style="position:absolute;left:174px;top:299px;width:26.5px;height:26.5px;background-color:#fff;background-image:conic-gradient(#e3e3e3 0 25%,#fff 0 50%,#e3e3e3 0 75%,#fff 0);background-size:9.2px 9.2px;background-position:0.9px -0.5px;border:1px solid #c6c6c6;border-radius:3.5px;box-sizing:border-box;"></div><div style="position:absolute;left:204.4px;top:299px;width:26.5px;height:26.5px;background-color:#fff;background-image:conic-gradient(#e3e3e3 0 25%,#fff 0 50%,#e3e3e3 0 75%,#fff 0);background-size:9.2px 9.2px;background-position:0.9px -0.5px;border:1px solid #c6c6c6;border-radius:3.5px;box-sizing:border-box;"></div><div style="position:absolute;left:235.2px;top:299px;width:26.5px;height:26.5px;background-color:#fff;background-image:conic-gradient(#e3e3e3 0 25%,#fff 0 50%,#e3e3e3 0 75%,#fff 0);background-size:9.2px 9.2px;background-position:0.9px -0.5px;border:1px solid #c6c6c6;border-radius:3.5px;box-sizing:border-box;"></div><div style="position:absolute;left:265px;top:299px;width:26.5px;height:26.5px;background-color:#fff;background-image:conic-gradient(#e3e3e3 0 25%,#fff 0 50%,#e3e3e3 0 75%,#fff 0);background-size:9.2px 9.2px;background-position:0.9px -0.5px;border:1px solid #c6c6c6;border-radius:3.5px;box-sizing:border-box;"></div><div style="position:absolute;left:82.3px;top:329.5px;width:26.5px;height:26.5px;background-color:#fff;background-image:conic-gradient(#e3e3e3 0 25%,#fff 0 50%,#e3e3e3 0 75%,#fff 0);background-size:9.2px 9.2px;background-position:0.9px -0.5px;border:1px solid #c6c6c6;border-radius:3.5px;box-sizing:border-box;"></div><div style="position:absolute;left:112.2px;top:329.5px;width:26.5px;height:26.5px;background-color:#fff;background-image:conic-gradient(#e3e3e3 0 25%,#fff 0 50%,#e3e3e3 0 75%,#fff 0);background-size:9.2px 9.2px;background-position:0.9px -0.5px;border:1px solid #c6c6c6;border-radius:3.5px;box-sizing:border-box;"></div><div style="position:absolute;left:143.2px;top:329.5px;width:26.5px;height:26.5px;background-color:#fff;background-image:conic-gradient(#e3e3e3 0 25%,#fff 0 50%,#e3e3e3 0 75%,#fff 0);background-size:9.2px 9.2px;background-position:0.9px -0.5px;border:1px solid #c6c6c6;border-radius:3.5px;box-sizing:border-box;"></div><div style="position:absolute;left:174px;top:329.5px;width:26.5px;height:26.5px;background-color:#fff;background-image:conic-gradient(#e3e3e3 0 25%,#fff 0 50%,#e3e3e3 0 75%,#fff 0);background-size:9.2px 9.2px;background-position:0.9px -0.5px;border:1px solid #c6c6c6;border-radius:3.5px;box-sizing:border-box;"></div><div style="position:absolute;left:204.4px;top:329.5px;width:26.5px;height:26.5px;background-color:#fff;background-image:conic-gradient(#e3e3e3 0 25%,#fff 0 50%,#e3e3e3 0 75%,#fff 0);background-size:9.2px 9.2px;background-position:0.9px -0.5px;border:1px solid #c6c6c6;border-radius:3.5px;box-sizing:border-box;"></div><div style="position:absolute;left:235.2px;top:329.5px;width:26.5px;height:26.5px;background-color:#fff;background-image:conic-gradient(#e3e3e3 0 25%,#fff 0 50%,#e3e3e3 0 75%,#fff 0);background-size:9.2px 9.2px;background-position:0.9px -0.5px;border:1px solid #c6c6c6;border-radius:3.5px;box-sizing:border-box;"></div><div style="position:absolute;left:265px;top:329.5px;width:26.5px;height:26.5px;background-color:#fff;background-image:conic-gradient(#e3e3e3 0 25%,#fff 0 50%,#e3e3e3 0 75%,#fff 0);background-size:9.2px 9.2px;background-position:0.9px -0.5px;border:1px solid #c6c6c6;border-radius:3.5px;box-sizing:border-box;"></div><div style="position:absolute;left:82.3px;top:360.2px;width:26.5px;height:26.5px;background-color:#fff;background-image:conic-gradient(#e3e3e3 0 25%,#fff 0 50%,#e3e3e3 0 75%,#fff 0);background-size:9.2px 9.2px;background-position:0.9px -0.5px;border:1px solid #c6c6c6;border-radius:3.5px;box-sizing:border-box;"></div><div style="position:absolute;left:112.2px;top:360.2px;width:26.5px;height:26.5px;background-color:#fff;background-image:conic-gradient(#e3e3e3 0 25%,#fff 0 50%,#e3e3e3 0 75%,#fff 0);background-size:9.2px 9.2px;background-position:0.9px -0.5px;border:1px solid #c6c6c6;border-radius:3.5px;box-sizing:border-box;"></div><div style="position:absolute;left:143.2px;top:360.2px;width:26.5px;height:26.5px;background-color:#fff;background-image:conic-gradient(#e3e3e3 0 25%,#fff 0 50%,#e3e3e3 0 75%,#fff 0);background-size:9.2px 9.2px;background-position:0.9px -0.5px;border:1px solid #c6c6c6;border-radius:3.5px;box-sizing:border-box;"></div><div style="position:absolute;left:174px;top:360.2px;width:26.5px;height:26.5px;background-color:#fff;background-image:conic-gradient(#e3e3e3 0 25%,#fff 0 50%,#e3e3e3 0 75%,#fff 0);background-size:9.2px 9.2px;background-position:0.9px -0.5px;border:1px solid #c6c6c6;border-radius:3.5px;box-sizing:border-box;"></div><div style="position:absolute;left:204.4px;top:360.2px;width:26.5px;height:26.5px;background-color:#fff;background-image:conic-gradient(#e3e3e3 0 25%,#fff 0 50%,#e3e3e3 0 75%,#fff 0);background-size:9.2px 9.2px;background-position:0.9px -0.5px;border:1px solid #c6c6c6;border-radius:3.5px;box-sizing:border-box;"></div><div style="position:absolute;left:235.2px;top:360.2px;width:26.5px;height:26.5px;background-color:#fff;background-image:conic-gradient(#e3e3e3 0 25%,#fff 0 50%,#e3e3e3 0 75%,#fff 0);background-size:9.2px 9.2px;background-position:0.9px -0.5px;border:1px solid #c6c6c6;border-radius:3.5px;box-sizing:border-box;"></div><div style="position:absolute;left:265px;top:360.2px;width:26.5px;height:26.5px;background-color:#fff;background-image:conic-gradient(#e3e3e3 0 25%,#fff 0 50%,#e3e3e3 0 75%,#fff 0);background-size:9.2px 9.2px;background-position:0.9px -0.5px;border:1px solid #c6c6c6;border-radius:3.5px;box-sizing:border-box;"></div><div style="position:absolute;left:82.3px;top:390.2px;width:26.5px;height:26.5px;background-color:#fff;background-image:conic-gradient(#e3e3e3 0 25%,#fff 0 50%,#e3e3e3 0 75%,#fff 0);background-size:9.2px 9.2px;background-position:0.9px -0.5px;border:1px solid #c6c6c6;border-radius:3.5px;box-sizing:border-box;"></div><div style="position:absolute;left:112.2px;top:390.2px;width:26.5px;height:26.5px;background-color:#fff;background-image:conic-gradient(#e3e3e3 0 25%,#fff 0 50%,#e3e3e3 0 75%,#fff 0);background-size:9.2px 9.2px;background-position:0.9px -0.5px;border:1px solid #c6c6c6;border-radius:3.5px;box-sizing:border-box;"></div><div style="position:absolute;left:143.2px;top:390.2px;width:26.5px;height:26.5px;background-color:#fff;background-image:conic-gradient(#e3e3e3 0 25%,#fff 0 50%,#e3e3e3 0 75%,#fff 0);background-size:9.2px 9.2px;background-position:0.9px -0.5px;border:1px solid #c6c6c6;border-radius:3.5px;box-sizing:border-box;"></div><div style="position:absolute;left:174px;top:390.2px;width:26.5px;height:26.5px;background-color:#fff;background-image:conic-gradient(#e3e3e3 0 25%,#fff 0 50%,#e3e3e3 0 75%,#fff 0);background-size:9.2px 9.2px;background-position:0.9px -0.5px;border:1px solid #c6c6c6;border-radius:3.5px;box-sizing:border-box;"></div><div style="position:absolute;left:204.4px;top:390.2px;width:26.5px;height:26.5px;background-color:#fff;background-image:conic-gradient(#e3e3e3 0 25%,#fff 0 50%,#e3e3e3 0 75%,#fff 0);background-size:9.2px 9.2px;background-position:0.9px -0.5px;border:1px solid #c6c6c6;border-radius:3.5px;box-sizing:border-box;"></div><div style="position:absolute;left:235.2px;top:390.2px;width:26.5px;height:26.5px;background-color:#fff;background-image:conic-gradient(#e3e3e3 0 25%,#fff 0 50%,#e3e3e3 0 75%,#fff 0);background-size:9.2px 9.2px;background-position:0.9px -0.5px;border:1px solid #c6c6c6;border-radius:3.5px;box-sizing:border-box;"></div><div style="position:absolute;left:265px;top:390.2px;width:26.5px;height:26.5px;background-color:#fff;background-image:conic-gradient(#e3e3e3 0 25%,#fff 0 50%,#e3e3e3 0 75%,#fff 0);background-size:9.2px 9.2px;background-position:0.9px -0.5px;border:1px solid #c6c6c6;border-radius:3.5px;box-sizing:border-box;"></div><div style="position:absolute;left:76px;top:423px;width:252px;height:7px;background:#cccccc;"></div><div style="position:absolute;left:80px;top:432px;width:245px;height:176px;background-color:#fff;background-image:conic-gradient(#e3e3e3 0 25%,#fff 0 50%,#e3e3e3 0 75%,#fff 0);background-size:27.0px 27.0px;border:1px solid #ccc;box-sizing:border-box;"></div><div style="position:absolute;left:190px;top:500px;width:56px;height:56px;background:#fff;"></div><div style="position:absolute;left:159px;top:480px;width:56px;height:56px;background:#808080;"></div><div style="position:absolute;left:100px;width:95px;text-align:right;top:619.0px;font-size:11.7px;line-height:14px;color:#222;">Red</div><div style="position:absolute;left:205px;top:617.0px;width:120px;height:20px;border:1px solid #ddd;box-sizing:border-box;"></div><div style="position:absolute;left:210px;top:621.10px;font-size:11.7px;line-height:1;color:#222;white-space:pre;">128</div><div style="position:absolute;left:100px;width:95px;text-align:right;top:641.3px;font-size:11.7px;line-height:14px;color:#222;">Green</div><div style="position:absolute;left:205px;top:639.3px;width:120px;height:20px;border:1px solid #ddd;box-sizing:border-box;"></div><div style="position:absolute;left:210px;top:643.40px;font-size:11.7px;line-height:1;color:#222;white-space:pre;">128</div><div style="position:absolute;left:100px;width:95px;text-align:right;top:663.6px;font-size:11.7px;line-height:14px;color:#222;">Blue</div><div style="position:absolute;left:205px;top:661.6px;width:120px;height:20px;border:1px solid #ddd;box-sizing:border-box;"></div><div style="position:absolute;left:210px;top:665.70px;font-size:11.7px;line-height:1;color:#222;white-space:pre;">128</div><div style="position:absolute;left:100px;width:95px;text-align:right;top:685.9px;font-size:11.7px;line-height:14px;color:#222;">Alpha</div><div style="position:absolute;left:205px;top:683.9px;width:120px;height:20px;border:1px solid #ddd;box-sizing:border-box;"></div><div style="position:absolute;left:210px;top:688.00px;font-size:11.7px;line-height:1;color:#222;white-space:pre;">255</div><div style="position:absolute;left:100px;width:225px;text-align:right;top:710px;font-size:11.7px;line-height:14px;color:#2a2af0;">RGB: 128, 128, 128</div><div style="position:absolute;left:90px;top:732.10px;font-size:11.7px;line-height:1;color:#222;white-space:pre;">100%     Pointer: 46,15</div><div style="position:absolute;left:328px;top:102px;width:7px;height:626px;background:#cccccc;"></div><div style="position:absolute;left:335px;top:102px;width:801px;height:58px;background:#efefef;"></div><div style="position:absolute;left:335px;top:160px;width:29px;height:416px;background:#efefef;"></div><svg style="position:absolute;left:341.0px;top:108.4px" width="16" height="16" viewBox="0 0 16 16"><path d="M1.8 0.6H9.6L14.2 5.2V15.6H1.8Z" fill="none" stroke="#111" stroke-width="1.5" stroke-linejoin="round"/><path d="M9.4 0.6V5.4H14.2" fill="none" stroke="#111" stroke-width="1.3"/></svg><svg style="position:absolute;left:368.3px;top:108.4px" width="16" height="16" viewBox="0 0 16 16"><path d="M1.2 2.8H6L7.5 4.3H14.8V13.6H1.2Z" fill="none" stroke="#111" stroke-width="1.5" stroke-linejoin="round"/></svg><svg style="position:absolute;left:395.2px;top:108.4px" width="16" height="16" viewBox="0 0 16 16"><path d="M2 2H11.5L14 4.5V14H2Z" fill="#111"/><rect x="4.5" y="3.2" width="6" height="3.3" fill="#efefef"/><circle cx="8" cy="10.3" r="1.9" fill="#efefef"/></svg><svg style="position:absolute;left:433.3px;top:108.4px" width="16" height="16" viewBox="0 0 16 16"><path d="M4 8V2H9.5L13 5.5V14H9" fill="none" stroke="#111" stroke-width="1.4"/><path d="M6 8.5V14M3.5 11.5L6 14L8.5 11.5" fill="none" stroke="#111" stroke-width="1.4"/><path d="M9.3 2V5.7H13" fill="none" stroke="#111" stroke-width="1.2"/></svg><svg style="position:absolute;left:470.8px;top:108.4px" width="16" height="16" viewBox="0 0 16 16"><path d="M3.5 8.3C6 5.5 10.5 5.3 13.5 9.8" fill="none" stroke="#111" stroke-width="2.1"/><path d="M1.5 5.2V10.8H7Z" fill="#111"/></svg><svg style="position:absolute;left:508.79999999999995px;top:108.4px" width="16" height="16" viewBox="0 0 16 16"><path d="M12.5 8.3C10 5.5 5.5 5.3 2.5 9.8" fill="none" stroke="#9a9a9a" stroke-width="2.1"/><path d="M14.5 5.2V10.8H9Z" fill="#9a9a9a"/></svg><svg style="position:absolute;left:546.0px;top:108.4px" width="16" height="16" viewBox="0 0 16 16"><circle cx="3.6" cy="3.8" r="2.2" fill="none" stroke="#111" stroke-width="1.5"/><circle cx="3.6" cy="12.4" r="2.2" fill="none" stroke="#111" stroke-width="1.5"/><path d="M5.3 5.3L14.8 13.3M5.3 10.9L14.8 2.9" stroke="#111" stroke-width="1.6"/></svg><svg style="position:absolute;left:573.2px;top:108.4px" width="16" height="16" viewBox="0 0 16 16"><rect x="5" y="4.5" width="8.5" height="10" fill="none" stroke="#111" stroke-width="1.5" rx="0.5"/><path d="M2.5 11.5V2H10" fill="none" stroke="#111" stroke-width="1.5"/></svg><svg style="position:absolute;left:600.2px;top:108.4px" width="16" height="16" viewBox="0 0 16 16"><rect x="2.5" y="3" width="11" height="11.5" fill="none" stroke="#111" stroke-width="1.5" rx="0.5"/><rect x="5.5" y="1.3" width="5" height="3.2" fill="#111"/></svg><svg style="position:absolute;left:637.7px;top:108.4px" width="16" height="16" viewBox="0 0 16 16"><path d="M7 2V14H1.5Z" fill="#111"/><path d="M9 2V14H14.5Z" fill="none" stroke="#111" stroke-width="1.2"/></svg><svg style="position:absolute;left:675.4px;top:108.4px" width="16" height="16" viewBox="0 0 16 16"><path d="M14 7H2L14 1.5Z" fill="#111"/><path d="M14 9H2L14 14.5Z" fill="none" stroke="#111" stroke-width="1.2"/></svg><svg style="position:absolute;left:713.0px;top:108.4px" width="16" height="16" viewBox="0 0 16 16"><path d="M8.3 2.5A5.6 5.6 0 1 1 7.2 13.6" fill="none" stroke="#111" stroke-width="1.6"/><path d="M7.2 13.6A5.6 5.6 0 0 1 3.3 4.6" fill="none" stroke="#111" stroke-width="1.6" stroke-dasharray="1.6 1.4"/><path d="M5.2 1.4L10.3 1.2L8.2 6Z" fill="#111"/></svg><svg style="position:absolute;left:750.9px;top:108.4px" width="16" height="16" viewBox="0 0 16 16"><path d="M7.7 2.5A5.6 5.6 0 1 0 8.8 13.6" fill="none" stroke="#111" stroke-width="1.6"/><path d="M8.8 13.6A5.6 5.6 0 0 0 12.7 4.6" fill="none" stroke="#111" stroke-width="1.6" stroke-dasharray="1.6 1.4"/><path d="M10.8 1.4L5.7 1.2L7.8 6Z" fill="#111"/></svg><svg style="position:absolute;left:800.7px;top:108.4px" width="16" height="16" viewBox="0 0 16 16"><path d="M4 1V12H15M1 4H12V15" fill="none" stroke="#111" stroke-width="1.7"/></svg><svg style="position:absolute;left:838.6px;top:108.4px" width="16" height="16" viewBox="0 0 16 16"><path d="M9.3 6.7L14 2M2 14L6.7 9.3M14 2V6.5M14 2H9.5M2 14V9.5M2 14H6.5" fill="none" stroke="#111" stroke-width="1.5"/></svg><svg style="position:absolute;left:873.8px;top:108.4px" width="16" height="16" viewBox="0 0 16 16"><circle cx="6.5" cy="6.5" r="4.5" fill="none" stroke="#111" stroke-width="1.6"/><path d="M9.8 9.8L14.5 14.5" stroke="#111" stroke-width="2"/><path d="M4.3 6.5H8.7M6.5 4.3V8.7" stroke="#111" stroke-width="1.2"/></svg><svg style="position:absolute;left:900.9px;top:108.4px" width="16" height="16" viewBox="0 0 16 16"><circle cx="6.5" cy="6.5" r="4.5" fill="none" stroke="#111" stroke-width="1.6"/><path d="M9.8 9.8L14.5 14.5" stroke="#111" stroke-width="2"/><path d="M4.3 6.5H8.7" stroke="#111" stroke-width="1.2"/></svg><svg style="position:absolute;left:928.2px;top:108.4px" width="16" height="16" viewBox="0 0 16 16"><circle cx="6.5" cy="6.5" r="4.5" fill="none" stroke="#111" stroke-width="1.6"/><path d="M9.8 9.8L14.5 14.5" stroke="#111" stroke-width="2"/></svg><svg style="position:absolute;left:965.6px;top:108.4px" width="16" height="16" viewBox="0 0 16 16"><rect x="2" y="2" width="12" height="12" fill="none" stroke="#111" stroke-width="1.5"/><path d="M2 2H14V14Z" fill="#111"/></svg><svg style="position:absolute;left:992.6px;top:108.4px" width="16" height="16" viewBox="0 0 16 16"><path d="M8 1.5L14.5 6L8 10.5L1.5 6Z" fill="#111"/><path d="M2 9L8 13L14 9" fill="none" stroke="#111" stroke-width="1.6"/></svg><svg style="position:absolute;left:1030.0px;top:108.4px" width="16" height="16" viewBox="0 0 16 16"><rect x="2" y="2" width="12" height="12" fill="none" stroke="#111" stroke-width="1.6" rx="1"/><path d="M8 2V14M2 8H14" stroke="#111" stroke-width="1.6"/></svg><svg style="position:absolute;left:1078.5px;top:108.4px" width="16" height="16" viewBox="0 0 16 16"><circle cx="8" cy="8" r="6.3" fill="none" stroke="#111" stroke-width="1.5"/><path d="M6.3 4.8V11.2L11 8Z" fill="#111"/></svg><svg style="position:absolute;left:419.59999999999997px;top:114.2px" width="5.2" height="5.2" viewBox="0 0 5.2 5.2"><path d="M0 0H5.2L2.6 5.2Z" fill="#111"/></svg><svg style="position:absolute;left:494.9px;top:114.2px" width="5.2" height="5.2" viewBox="0 0 5.2 5.2"><path d="M0 0H5.2L2.6 5.2Z" fill="#111"/></svg><svg style="position:absolute;left:533.3px;top:114.2px" width="5.2" height="5.2" viewBox="0 0 5.2 5.2"><path d="M0 0H5.2L2.6 5.2Z" fill="#9a9a9a"/></svg><svg style="position:absolute;left:661.8px;top:114.2px" width="5.2" height="5.2" viewBox="0 0 5.2 5.2"><path d="M0 0H5.2L2.6 5.2Z" fill="#111"/></svg><svg style="position:absolute;left:699.9px;top:114.2px" width="5.2" height="5.2" viewBox="0 0 5.2 5.2"><path d="M0 0H5.2L2.6 5.2Z" fill="#111"/></svg><svg style="position:absolute;left:737.6px;top:114.2px" width="5.2" height="5.2" viewBox="0 0 5.2 5.2"><path d="M0 0H5.2L2.6 5.2Z" fill="#111"/></svg><svg style="position:absolute;left:775.9px;top:114.2px" width="5.2" height="5.2" viewBox="0 0 5.2 5.2"><path d="M0 0H5.2L2.6 5.2Z" fill="#111"/></svg><svg style="position:absolute;left:824.1px;top:114.2px" width="5.2" height="5.2" viewBox="0 0 5.2 5.2"><path d="M0 0H5.2L2.6 5.2Z" fill="#111"/></svg><svg style="position:absolute;left:1016.6999999999999px;top:114.2px" width="5.2" height="5.2" viewBox="0 0 5.2 5.2"><path d="M0 0H5.2L2.6 5.2Z" fill="#111"/></svg><svg style="position:absolute;left:1055.0px;top:114.2px" width="5.2" height="5.2" viewBox="0 0 5.2 5.2"><path d="M0 0H5.2L2.6 5.2Z" fill="#111"/></svg><div style="position:absolute;left:460px;top:104px;width:1px;height:25px;background:#a9a9a9;"></div><div style="position:absolute;left:627px;top:104px;width:1px;height:25px;background:#a9a9a9;"></div><div style="position:absolute;left:790px;top:104px;width:1px;height:25px;background:#a9a9a9;"></div><div style="position:absolute;left:865px;top:104px;width:1px;height:25px;background:#a9a9a9;"></div><div style="position:absolute;left:955px;top:104px;width:1px;height:25px;background:#a9a9a9;"></div><div style="position:absolute;left:1069px;top:104px;width:1px;height:25px;background:#a9a9a9;"></div><svg style="position:absolute;left:341.5px;top:136.6px" width="16" height="16" viewBox="0 0 16 16"><rect x="2.5" y="2.5" width="11" height="11" fill="none" stroke="#111" stroke-width="1.3" stroke-dasharray="1.4 1.4"/></svg><svg style="position:absolute;left:341.5px;top:163.7px" width="16" height="16" viewBox="0 0 16 16"><path d="M9.5 2L14 6.5L7.5 13H4L2 11Z" fill="#111"/><path d="M2.5 10.8L5.5 7.8L8.8 11.1L6.8 13H4.2Z" fill="#fff" stroke="#111" stroke-width="1"/></svg><svg style="position:absolute;left:341.5px;top:190.75px" width="16" height="16" viewBox="0 0 16 16"><path d="M2 14L2.7 10.8L11 2.5L13.5 5L5.2 13.3Z" fill="#111"/></svg><svg style="position:absolute;left:341.5px;top:217.8px" width="16" height="16" viewBox="0 0 16 16"><path d="M6.5 9.5L13.5 2.5L14 3L7 10Z" fill="#111" stroke="#111" stroke-width="1.3"/><path d="M2 14C2 11.5 3 10 5 10C6.5 10 6.8 11.5 6 12.5C5 13.8 3.5 14 2 14Z" fill="#111"/></svg><svg style="position:absolute;left:341.5px;top:244.0px" width="16" height="16" viewBox="0 0 16 16"><path d="M2.5 13.5L13.5 2.5" stroke="#111" stroke-width="1.4"/></svg><svg style="position:absolute;left:341.5px;top:271.2px" width="16" height="16" viewBox="0 0 16 16"><rect x="2.5" y="2.5" width="11" height="11" fill="none" stroke="#111" stroke-width="1.5" rx="1"/></svg><svg style="position:absolute;left:341.5px;top:298.7px" width="16" height="16" viewBox="0 0 16 16"><circle cx="8" cy="8" r="5.5" fill="none" stroke="#111" stroke-width="1.5"/></svg><svg style="position:absolute;left:341.5px;top:326.0px" width="16" height="16" viewBox="0 0 16 16"><path d="M6.5 1.5L12.5 7.5L7 13L1.5 7.5Z" fill="none" stroke="#111" stroke-width="1.5"/><path d="M2.2 8H12L7 13Z" fill="#111"/><path d="M14 10.5C14.8 12 15.2 12.7 15.2 13.3A1.2 1.2 0 0 1 12.8 13.3C12.8 12.7 13.2 12 14 10.5Z" fill="#111"/><path d="M4 1.5L6.5 4" stroke="#111" stroke-width="1.3"/></svg><svg style="position:absolute;left:341.5px;top:352.4px" width="16" height="16" viewBox="0 0 16 16"><path d="M3 13L4 10L9.5 4.5L11.5 6.5L6 12Z" fill="none" stroke="#111" stroke-width="1.4"/><path d="M9 3L11.5 0.8C12.3 0 13.5 0.3 14.5 1.5C15.5 2.5 15.8 3.7 15 4.5L12.8 7L9 3Z" fill="#111"/></svg><svg style="position:absolute;left:341.5px;top:389.5px" width="16" height="16" viewBox="0 0 16 16"><circle cx="8" cy="8" r="3.8" fill="none" stroke="#111" stroke-width="1.3"/><circle cx="8" cy="8" r="1.2" fill="#111"/><path d="M8 1.5V4.2M8 11.8V14.5M1.5 8H4.2M11.8 8H14.5" stroke="#111" stroke-width="1.3"/></svg><svg style="position:absolute;left:341.5px;top:416.6px" width="16" height="16" viewBox="0 0 16 16"><path d="M8 3.2L3 12.5H13Z" fill="none" stroke="#111" stroke-width="1.3"/><rect x="6.4" y="1.5" width="3.2" height="3.2" fill="#fff" stroke="#111" stroke-width="1.1"/><rect x="1.4" y="10.8" width="3.2" height="3.2" fill="#fff" stroke="#111" stroke-width="1.1"/><rect x="11.4" y="10.8" width="3.2" height="3.2" fill="#fff" stroke="#111" stroke-width="1.1"/></svg><div style="position:absolute;left:337px;top:379px;width:25px;height:1px;background:#b9b9b9;"></div><div style="position:absolute;left:364px;top:160px;width:772px;height:416px;overflow:hidden;background:#fff;"><svg style="position:absolute;left:0px;top:0px" width="772" height="416" viewBox="0 0 772 416"><rect width="772" height="416" fill="#fff"/><path d="M-25.48 -12.99h13.49v13.49h-13.49ZM-25.48 13.99h13.49v13.49h-13.49ZM-25.48 40.97h13.49v13.49h-13.49ZM-25.48 67.95h13.49v13.49h-13.49ZM-25.48 94.93h13.49v13.49h-13.49ZM-25.48 121.91h13.49v13.49h-13.49ZM-25.48 148.89h13.49v13.49h-13.49ZM-25.48 175.87h13.49v13.49h-13.49ZM-25.48 202.85h13.49v13.49h-13.49ZM-25.48 229.83h13.49v13.49h-13.49ZM-25.48 256.81h13.49v13.49h-13.49ZM-25.48 283.79h13.49v13.49h-13.49ZM-25.48 310.77h13.49v13.49h-13.49ZM-25.48 337.75h13.49v13.49h-13.49ZM-25.48 364.73h13.49v13.49h-13.49ZM-25.48 391.71h13.49v13.49h-13.49ZM-11.99 -26.48h13.49v13.49h-13.49ZM-11.99 0.50h13.49v13.49h-13.49ZM-11.99 27.48h13.49v13.49h-13.49ZM-11.99 54.46h13.49v13.49h-13.49ZM-11.99 81.44h13.49v13.49h-13.49ZM-11.99 108.42h13.49v13.49h-13.49ZM-11.99 135.40h13.49v13.49h-13.49ZM-11.99 162.38h13.49v13.49h-13.49ZM-11.99 189.36h13.49v13.49h-13.49ZM-11.99 216.34h13.49v13.49h-13.49ZM-11.99 243.32h13.49v13.49h-13.49ZM-11.99 270.30h13.49v13.49h-13.49ZM-11.99 297.28h13.49v13.49h-13.49ZM-11.99 324.26h13.49v13.49h-13.49ZM-11.99 351.24h13.49v13.49h-13.49ZM-11.99 378.22h13.49v13.49h-13.49ZM-11.99 405.20h13.49v13.49h-13.49ZM1.50 -12.99h13.49v13.49h-13.49ZM1.50 13.99h13.49v13.49h-13.49ZM1.50 40.97h13.49v13.49h-13.49ZM1.50 67.95h13.49v13.49h-13.49ZM1.50 94.93h13.49v13.49h-13.49ZM1.50 121.91h13.49v13.49h-13.49ZM1.50 148.89h13.49v13.49h-13.49ZM1.50 175.87h13.49v13.49h-13.49ZM1.50 202.85h13.49v13.49h-13.49ZM1.50 229.83h13.49v13.49h-13.49ZM1.50 256.81h13.49v13.49h-13.49ZM1.50 283.79h13.49v13.49h-13.49ZM1.50 310.77h13.49v13.49h-13.49ZM1.50 337.75h13.49v13.49h-13.49ZM1.50 364.73h13.49v13.49h-13.49ZM1.50 391.71h13.49v13.49h-13.49ZM14.99 -26.48h13.49v13.49h-13.49ZM14.99 0.50h13.49v13.49h-13.49ZM14.99 27.48h13.49v13.49h-13.49ZM14.99 54.46h13.49v13.49h-13.49ZM14.99 81.44h13.49v13.49h-13.49ZM14.99 108.42h13.49v13.49h-13.49ZM14.99 135.40h13.49v13.49h-13.49ZM14.99 162.38h13.49v13.49h-13.49ZM14.99 189.36h13.49v13.49h-13.49ZM14.99 216.34h13.49v13.49h-13.49ZM14.99 243.32h13.49v13.49h-13.49ZM14.99 270.30h13.49v13.49h-13.49ZM14.99 297.28h13.49v13.49h-13.49ZM14.99 324.26h13.49v13.49h-13.49ZM14.99 351.24h13.49v13.49h-13.49ZM14.99 378.22h13.49v13.49h-13.49ZM14.99 405.20h13.49v13.49h-13.49ZM28.48 -12.99h13.49v13.49h-13.49ZM28.48 13.99h13.49v13.49h-13.49ZM28.48 40.97h13.49v13.49h-13.49ZM28.48 67.95h13.49v13.49h-13.49ZM28.48 94.93h13.49v13.49h-13.49ZM28.48 121.91h13.49v13.49h-13.49ZM28.48 148.89h13.49v13.49h-13.49ZM28.48 175.87h13.49v13.49h-13.49ZM28.48 202.85h13.49v13.49h-13.49ZM28.48 229.83h13.49v13.49h-13.49ZM28.48 256.81h13.49v13.49h-13.49ZM28.48 283.79h13.49v13.49h-13.49ZM28.48 310.77h13.49v13.49h-13.49ZM28.48 337.75h13.49v13.49h-13.49ZM28.48 364.73h13.49v13.49h-13.49ZM28.48 391.71h13.49v13.49h-13.49ZM41.97 -26.48h13.49v13.49h-13.49ZM41.97 0.50h13.49v13.49h-13.49ZM41.97 27.48h13.49v13.49h-13.49ZM41.97 54.46h13.49v13.49h-13.49ZM41.97 81.44h13.49v13.49h-13.49ZM41.97 108.42h13.49v13.49h-13.49ZM41.97 135.40h13.49v13.49h-13.49ZM41.97 162.38h13.49v13.49h-13.49ZM41.97 189.36h13.49v13.49h-13.49ZM41.97 216.34h13.49v13.49h-13.49ZM41.97 243.32h13.49v13.49h-13.49ZM41.97 270.30h13.49v13.49h-13.49ZM41.97 297.28h13.49v13.49h-13.49ZM41.97 324.26h13.49v13.49h-13.49ZM41.97 351.24h13.49v13.49h-13.49ZM41.97 378.22h13.49v13.49h-13.49ZM41.97 405.20h13.49v13.49h-13.49ZM55.46 -12.99h13.49v13.49h-13.49ZM55.46 13.99h13.49v13.49h-13.49ZM55.46 40.97h13.49v13.49h-13.49ZM55.46 67.95h13.49v13.49h-13.49ZM55.46 94.93h13.49v13.49h-13.49ZM55.46 121.91h13.49v13.49h-13.49ZM55.46 148.89h13.49v13.49h-13.49ZM55.46 175.87h13.49v13.49h-13.49ZM55.46 202.85h13.49v13.49h-13.49ZM55.46 229.83h13.49v13.49h-13.49ZM55.46 256.81h13.49v13.49h-13.49ZM55.46 283.79h13.49v13.49h-13.49ZM55.46 310.77h13.49v13.49h-13.49ZM55.46 337.75h13.49v13.49h-13.49ZM55.46 364.73h13.49v13.49h-13.49ZM55.46 391.71h13.49v13.49h-13.49ZM68.95 -26.48h13.49v13.49h-13.49ZM68.95 0.50h13.49v13.49h-13.49ZM68.95 27.48h13.49v13.49h-13.49ZM68.95 54.46h13.49v13.49h-13.49ZM68.95 81.44h13.49v13.49h-13.49ZM68.95 108.42h13.49v13.49h-13.49ZM68.95 135.40h13.49v13.49h-13.49ZM68.95 162.38h13.49v13.49h-13.49ZM68.95 189.36h13.49v13.49h-13.49ZM68.95 216.34h13.49v13.49h-13.49ZM68.95 243.32h13.49v13.49h-13.49ZM68.95 270.30h13.49v13.49h-13.49ZM68.95 297.28h13.49v13.49h-13.49ZM68.95 324.26h13.49v13.49h-13.49ZM68.95 351.24h13.49v13.49h-13.49ZM68.95 378.22h13.49v13.49h-13.49ZM68.95 405.20h13.49v13.49h-13.49ZM82.44 -12.99h13.49v13.49h-13.49ZM82.44 13.99h13.49v13.49h-13.49ZM82.44 40.97h13.49v13.49h-13.49ZM82.44 67.95h13.49v13.49h-13.49ZM82.44 94.93h13.49v13.49h-13.49ZM82.44 121.91h13.49v13.49h-13.49ZM82.44 148.89h13.49v13.49h-13.49ZM82.44 175.87h13.49v13.49h-13.49ZM82.44 202.85h13.49v13.49h-13.49ZM82.44 229.83h13.49v13.49h-13.49ZM82.44 256.81h13.49v13.49h-13.49ZM82.44 283.79h13.49v13.49h-13.49ZM82.44 310.77h13.49v13.49h-13.49ZM82.44 337.75h13.49v13.49h-13.49ZM82.44 364.73h13.49v13.49h-13.49ZM82.44 391.71h13.49v13.49h-13.49ZM95.93 -26.48h13.49v13.49h-13.49ZM95.93 0.50h13.49v13.49h-13.49ZM95.93 27.48h13.49v13.49h-13.49ZM95.93 54.46h13.49v13.49h-13.49ZM95.93 81.44h13.49v13.49h-13.49ZM95.93 108.42h13.49v13.49h-13.49ZM95.93 135.40h13.49v13.49h-13.49ZM95.93 162.38h13.49v13.49h-13.49ZM95.93 189.36h13.49v13.49h-13.49ZM95.93 216.34h13.49v13.49h-13.49ZM95.93 243.32h13.49v13.49h-13.49ZM95.93 270.30h13.49v13.49h-13.49ZM95.93 297.28h13.49v13.49h-13.49ZM95.93 324.26h13.49v13.49h-13.49ZM95.93 351.24h13.49v13.49h-13.49ZM95.93 378.22h13.49v13.49h-13.49ZM95.93 405.20h13.49v13.49h-13.49ZM109.42 -12.99h13.49v13.49h-13.49ZM109.42 13.99h13.49v13.49h-13.49ZM109.42 40.97h13.49v13.49h-13.49ZM109.42 67.95h13.49v13.49h-13.49ZM109.42 94.93h13.49v13.49h-13.49ZM109.42 121.91h13.49v13.49h-13.49ZM109.42 148.89h13.49v13.49h-13.49ZM109.42 175.87h13.49v13.49h-13.49ZM109.42 202.85h13.49v13.49h-13.49ZM109.42 229.83h13.49v13.49h-13.49ZM109.42 256.81h13.49v13.49h-13.49ZM109.42 283.79h13.49v13.49h-13.49ZM109.42 310.77h13.49v13.49h-13.49ZM109.42 337.75h13.49v13.49h-13.49ZM109.42 364.73h13.49v13.49h-13.49ZM109.42 391.71h13.49v13.49h-13.49ZM122.91 -26.48h13.49v13.49h-13.49ZM122.91 0.50h13.49v13.49h-13.49ZM122.91 27.48h13.49v13.49h-13.49ZM122.91 54.46h13.49v13.49h-13.49ZM122.91 81.44h13.49v13.49h-13.49ZM122.91 108.42h13.49v13.49h-13.49ZM122.91 135.40h13.49v13.49h-13.49ZM122.91 162.38h13.49v13.49h-13.49ZM122.91 189.36h13.49v13.49h-13.49ZM122.91 216.34h13.49v13.49h-13.49ZM122.91 243.32h13.49v13.49h-13.49ZM122.91 270.30h13.49v13.49h-13.49ZM122.91 297.28h13.49v13.49h-13.49ZM122.91 324.26h13.49v13.49h-13.49ZM122.91 351.24h13.49v13.49h-13.49ZM122.91 378.22h13.49v13.49h-13.49ZM122.91 405.20h13.49v13.49h-13.49ZM136.40 -12.99h13.49v13.49h-13.49ZM136.40 13.99h13.49v13.49h-13.49ZM136.40 40.97h13.49v13.49h-13.49ZM136.40 67.95h13.49v13.49h-13.49ZM136.40 94.93h13.49v13.49h-13.49ZM136.40 121.91h13.49v13.49h-13.49ZM136.40 148.89h13.49v13.49h-13.49ZM136.40 175.87h13.49v13.49h-13.49ZM136.40 202.85h13.49v13.49h-13.49ZM136.40 229.83h13.49v13.49h-13.49ZM136.40 256.81h13.49v13.49h-13.49ZM136.40 283.79h13.49v13.49h-13.49ZM136.40 310.77h13.49v13.49h-13.49ZM136.40 337.75h13.49v13.49h-13.49ZM136.40 364.73h13.49v13.49h-13.49ZM136.40 391.71h13.49v13.49h-13.49ZM149.89 -26.48h13.49v13.49h-13.49ZM149.89 0.50h13.49v13.49h-13.49ZM149.89 27.48h13.49v13.49h-13.49ZM149.89 54.46h13.49v13.49h-13.49ZM149.89 81.44h13.49v13.49h-13.49ZM149.89 108.42h13.49v13.49h-13.49ZM149.89 135.40h13.49v13.49h-13.49ZM149.89 162.38h13.49v13.49h-13.49ZM149.89 189.36h13.49v13.49h-13.49ZM149.89 216.34h13.49v13.49h-13.49ZM149.89 243.32h13.49v13.49h-13.49ZM149.89 270.30h13.49v13.49h-13.49ZM149.89 297.28h13.49v13.49h-13.49ZM149.89 324.26h13.49v13.49h-13.49ZM149.89 351.24h13.49v13.49h-13.49ZM149.89 378.22h13.49v13.49h-13.49ZM149.89 405.20h13.49v13.49h-13.49ZM163.38 -12.99h13.49v13.49h-13.49ZM163.38 13.99h13.49v13.49h-13.49ZM163.38 40.97h13.49v13.49h-13.49ZM163.38 67.95h13.49v13.49h-13.49ZM163.38 94.93h13.49v13.49h-13.49ZM163.38 121.91h13.49v13.49h-13.49ZM163.38 148.89h13.49v13.49h-13.49ZM163.38 175.87h13.49v13.49h-13.49ZM163.38 202.85h13.49v13.49h-13.49ZM163.38 229.83h13.49v13.49h-13.49ZM163.38 256.81h13.49v13.49h-13.49ZM163.38 283.79h13.49v13.49h-13.49ZM163.38 310.77h13.49v13.49h-13.49ZM163.38 337.75h13.49v13.49h-13.49ZM163.38 364.73h13.49v13.49h-13.49ZM163.38 391.71h13.49v13.49h-13.49ZM176.87 -26.48h13.49v13.49h-13.49ZM176.87 0.50h13.49v13.49h-13.49ZM176.87 27.48h13.49v13.49h-13.49ZM176.87 54.46h13.49v13.49h-13.49ZM176.87 81.44h13.49v13.49h-13.49ZM176.87 108.42h13.49v13.49h-13.49ZM176.87 135.40h13.49v13.49h-13.49ZM176.87 162.38h13.49v13.49h-13.49ZM176.87 189.36h13.49v13.49h-13.49ZM176.87 216.34h13.49v13.49h-13.49ZM176.87 243.32h13.49v13.49h-13.49ZM176.87 270.30h13.49v13.49h-13.49ZM176.87 297.28h13.49v13.49h-13.49ZM176.87 324.26h13.49v13.49h-13.49ZM176.87 351.24h13.49v13.49h-13.49ZM176.87 378.22h13.49v13.49h-13.49ZM176.87 405.20h13.49v13.49h-13.49ZM190.36 -12.99h13.49v13.49h-13.49ZM190.36 13.99h13.49v13.49h-13.49ZM190.36 40.97h13.49v13.49h-13.49ZM190.36 67.95h13.49v13.49h-13.49ZM190.36 94.93h13.49v13.49h-13.49ZM190.36 121.91h13.49v13.49h-13.49ZM190.36 148.89h13.49v13.49h-13.49ZM190.36 175.87h13.49v13.49h-13.49ZM190.36 202.85h13.49v13.49h-13.49ZM190.36 229.83h13.49v13.49h-13.49ZM190.36 256.81h13.49v13.49h-13.49ZM190.36 283.79h13.49v13.49h-13.49ZM190.36 310.77h13.49v13.49h-13.49ZM190.36 337.75h13.49v13.49h-13.49ZM190.36 364.73h13.49v13.49h-13.49ZM190.36 391.71h13.49v13.49h-13.49ZM203.85 -26.48h13.49v13.49h-13.49ZM203.85 0.50h13.49v13.49h-13.49ZM203.85 27.48h13.49v13.49h-13.49ZM203.85 54.46h13.49v13.49h-13.49ZM203.85 81.44h13.49v13.49h-13.49ZM203.85 108.42h13.49v13.49h-13.49ZM203.85 135.40h13.49v13.49h-13.49ZM203.85 162.38h13.49v13.49h-13.49ZM203.85 189.36h13.49v13.49h-13.49ZM203.85 216.34h13.49v13.49h-13.49ZM203.85 243.32h13.49v13.49h-13.49ZM203.85 270.30h13.49v13.49h-13.49ZM203.85 297.28h13.49v13.49h-13.49ZM203.85 324.26h13.49v13.49h-13.49ZM203.85 351.24h13.49v13.49h-13.49ZM203.85 378.22h13.49v13.49h-13.49ZM203.85 405.20h13.49v13.49h-13.49ZM217.34 -12.99h13.49v13.49h-13.49ZM217.34 13.99h13.49v13.49h-13.49ZM217.34 40.97h13.49v13.49h-13.49ZM217.34 67.95h13.49v13.49h-13.49ZM217.34 94.93h13.49v13.49h-13.49ZM217.34 121.91h13.49v13.49h-13.49ZM217.34 148.89h13.49v13.49h-13.49ZM217.34 175.87h13.49v13.49h-13.49ZM217.34 202.85h13.49v13.49h-13.49ZM217.34 229.83h13.49v13.49h-13.49ZM217.34 256.81h13.49v13.49h-13.49ZM217.34 283.79h13.49v13.49h-13.49ZM217.34 310.77h13.49v13.49h-13.49ZM217.34 337.75h13.49v13.49h-13.49ZM217.34 364.73h13.49v13.49h-13.49ZM217.34 391.71h13.49v13.49h-13.49ZM230.83 -26.48h13.49v13.49h-13.49ZM230.83 0.50h13.49v13.49h-13.49ZM230.83 27.48h13.49v13.49h-13.49ZM230.83 54.46h13.49v13.49h-13.49ZM230.83 81.44h13.49v13.49h-13.49ZM230.83 108.42h13.49v13.49h-13.49ZM230.83 135.40h13.49v13.49h-13.49ZM230.83 162.38h13.49v13.49h-13.49ZM230.83 189.36h13.49v13.49h-13.49ZM230.83 216.34h13.49v13.49h-13.49ZM230.83 243.32h13.49v13.49h-13.49ZM230.83 270.30h13.49v13.49h-13.49ZM230.83 297.28h13.49v13.49h-13.49ZM230.83 324.26h13.49v13.49h-13.49ZM230.83 351.24h13.49v13.49h-13.49ZM230.83 378.22h13.49v13.49h-13.49ZM230.83 405.20h13.49v13.49h-13.49ZM244.32 -12.99h13.49v13.49h-13.49ZM244.32 13.99h13.49v13.49h-13.49ZM244.32 40.97h13.49v13.49h-13.49ZM244.32 67.95h13.49v13.49h-13.49ZM244.32 94.93h13.49v13.49h-13.49ZM244.32 121.91h13.49v13.49h-13.49ZM244.32 148.89h13.49v13.49h-13.49ZM244.32 175.87h13.49v13.49h-13.49ZM244.32 202.85h13.49v13.49h-13.49ZM244.32 229.83h13.49v13.49h-13.49ZM244.32 256.81h13.49v13.49h-13.49ZM244.32 283.79h13.49v13.49h-13.49ZM244.32 310.77h13.49v13.49h-13.49ZM244.32 337.75h13.49v13.49h-13.49ZM244.32 364.73h13.49v13.49h-13.49ZM244.32 391.71h13.49v13.49h-13.49ZM257.81 -26.48h13.49v13.49h-13.49ZM257.81 0.50h13.49v13.49h-13.49ZM257.81 27.48h13.49v13.49h-13.49ZM257.81 54.46h13.49v13.49h-13.49ZM257.81 81.44h13.49v13.49h-13.49ZM257.81 108.42h13.49v13.49h-13.49ZM257.81 135.40h13.49v13.49h-13.49ZM257.81 162.38h13.49v13.49h-13.49ZM257.81 189.36h13.49v13.49h-13.49ZM257.81 216.34h13.49v13.49h-13.49ZM257.81 243.32h13.49v13.49h-13.49ZM257.81 270.30h13.49v13.49h-13.49ZM257.81 297.28h13.49v13.49h-13.49ZM257.81 324.26h13.49v13.49h-13.49ZM257.81 351.24h13.49v13.49h-13.49ZM257.81 378.22h13.49v13.49h-13.49ZM257.81 405.20h13.49v13.49h-13.49ZM271.30 -12.99h13.49v13.49h-13.49ZM271.30 13.99h13.49v13.49h-13.49ZM271.30 40.97h13.49v13.49h-13.49ZM271.30 67.95h13.49v13.49h-13.49ZM271.30 94.93h13.49v13.49h-13.49ZM271.30 121.91h13.49v13.49h-13.49ZM271.30 148.89h13.49v13.49h-13.49ZM271.30 175.87h13.49v13.49h-13.49ZM271.30 202.85h13.49v13.49h-13.49ZM271.30 229.83h13.49v13.49h-13.49ZM271.30 256.81h13.49v13.49h-13.49ZM271.30 283.79h13.49v13.49h-13.49ZM271.30 310.77h13.49v13.49h-13.49ZM271.30 337.75h13.49v13.49h-13.49ZM271.30 364.73h13.49v13.49h-13.49ZM271.30 391.71h13.49v13.49h-13.49ZM284.79 -26.48h13.49v13.49h-13.49ZM284.79 0.50h13.49v13.49h-13.49ZM284.79 27.48h13.49v13.49h-13.49ZM284.79 54.46h13.49v13.49h-13.49ZM284.79 81.44h13.49v13.49h-13.49ZM284.79 108.42h13.49v13.49h-13.49ZM284.79 135.40h13.49v13.49h-13.49ZM284.79 162.38h13.49v13.49h-13.49ZM284.79 189.36h13.49v13.49h-13.49ZM284.79 216.34h13.49v13.49h-13.49ZM284.79 243.32h13.49v13.49h-13.49ZM284.79 270.30h13.49v13.49h-13.49ZM284.79 297.28h13.49v13.49h-13.49ZM284.79 324.26h13.49v13.49h-13.49ZM284.79 351.24h13.49v13.49h-13.49ZM284.79 378.22h13.49v13.49h-13.49ZM284.79 405.20h13.49v13.49h-13.49ZM298.28 -12.99h13.49v13.49h-13.49ZM298.28 13.99h13.49v13.49h-13.49ZM298.28 40.97h13.49v13.49h-13.49ZM298.28 67.95h13.49v13.49h-13.49ZM298.28 94.93h13.49v13.49h-13.49ZM298.28 121.91h13.49v13.49h-13.49ZM298.28 148.89h13.49v13.49h-13.49ZM298.28 175.87h13.49v13.49h-13.49ZM298.28 202.85h13.49v13.49h-13.49ZM298.28 229.83h13.49v13.49h-13.49ZM298.28 256.81h13.49v13.49h-13.49ZM298.28 283.79h13.49v13.49h-13.49ZM298.28 310.77h13.49v13.49h-13.49ZM298.28 337.75h13.49v13.49h-13.49ZM298.28 364.73h13.49v13.49h-13.49ZM298.28 391.71h13.49v13.49h-13.49ZM311.77 -26.48h13.49v13.49h-13.49ZM311.77 0.50h13.49v13.49h-13.49ZM311.77 27.48h13.49v13.49h-13.49ZM311.77 54.46h13.49v13.49h-13.49ZM311.77 81.44h13.49v13.49h-13.49ZM311.77 108.42h13.49v13.49h-13.49ZM311.77 135.40h13.49v13.49h-13.49ZM311.77 162.38h13.49v13.49h-13.49ZM311.77 189.36h13.49v13.49h-13.49ZM311.77 216.34h13.49v13.49h-13.49ZM311.77 243.32h13.49v13.49h-13.49ZM311.77 270.30h13.49v13.49h-13.49ZM311.77 297.28h13.49v13.49h-13.49ZM311.77 324.26h13.49v13.49h-13.49ZM311.77 351.24h13.49v13.49h-13.49ZM311.77 378.22h13.49v13.49h-13.49ZM311.77 405.20h13.49v13.49h-13.49ZM325.26 -12.99h13.49v13.49h-13.49ZM325.26 13.99h13.49v13.49h-13.49ZM325.26 40.97h13.49v13.49h-13.49ZM325.26 67.95h13.49v13.49h-13.49ZM325.26 94.93h13.49v13.49h-13.49ZM325.26 121.91h13.49v13.49h-13.49ZM325.26 148.89h13.49v13.49h-13.49ZM325.26 175.87h13.49v13.49h-13.49ZM325.26 202.85h13.49v13.49h-13.49ZM325.26 229.83h13.49v13.49h-13.49ZM325.26 256.81h13.49v13.49h-13.49ZM325.26 283.79h13.49v13.49h-13.49ZM325.26 310.77h13.49v13.49h-13.49ZM325.26 337.75h13.49v13.49h-13.49ZM325.26 364.73h13.49v13.49h-13.49ZM325.26 391.71h13.49v13.49h-13.49ZM338.75 -26.48h13.49v13.49h-13.49ZM338.75 0.50h13.49v13.49h-13.49ZM338.75 27.48h13.49v13.49h-13.49ZM338.75 54.46h13.49v13.49h-13.49ZM338.75 81.44h13.49v13.49h-13.49ZM338.75 108.42h13.49v13.49h-13.49ZM338.75 135.40h13.49v13.49h-13.49ZM338.75 162.38h13.49v13.49h-13.49ZM338.75 189.36h13.49v13.49h-13.49ZM338.75 216.34h13.49v13.49h-13.49ZM338.75 243.32h13.49v13.49h-13.49ZM338.75 270.30h13.49v13.49h-13.49ZM338.75 297.28h13.49v13.49h-13.49ZM338.75 324.26h13.49v13.49h-13.49ZM338.75 351.24h13.49v13.49h-13.49ZM338.75 378.22h13.49v13.49h-13.49ZM338.75 405.20h13.49v13.49h-13.49ZM352.24 -12.99h13.49v13.49h-13.49ZM352.24 13.99h13.49v13.49h-13.49ZM352.24 40.97h13.49v13.49h-13.49ZM352.24 67.95h13.49v13.49h-13.49ZM352.24 94.93h13.49v13.49h-13.49ZM352.24 121.91h13.49v13.49h-13.49ZM352.24 148.89h13.49v13.49h-13.49ZM352.24 175.87h13.49v13.49h-13.49ZM352.24 202.85h13.49v13.49h-13.49ZM352.24 229.83h13.49v13.49h-13.49ZM352.24 256.81h13.49v13.49h-13.49ZM352.24 283.79h13.49v13.49h-13.49ZM352.24 310.77h13.49v13.49h-13.49ZM352.24 337.75h13.49v13.49h-13.49ZM352.24 364.73h13.49v13.49h-13.49ZM352.24 391.71h13.49v13.49h-13.49ZM365.73 -26.48h13.49v13.49h-13.49ZM365.73 0.50h13.49v13.49h-13.49ZM365.73 27.48h13.49v13.49h-13.49ZM365.73 54.46h13.49v13.49h-13.49ZM365.73 81.44h13.49v13.49h-13.49ZM365.73 108.42h13.49v13.49h-13.49ZM365.73 135.40h13.49v13.49h-13.49ZM365.73 162.38h13.49v13.49h-13.49ZM365.73 189.36h13.49v13.49h-13.49ZM365.73 216.34h13.49v13.49h-13.49ZM365.73 243.32h13.49v13.49h-13.49ZM365.73 270.30h13.49v13.49h-13.49ZM365.73 297.28h13.49v13.49h-13.49ZM365.73 324.26h13.49v13.49h-13.49ZM365.73 351.24h13.49v13.49h-13.49ZM365.73 378.22h13.49v13.49h-13.49ZM365.73 405.20h13.49v13.49h-13.49ZM379.22 -12.99h13.49v13.49h-13.49ZM379.22 13.99h13.49v13.49h-13.49ZM379.22 40.97h13.49v13.49h-13.49ZM379.22 67.95h13.49v13.49h-13.49ZM379.22 94.93h13.49v13.49h-13.49ZM379.22 121.91h13.49v13.49h-13.49ZM379.22 148.89h13.49v13.49h-13.49ZM379.22 175.87h13.49v13.49h-13.49ZM379.22 202.85h13.49v13.49h-13.49ZM379.22 229.83h13.49v13.49h-13.49ZM379.22 256.81h13.49v13.49h-13.49ZM379.22 283.79h13.49v13.49h-13.49ZM379.22 310.77h13.49v13.49h-13.49ZM379.22 337.75h13.49v13.49h-13.49ZM379.22 364.73h13.49v13.49h-13.49ZM379.22 391.71h13.49v13.49h-13.49ZM392.71 -26.48h13.49v13.49h-13.49ZM392.71 0.50h13.49v13.49h-13.49ZM392.71 27.48h13.49v13.49h-13.49ZM392.71 54.46h13.49v13.49h-13.49ZM392.71 81.44h13.49v13.49h-13.49ZM392.71 108.42h13.49v13.49h-13.49ZM392.71 135.40h13.49v13.49h-13.49ZM392.71 162.38h13.49v13.49h-13.49ZM392.71 189.36h13.49v13.49h-13.49ZM392.71 216.34h13.49v13.49h-13.49ZM392.71 243.32h13.49v13.49h-13.49ZM392.71 270.30h13.49v13.49h-13.49ZM392.71 297.28h13.49v13.49h-13.49ZM392.71 324.26h13.49v13.49h-13.49ZM392.71 351.24h13.49v13.49h-13.49ZM392.71 378.22h13.49v13.49h-13.49ZM392.71 405.20h13.49v13.49h-13.49ZM406.20 -12.99h13.49v13.49h-13.49ZM406.20 13.99h13.49v13.49h-13.49ZM406.20 40.97h13.49v13.49h-13.49ZM406.20 67.95h13.49v13.49h-13.49ZM406.20 94.93h13.49v13.49h-13.49ZM406.20 121.91h13.49v13.49h-13.49ZM406.20 148.89h13.49v13.49h-13.49ZM406.20 175.87h13.49v13.49h-13.49ZM406.20 202.85h13.49v13.49h-13.49ZM406.20 229.83h13.49v13.49h-13.49ZM406.20 256.81h13.49v13.49h-13.49ZM406.20 283.79h13.49v13.49h-13.49ZM406.20 310.77h13.49v13.49h-13.49ZM406.20 337.75h13.49v13.49h-13.49ZM406.20 364.73h13.49v13.49h-13.49ZM406.20 391.71h13.49v13.49h-13.49ZM419.69 -26.48h13.49v13.49h-13.49ZM419.69 0.50h13.49v13.49h-13.49ZM419.69 27.48h13.49v13.49h-13.49ZM419.69 54.46h13.49v13.49h-13.49ZM419.69 81.44h13.49v13.49h-13.49ZM419.69 108.42h13.49v13.49h-13.49ZM419.69 135.40h13.49v13.49h-13.49ZM419.69 162.38h13.49v13.49h-13.49ZM419.69 189.36h13.49v13.49h-13.49ZM419.69 216.34h13.49v13.49h-13.49ZM419.69 243.32h13.49v13.49h-13.49ZM419.69 270.30h13.49v13.49h-13.49ZM419.69 297.28h13.49v13.49h-13.49ZM419.69 324.26h13.49v13.49h-13.49ZM419.69 351.24h13.49v13.49h-13.49ZM419.69 378.22h13.49v13.49h-13.49ZM419.69 405.20h13.49v13.49h-13.49ZM433.18 -12.99h13.49v13.49h-13.49ZM433.18 13.99h13.49v13.49h-13.49ZM433.18 40.97h13.49v13.49h-13.49ZM433.18 67.95h13.49v13.49h-13.49ZM433.18 94.93h13.49v13.49h-13.49ZM433.18 121.91h13.49v13.49h-13.49ZM433.18 148.89h13.49v13.49h-13.49ZM433.18 175.87h13.49v13.49h-13.49ZM433.18 202.85h13.49v13.49h-13.49ZM433.18 229.83h13.49v13.49h-13.49ZM433.18 256.81h13.49v13.49h-13.49ZM433.18 283.79h13.49v13.49h-13.49ZM433.18 310.77h13.49v13.49h-13.49ZM433.18 337.75h13.49v13.49h-13.49ZM433.18 364.73h13.49v13.49h-13.49ZM433.18 391.71h13.49v13.49h-13.49ZM446.67 -26.48h13.49v13.49h-13.49ZM446.67 0.50h13.49v13.49h-13.49ZM446.67 27.48h13.49v13.49h-13.49ZM446.67 54.46h13.49v13.49h-13.49ZM446.67 81.44h13.49v13.49h-13.49ZM446.67 108.42h13.49v13.49h-13.49ZM446.67 135.40h13.49v13.49h-13.49ZM446.67 162.38h13.49v13.49h-13.49ZM446.67 189.36h13.49v13.49h-13.49ZM446.67 216.34h13.49v13.49h-13.49ZM446.67 243.32h13.49v13.49h-13.49ZM446.67 270.30h13.49v13.49h-13.49ZM446.67 297.28h13.49v13.49h-13.49ZM446.67 324.26h13.49v13.49h-13.49ZM446.67 351.24h13.49v13.49h-13.49ZM446.67 378.22h13.49v13.49h-13.49ZM446.67 405.20h13.49v13.49h-13.49ZM460.16 -12.99h13.49v13.49h-13.49ZM460.16 13.99h13.49v13.49h-13.49ZM460.16 40.97h13.49v13.49h-13.49ZM460.16 67.95h13.49v13.49h-13.49ZM460.16 94.93h13.49v13.49h-13.49ZM460.16 121.91h13.49v13.49h-13.49ZM460.16 148.89h13.49v13.49h-13.49ZM460.16 175.87h13.49v13.49h-13.49ZM460.16 202.85h13.49v13.49h-13.49ZM460.16 229.83h13.49v13.49h-13.49ZM460.16 256.81h13.49v13.49h-13.49ZM460.16 283.79h13.49v13.49h-13.49ZM460.16 310.77h13.49v13.49h-13.49ZM460.16 337.75h13.49v13.49h-13.49ZM460.16 364.73h13.49v13.49h-13.49ZM460.16 391.71h13.49v13.49h-13.49ZM473.65 -26.48h13.49v13.49h-13.49ZM473.65 0.50h13.49v13.49h-13.49ZM473.65 27.48h13.49v13.49h-13.49ZM473.65 54.46h13.49v13.49h-13.49ZM473.65 81.44h13.49v13.49h-13.49ZM473.65 108.42h13.49v13.49h-13.49ZM473.65 135.40h13.49v13.49h-13.49ZM473.65 162.38h13.49v13.49h-13.49ZM473.65 189.36h13.49v13.49h-13.49ZM473.65 216.34h13.49v13.49h-13.49ZM473.65 243.32h13.49v13.49h-13.49ZM473.65 270.30h13.49v13.49h-13.49ZM473.65 297.28h13.49v13.49h-13.49ZM473.65 324.26h13.49v13.49h-13.49ZM473.65 351.24h13.49v13.49h-13.49ZM473.65 378.22h13.49v13.49h-13.49ZM473.65 405.20h13.49v13.49h-13.49ZM487.14 -12.99h13.49v13.49h-13.49ZM487.14 13.99h13.49v13.49h-13.49ZM487.14 40.97h13.49v13.49h-13.49ZM487.14 67.95h13.49v13.49h-13.49ZM487.14 94.93h13.49v13.49h-13.49ZM487.14 121.91h13.49v13.49h-13.49ZM487.14 148.89h13.49v13.49h-13.49ZM487.14 175.87h13.49v13.49h-13.49ZM487.14 202.85h13.49v13.49h-13.49ZM487.14 229.83h13.49v13.49h-13.49ZM487.14 256.81h13.49v13.49h-13.49ZM487.14 283.79h13.49v13.49h-13.49ZM487.14 310.77h13.49v13.49h-13.49ZM487.14 337.75h13.49v13.49h-13.49ZM487.14 364.73h13.49v13.49h-13.49ZM487.14 391.71h13.49v13.49h-13.49ZM500.63 -26.48h13.49v13.49h-13.49ZM500.63 0.50h13.49v13.49h-13.49ZM500.63 27.48h13.49v13.49h-13.49ZM500.63 54.46h13.49v13.49h-13.49ZM500.63 81.44h13.49v13.49h-13.49ZM500.63 108.42h13.49v13.49h-13.49ZM500.63 135.40h13.49v13.49h-13.49ZM500.63 162.38h13.49v13.49h-13.49ZM500.63 189.36h13.49v13.49h-13.49ZM500.63 216.34h13.49v13.49h-13.49ZM500.63 243.32h13.49v13.49h-13.49ZM500.63 270.30h13.49v13.49h-13.49ZM500.63 297.28h13.49v13.49h-13.49ZM500.63 324.26h13.49v13.49h-13.49ZM500.63 351.24h13.49v13.49h-13.49ZM500.63 378.22h13.49v13.49h-13.49ZM500.63 405.20h13.49v13.49h-13.49ZM514.12 -12.99h13.49v13.49h-13.49ZM514.12 13.99h13.49v13.49h-13.49ZM514.12 40.97h13.49v13.49h-13.49ZM514.12 67.95h13.49v13.49h-13.49ZM514.12 94.93h13.49v13.49h-13.49ZM514.12 121.91h13.49v13.49h-13.49ZM514.12 148.89h13.49v13.49h-13.49ZM514.12 175.87h13.49v13.49h-13.49ZM514.12 202.85h13.49v13.49h-13.49ZM514.12 229.83h13.49v13.49h-13.49ZM514.12 256.81h13.49v13.49h-13.49ZM514.12 283.79h13.49v13.49h-13.49ZM514.12 310.77h13.49v13.49h-13.49ZM514.12 337.75h13.49v13.49h-13.49ZM514.12 364.73h13.49v13.49h-13.49ZM514.12 391.71h13.49v13.49h-13.49ZM527.61 -26.48h13.49v13.49h-13.49ZM527.61 0.50h13.49v13.49h-13.49ZM527.61 27.48h13.49v13.49h-13.49ZM527.61 54.46h13.49v13.49h-13.49ZM527.61 81.44h13.49v13.49h-13.49ZM527.61 108.42h13.49v13.49h-13.49ZM527.61 135.40h13.49v13.49h-13.49ZM527.61 162.38h13.49v13.49h-13.49ZM527.61 189.36h13.49v13.49h-13.49ZM527.61 216.34h13.49v13.49h-13.49ZM527.61 243.32h13.49v13.49h-13.49ZM527.61 270.30h13.49v13.49h-13.49ZM527.61 297.28h13.49v13.49h-13.49ZM527.61 324.26h13.49v13.49h-13.49ZM527.61 351.24h13.49v13.49h-13.49ZM527.61 378.22h13.49v13.49h-13.49ZM527.61 405.20h13.49v13.49h-13.49ZM541.10 -12.99h13.49v13.49h-13.49ZM541.10 13.99h13.49v13.49h-13.49ZM541.10 40.97h13.49v13.49h-13.49ZM541.10 67.95h13.49v13.49h-13.49ZM541.10 94.93h13.49v13.49h-13.49ZM541.10 121.91h13.49v13.49h-13.49ZM541.10 148.89h13.49v13.49h-13.49ZM541.10 175.87h13.49v13.49h-13.49ZM541.10 202.85h13.49v13.49h-13.49ZM541.10 229.83h13.49v13.49h-13.49ZM541.10 256.81h13.49v13.49h-13.49ZM541.10 283.79h13.49v13.49h-13.49ZM541.10 310.77h13.49v13.49h-13.49ZM541.10 337.75h13.49v13.49h-13.49ZM541.10 364.73h13.49v13.49h-13.49ZM541.10 391.71h13.49v13.49h-13.49ZM554.59 -26.48h13.49v13.49h-13.49ZM554.59 0.50h13.49v13.49h-13.49ZM554.59 27.48h13.49v13.49h-13.49ZM554.59 54.46h13.49v13.49h-13.49ZM554.59 81.44h13.49v13.49h-13.49ZM554.59 108.42h13.49v13.49h-13.49ZM554.59 135.40h13.49v13.49h-13.49ZM554.59 162.38h13.49v13.49h-13.49ZM554.59 189.36h13.49v13.49h-13.49ZM554.59 216.34h13.49v13.49h-13.49ZM554.59 243.32h13.49v13.49h-13.49ZM554.59 270.30h13.49v13.49h-13.49ZM554.59 297.28h13.49v13.49h-13.49ZM554.59 324.26h13.49v13.49h-13.49ZM554.59 351.24h13.49v13.49h-13.49ZM554.59 378.22h13.49v13.49h-13.49ZM554.59 405.20h13.49v13.49h-13.49ZM568.08 -12.99h13.49v13.49h-13.49ZM568.08 13.99h13.49v13.49h-13.49ZM568.08 40.97h13.49v13.49h-13.49ZM568.08 67.95h13.49v13.49h-13.49ZM568.08 94.93h13.49v13.49h-13.49ZM568.08 121.91h13.49v13.49h-13.49ZM568.08 148.89h13.49v13.49h-13.49ZM568.08 175.87h13.49v13.49h-13.49ZM568.08 202.85h13.49v13.49h-13.49ZM568.08 229.83h13.49v13.49h-13.49ZM568.08 256.81h13.49v13.49h-13.49ZM568.08 283.79h13.49v13.49h-13.49ZM568.08 310.77h13.49v13.49h-13.49ZM568.08 337.75h13.49v13.49h-13.49ZM568.08 364.73h13.49v13.49h-13.49ZM568.08 391.71h13.49v13.49h-13.49ZM581.57 -26.48h13.49v13.49h-13.49ZM581.57 0.50h13.49v13.49h-13.49ZM581.57 27.48h13.49v13.49h-13.49ZM581.57 54.46h13.49v13.49h-13.49ZM581.57 81.44h13.49v13.49h-13.49ZM581.57 108.42h13.49v13.49h-13.49ZM581.57 135.40h13.49v13.49h-13.49ZM581.57 162.38h13.49v13.49h-13.49ZM581.57 189.36h13.49v13.49h-13.49ZM581.57 216.34h13.49v13.49h-13.49ZM581.57 243.32h13.49v13.49h-13.49ZM581.57 270.30h13.49v13.49h-13.49ZM581.57 297.28h13.49v13.49h-13.49ZM581.57 324.26h13.49v13.49h-13.49ZM581.57 351.24h13.49v13.49h-13.49ZM581.57 378.22h13.49v13.49h-13.49ZM581.57 405.20h13.49v13.49h-13.49ZM595.06 -12.99h13.49v13.49h-13.49ZM595.06 13.99h13.49v13.49h-13.49ZM595.06 40.97h13.49v13.49h-13.49ZM595.06 67.95h13.49v13.49h-13.49ZM595.06 94.93h13.49v13.49h-13.49ZM595.06 121.91h13.49v13.49h-13.49ZM595.06 148.89h13.49v13.49h-13.49ZM595.06 175.87h13.49v13.49h-13.49ZM595.06 202.85h13.49v13.49h-13.49ZM595.06 229.83h13.49v13.49h-13.49ZM595.06 256.81h13.49v13.49h-13.49ZM595.06 283.79h13.49v13.49h-13.49ZM595.06 310.77h13.49v13.49h-13.49ZM595.06 337.75h13.49v13.49h-13.49ZM595.06 364.73h13.49v13.49h-13.49ZM595.06 391.71h13.49v13.49h-13.49ZM608.55 -26.48h13.49v13.49h-13.49ZM608.55 0.50h13.49v13.49h-13.49ZM608.55 27.48h13.49v13.49h-13.49ZM608.55 54.46h13.49v13.49h-13.49ZM608.55 81.44h13.49v13.49h-13.49ZM608.55 108.42h13.49v13.49h-13.49ZM608.55 135.40h13.49v13.49h-13.49ZM608.55 162.38h13.49v13.49h-13.49ZM608.55 189.36h13.49v13.49h-13.49ZM608.55 216.34h13.49v13.49h-13.49ZM608.55 243.32h13.49v13.49h-13.49ZM608.55 270.30h13.49v13.49h-13.49ZM608.55 297.28h13.49v13.49h-13.49ZM608.55 324.26h13.49v13.49h-13.49ZM608.55 351.24h13.49v13.49h-13.49ZM608.55 378.22h13.49v13.49h-13.49ZM608.55 405.20h13.49v13.49h-13.49ZM622.04 -12.99h13.49v13.49h-13.49ZM622.04 13.99h13.49v13.49h-13.49ZM622.04 40.97h13.49v13.49h-13.49ZM622.04 67.95h13.49v13.49h-13.49ZM622.04 94.93h13.49v13.49h-13.49ZM622.04 121.91h13.49v13.49h-13.49ZM622.04 148.89h13.49v13.49h-13.49ZM622.04 175.87h13.49v13.49h-13.49ZM622.04 202.85h13.49v13.49h-13.49ZM622.04 229.83h13.49v13.49h-13.49ZM622.04 256.81h13.49v13.49h-13.49ZM622.04 283.79h13.49v13.49h-13.49ZM622.04 310.77h13.49v13.49h-13.49ZM622.04 337.75h13.49v13.49h-13.49ZM622.04 364.73h13.49v13.49h-13.49ZM622.04 391.71h13.49v13.49h-13.49ZM635.53 -26.48h13.49v13.49h-13.49ZM635.53 0.50h13.49v13.49h-13.49ZM635.53 27.48h13.49v13.49h-13.49ZM635.53 54.46h13.49v13.49h-13.49ZM635.53 81.44h13.49v13.49h-13.49ZM635.53 108.42h13.49v13.49h-13.49ZM635.53 135.40h13.49v13.49h-13.49ZM635.53 162.38h13.49v13.49h-13.49ZM635.53 189.36h13.49v13.49h-13.49ZM635.53 216.34h13.49v13.49h-13.49ZM635.53 243.32h13.49v13.49h-13.49ZM635.53 270.30h13.49v13.49h-13.49ZM635.53 297.28h13.49v13.49h-13.49ZM635.53 324.26h13.49v13.49h-13.49ZM635.53 351.24h13.49v13.49h-13.49ZM635.53 378.22h13.49v13.49h-13.49ZM635.53 405.20h13.49v13.49h-13.49ZM649.02 -12.99h13.49v13.49h-13.49ZM649.02 13.99h13.49v13.49h-13.49ZM649.02 40.97h13.49v13.49h-13.49ZM649.02 67.95h13.49v13.49h-13.49ZM649.02 94.93h13.49v13.49h-13.49ZM649.02 121.91h13.49v13.49h-13.49ZM649.02 148.89h13.49v13.49h-13.49ZM649.02 175.87h13.49v13.49h-13.49ZM649.02 202.85h13.49v13.49h-13.49ZM649.02 229.83h13.49v13.49h-13.49ZM649.02 256.81h13.49v13.49h-13.49ZM649.02 283.79h13.49v13.49h-13.49ZM649.02 310.77h13.49v13.49h-13.49ZM649.02 337.75h13.49v13.49h-13.49ZM649.02 364.73h13.49v13.49h-13.49ZM649.02 391.71h13.49v13.49h-13.49ZM662.51 -26.48h13.49v13.49h-13.49ZM662.51 0.50h13.49v13.49h-13.49ZM662.51 27.48h13.49v13.49h-13.49ZM662.51 54.46h13.49v13.49h-13.49ZM662.51 81.44h13.49v13.49h-13.49ZM662.51 108.42h13.49v13.49h-13.49ZM662.51 135.40h13.49v13.49h-13.49ZM662.51 162.38h13.49v13.49h-13.49ZM662.51 189.36h13.49v13.49h-13.49ZM662.51 216.34h13.49v13.49h-13.49ZM662.51 243.32h13.49v13.49h-13.49ZM662.51 270.30h13.49v13.49h-13.49ZM662.51 297.28h13.49v13.49h-13.49ZM662.51 324.26h13.49v13.49h-13.49ZM662.51 351.24h13.49v13.49h-13.49ZM662.51 378.22h13.49v13.49h-13.49ZM662.51 405.20h13.49v13.49h-13.49ZM676.00 -12.99h13.49v13.49h-13.49ZM676.00 13.99h13.49v13.49h-13.49ZM676.00 40.97h13.49v13.49h-13.49ZM676.00 67.95h13.49v13.49h-13.49ZM676.00 94.93h13.49v13.49h-13.49ZM676.00 121.91h13.49v13.49h-13.49ZM676.00 148.89h13.49v13.49h-13.49ZM676.00 175.87h13.49v13.49h-13.49ZM676.00 202.85h13.49v13.49h-13.49ZM676.00 229.83h13.49v13.49h-13.49ZM676.00 256.81h13.49v13.49h-13.49ZM676.00 283.79h13.49v13.49h-13.49ZM676.00 310.77h13.49v13.49h-13.49ZM676.00 337.75h13.49v13.49h-13.49ZM676.00 364.73h13.49v13.49h-13.49ZM676.00 391.71h13.49v13.49h-13.49ZM689.49 -26.48h13.49v13.49h-13.49ZM689.49 0.50h13.49v13.49h-13.49ZM689.49 27.48h13.49v13.49h-13.49ZM689.49 54.46h13.49v13.49h-13.49ZM689.49 81.44h13.49v13.49h-13.49ZM689.49 108.42h13.49v13.49h-13.49ZM689.49 135.40h13.49v13.49h-13.49ZM689.49 162.38h13.49v13.49h-13.49ZM689.49 189.36h13.49v13.49h-13.49ZM689.49 216.34h13.49v13.49h-13.49ZM689.49 243.32h13.49v13.49h-13.49ZM689.49 270.30h13.49v13.49h-13.49ZM689.49 297.28h13.49v13.49h-13.49ZM689.49 324.26h13.49v13.49h-13.49ZM689.49 351.24h13.49v13.49h-13.49ZM689.49 378.22h13.49v13.49h-13.49ZM689.49 405.20h13.49v13.49h-13.49ZM702.98 -12.99h13.49v13.49h-13.49ZM702.98 13.99h13.49v13.49h-13.49ZM702.98 40.97h13.49v13.49h-13.49ZM702.98 67.95h13.49v13.49h-13.49ZM702.98 94.93h13.49v13.49h-13.49ZM702.98 121.91h13.49v13.49h-13.49ZM702.98 148.89h13.49v13.49h-13.49ZM702.98 175.87h13.49v13.49h-13.49ZM702.98 202.85h13.49v13.49h-13.49ZM702.98 229.83h13.49v13.49h-13.49ZM702.98 256.81h13.49v13.49h-13.49ZM702.98 283.79h13.49v13.49h-13.49ZM702.98 310.77h13.49v13.49h-13.49ZM702.98 337.75h13.49v13.49h-13.49ZM702.98 364.73h13.49v13.49h-13.49ZM702.98 391.71h13.49v13.49h-13.49ZM716.47 -26.48h13.49v13.49h-13.49ZM716.47 0.50h13.49v13.49h-13.49ZM716.47 27.48h13.49v13.49h-13.49ZM716.47 54.46h13.49v13.49h-13.49ZM716.47 81.44h13.49v13.49h-13.49ZM716.47 108.42h13.49v13.49h-13.49ZM716.47 135.40h13.49v13.49h-13.49ZM716.47 162.38h13.49v13.49h-13.49ZM716.47 189.36h13.49v13.49h-13.49ZM716.47 216.34h13.49v13.49h-13.49ZM716.47 243.32h13.49v13.49h-13.49ZM716.47 270.30h13.49v13.49h-13.49ZM716.47 297.28h13.49v13.49h-13.49ZM716.47 324.26h13.49v13.49h-13.49ZM716.47 351.24h13.49v13.49h-13.49ZM716.47 378.22h13.49v13.49h-13.49ZM716.47 405.20h13.49v13.49h-13.49ZM729.96 -12.99h13.49v13.49h-13.49ZM729.96 13.99h13.49v13.49h-13.49ZM729.96 40.97h13.49v13.49h-13.49ZM729.96 67.95h13.49v13.49h-13.49ZM729.96 94.93h13.49v13.49h-13.49ZM729.96 121.91h13.49v13.49h-13.49ZM729.96 148.89h13.49v13.49h-13.49ZM729.96 175.87h13.49v13.49h-13.49ZM729.96 202.85h13.49v13.49h-13.49ZM729.96 229.83h13.49v13.49h-13.49ZM729.96 256.81h13.49v13.49h-13.49ZM729.96 283.79h13.49v13.49h-13.49ZM729.96 310.77h13.49v13.49h-13.49ZM729.96 337.75h13.49v13.49h-13.49ZM729.96 364.73h13.49v13.49h-13.49ZM729.96 391.71h13.49v13.49h-13.49ZM743.45 -26.48h13.49v13.49h-13.49ZM743.45 0.50h13.49v13.49h-13.49ZM743.45 27.48h13.49v13.49h-13.49ZM743.45 54.46h13.49v13.49h-13.49ZM743.45 81.44h13.49v13.49h-13.49ZM743.45 108.42h13.49v13.49h-13.49ZM743.45 135.40h13.49v13.49h-13.49ZM743.45 162.38h13.49v13.49h-13.49ZM743.45 189.36h13.49v13.49h-13.49ZM743.45 216.34h13.49v13.49h-13.49ZM743.45 243.32h13.49v13.49h-13.49ZM743.45 270.30h13.49v13.49h-13.49ZM743.45 297.28h13.49v13.49h-13.49ZM743.45 324.26h13.49v13.49h-13.49ZM743.45 351.24h13.49v13.49h-13.49ZM743.45 378.22h13.49v13.49h-13.49ZM743.45 405.20h13.49v13.49h-13.49ZM756.94 -12.99h13.49v13.49h-13.49ZM756.94 13.99h13.49v13.49h-13.49ZM756.94 40.97h13.49v13.49h-13.49ZM756.94 67.95h13.49v13.49h-13.49ZM756.94 94.93h13.49v13.49h-13.49ZM756.94 121.91h13.49v13.49h-13.49ZM756.94 148.89h13.49v13.49h-13.49ZM756.94 175.87h13.49v13.49h-13.49ZM756.94 202.85h13.49v13.49h-13.49ZM756.94 229.83h13.49v13.49h-13.49ZM756.94 256.81h13.49v13.49h-13.49ZM756.94 283.79h13.49v13.49h-13.49ZM756.94 310.77h13.49v13.49h-13.49ZM756.94 337.75h13.49v13.49h-13.49ZM756.94 364.73h13.49v13.49h-13.49ZM756.94 391.71h13.49v13.49h-13.49ZM770.43 -26.48h13.49v13.49h-13.49ZM770.43 0.50h13.49v13.49h-13.49ZM770.43 27.48h13.49v13.49h-13.49ZM770.43 54.46h13.49v13.49h-13.49ZM770.43 81.44h13.49v13.49h-13.49ZM770.43 108.42h13.49v13.49h-13.49ZM770.43 135.40h13.49v13.49h-13.49ZM770.43 162.38h13.49v13.49h-13.49ZM770.43 189.36h13.49v13.49h-13.49ZM770.43 216.34h13.49v13.49h-13.49ZM770.43 243.32h13.49v13.49h-13.49ZM770.43 270.30h13.49v13.49h-13.49ZM770.43 297.28h13.49v13.49h-13.49ZM770.43 324.26h13.49v13.49h-13.49ZM770.43 351.24h13.49v13.49h-13.49ZM770.43 378.22h13.49v13.49h-13.49ZM770.43 405.20h13.49v13.49h-13.49Z" fill="#e3e3e3"/></svg><div style="position:absolute;left:0px;top:0px;width:772px;height:1px;background:#c8c8c8;"></div><div style="position:absolute;left:0px;top:0px;width:1px;height:416px;background:#c8c8c8;"></div><div style="position:absolute;left:183px;top:3px;width:417px;height:440px;border:1px solid #000;box-sizing:border-box;"></div><svg style="position:absolute;left:183px;top:3px;overflow:visible" width="414.7" height="414.7" viewBox="-0.054 -0.031 32 32"><path d="M11 3H20V4H11ZM10 4H11V5H10ZM20 4H21V5H20ZM10 5H11V6H10ZM13 5H21V6H13ZM9 6H14V7H9ZM20 6H22V7H20ZM9 7H10V8H9ZM21 7H22V8H21ZM9 8H10V9H9ZM15 8H16V9H15ZM18 8H19V9H18ZM21 8H22V9H21ZM9 9H10V10H9ZM15 9H16V10H15ZM18 9H19V10H18ZM21 9H22V10H21ZM9 10H10V11H9ZM15 10H16V11H15ZM18 10H19V11H18ZM21 10H22V11H21ZM6 11H11V12H6ZM21 11H22V12H21ZM5 12H21V13H5ZM4 13H6V14H4ZM8 13H10V14H8ZM20 13H21V14H20ZM4 14H5V15H4ZM6 14H8V15H6ZM9 14H10V15H9ZM15 14H21V15H15ZM4 15H5V16H4ZM6 15H7V16H6ZM9 15H10V16H9ZM13 15H15V16H13ZM20 15H21V16H20ZM4 16H5V17H4ZM6 16H7V17H6ZM9 16H11V17H9ZM12 16H13V17H12ZM20 16H21V17H20ZM4 17H5V18H4ZM6 17H7V18H6ZM9 17H10V18H9ZM11 17H12V18H11ZM20 17H21V18H20ZM4 18H5V19H4ZM6 18H7V19H6ZM9 18H10V19H9ZM11 18H12V19H11ZM20 18H21V19H20ZM4 19H5V20H4ZM6 19H7V20H6ZM9 19H10V20H9ZM11 19H12V20H11ZM20 19H21V20H20ZM4 20H5V21H4ZM6 20H8V21H6ZM9 20H11V21H9ZM16 20H21V21H16ZM4 21H6V22H4ZM7 21H8V22H7ZM9 21H11V22H9ZM20 21H21V22H20ZM5 22H11V23H5ZM20 22H21V23H20ZM7 23H11V24H7ZM20 23H21V24H20ZM10 24H11V25H10ZM14 24H17V25H14ZM20 24H21V25H20ZM10 25H11V26H10ZM14 25H15V26H14ZM16 25H17V26H16ZM20 25H21V26H20ZM10 26H11V27H10ZM14 26H15V27H14ZM16 26H17V27H16ZM20 26H21V27H20ZM10 27H11V28H10ZM14 27H15V28H14ZM16 27H17V28H16ZM20 27H21V28H20ZM10 28H11V29H10ZM14 28H15V29H14ZM16 28H17V29H16ZM20 28H21V29H20ZM10 29H15V30H10ZM16 29H21V30H16ZM11 4H20V5H11ZM11 5H13V6H11ZM14 6H20V7H14ZM10 7H14V8H10ZM16 7H17V8H16ZM19 7H21V8H19ZM10 8H15V9H10ZM16 8H18V9H16ZM19 8H21V9H19ZM10 9H15V10H10ZM16 9H18V10H16ZM19 9H21V10H19ZM10 10H15V11H10ZM16 10H18V11H16ZM19 10H21V11H19ZM11 11H21V12H11ZM14 7H16V8H14ZM17 7H19V8H17ZM6 13H8V14H6ZM5 14H6V15H5ZM8 14H9V15H8ZM5 15H6V16H5ZM7 15H9V16H7ZM5 16H6V17H5ZM7 16H9V17H7ZM5 17H6V18H5ZM7 17H9V18H7ZM5 18H6V19H5ZM7 18H9V19H7ZM5 19H6V20H5ZM7 19H9V20H7ZM5 20H6V21H5ZM8 20H9V21H8ZM6 21H7V22H6ZM8 21H9V22H8ZM10 13H20V14H10ZM10 14H15V15H10ZM10 15H13V16H10ZM11 16H12V17H11ZM15 15H20V16H15ZM13 16H20V17H13ZM10 17H11V18H10ZM12 17H20V18H12ZM10 18H11V19H10ZM12 18H20V19H12ZM10 19H11V20H10ZM12 19H20V20H12ZM11 20H16V21H11ZM11 21H20V22H11ZM11 22H20V23H11ZM11 23H20V24H11ZM11 24H14V25H11ZM17 24H20V25H17ZM11 25H14V26H11ZM17 25H20V26H17ZM11 26H14V27H11ZM17 26H20V27H17ZM11 27H14V28H11ZM17 27H20V28H17ZM11 28H14V29H11ZM17 28H20V29H17Z" fill="#000"/><path d="M11 4H20V5H11ZM11 5H13V6H11Z" fill="#323232"/><path d="M14 6H20V7H14ZM10 7H14V8H10ZM16 7H17V8H16ZM19 7H21V8H19ZM10 8H15V9H10ZM16 8H18V9H16ZM19 8H21V9H19ZM10 9H15V10H10ZM16 9H18V10H16ZM19 9H21V10H19ZM10 10H15V11H10ZM16 10H18V11H16ZM19 10H21V11H19ZM11 11H21V12H11Z" fill="#a68a74"/><path d="M14 7H16V8H14ZM17 7H19V8H17Z" fill="#0f0f0f"/><path d="M6 13H8V14H6ZM5 14H6V15H5ZM8 14H9V15H8ZM5 15H6V16H5ZM7 15H9V16H7ZM5 16H6V17H5ZM7 16H9V17H7ZM5 17H6V18H5ZM7 17H9V18H7ZM5 18H6V19H5ZM7 18H9V19H7ZM5 19H6V20H5ZM7 19H9V20H7ZM5 20H6V21H5ZM8 20H9V21H8ZM6 21H7V22H6ZM8 21H9V22H8Z" fill="#1f3fcc"/><path d="M10 13H20V14H10ZM10 14H15V15H10ZM10 15H13V16H10ZM11 16H12V17H11Z" fill="#0a1828"/><path d="M15 15H20V16H15ZM13 16H20V17H13ZM10 17H11V18H10ZM12 17H20V18H12ZM10 18H11V19H10ZM12 18H20V19H12ZM10 19H11V20H10ZM12 19H20V20H12ZM11 20H16V21H11Z" fill="#d20000"/><path d="M11 21H20V22H11ZM11 22H20V23H11ZM11 23H20V24H11ZM11 24H14V25H11ZM17 24H20V25H17ZM11 25H14V26H11ZM17 25H20V26H17ZM11 26H14V27H11ZM17 26H20V27H17ZM11 27H14V28H11ZM17 27H20V28H17ZM11 28H14V29H11ZM17 28H20V29H17Z" fill="#1a2870"/></svg></div><div style="position:absolute;left:1136px;top:102px;width:8px;height:626px;background:#cccccc;"></div><div style="position:absolute;left:335px;top:576px;width:801px;height:7px;background:#cccccc;"></div><div style="position:absolute;left:335px;top:583px;width:801px;height:23px;background:#2468a5;"></div><div style="position:absolute;left:436px;width:600px;text-align:center;top:588.60px;font-size:11.7px;line-height:1;color:#fff;white-space:pre;">Idle Frames (1)</div><svg style="position:absolute;left:365px;top:639px;overflow:visible" width="28.8" height="28.8" viewBox="0 0 32 32"><path d="M11 3H20V4H11ZM10 4H11V5H10ZM20 4H21V5H20ZM10 5H11V6H10ZM13 5H21V6H13ZM9 6H14V7H9ZM20 6H22V7H20ZM9 7H10V8H9ZM21 7H22V8H21ZM9 8H10V9H9ZM15 8H16V9H15ZM18 8H19V9H18ZM21 8H22V9H21ZM9 9H10V10H9ZM15 9H16V10H15ZM18 9H19V10H18ZM21 9H22V10H21ZM9 10H10V11H9ZM15 10H16V11H15ZM18 10H19V11H18ZM21 10H22V11H21ZM6 11H11V12H6ZM21 11H22V12H21ZM5 12H21V13H5ZM4 13H6V14H4ZM8 13H10V14H8ZM20 13H21V14H20ZM4 14H5V15H4ZM6 14H8V15H6ZM9 14H10V15H9ZM15 14H21V15H15ZM4 15H5V16H4ZM6 15H7V16H6ZM9 15H10V16H9ZM13 15H15V16H13ZM20 15H21V16H20ZM4 16H5V17H4ZM6 16H7V17H6ZM9 16H11V17H9ZM12 16H13V17H12ZM20 16H21V17H20ZM4 17H5V18H4ZM6 17H7V18H6ZM9 17H10V18H9ZM11 17H12V18H11ZM20 17H21V18H20ZM4 18H5V19H4ZM6 18H7V19H6ZM9 18H10V19H9ZM11 18H12V19H11ZM20 18H21V19H20ZM4 19H5V20H4ZM6 19H7V20H6ZM9 19H10V20H9ZM11 19H12V20H11ZM20 19H21V20H20ZM4 20H5V21H4ZM6 20H8V21H6ZM9 20H11V21H9ZM16 20H21V21H16ZM4 21H6V22H4ZM7 21H8V22H7ZM9 21H11V22H9ZM20 21H21V22H20ZM5 22H11V23H5ZM20 22H21V23H20ZM7 23H11V24H7ZM20 23H21V24H20ZM10 24H11V25H10ZM14 24H17V25H14ZM20 24H21V25H20ZM10 25H11V26H10ZM14 25H15V26H14ZM16 25H17V26H16ZM20 25H21V26H20ZM10 26H11V27H10ZM14 26H15V27H14ZM16 26H17V27H16ZM20 26H21V27H20ZM10 27H11V28H10ZM14 27H15V28H14ZM16 27H17V28H16ZM20 27H21V28H20ZM10 28H11V29H10ZM14 28H15V29H14ZM16 28H17V29H16ZM20 28H21V29H20ZM10 29H15V30H10ZM16 29H21V30H16ZM11 4H20V5H11ZM11 5H13V6H11ZM14 6H20V7H14ZM10 7H14V8H10ZM16 7H17V8H16ZM19 7H21V8H19ZM10 8H15V9H10ZM16 8H18V9H16ZM19 8H21V9H19ZM10 9H15V10H10ZM16 9H18V10H16ZM19 9H21V10H19ZM10 10H15V11H10ZM16 10H18V11H16ZM19 10H21V11H19ZM11 11H21V12H11ZM14 7H16V8H14ZM17 7H19V8H17ZM6 13H8V14H6ZM5 14H6V15H5ZM8 14H9V15H8ZM5 15H6V16H5ZM7 15H9V16H7ZM5 16H6V17H5ZM7 16H9V17H7ZM5 17H6V18H5ZM7 17H9V18H7ZM5 18H6V19H5ZM7 18H9V19H7ZM5 19H6V20H5ZM7 19H9V20H7ZM5 20H6V21H5ZM8 20H9V21H8ZM6 21H7V22H6ZM8 21H9V22H8ZM10 13H20V14H10ZM10 14H15V15H10ZM10 15H13V16H10ZM11 16H12V17H11ZM15 15H20V16H15ZM13 16H20V17H13ZM10 17H11V18H10ZM12 17H20V18H12ZM10 18H11V19H10ZM12 18H20V19H12ZM10 19H11V20H10ZM12 19H20V20H12ZM11 20H16V21H11ZM11 21H20V22H11ZM11 22H20V23H11ZM11 23H20V24H11ZM11 24H14V25H11ZM17 24H20V25H17ZM11 25H14V26H11ZM17 25H20V26H17ZM11 26H14V27H11ZM17 26H20V27H17ZM11 27H14V28H11ZM17 27H20V28H17ZM11 28H14V29H11ZM17 28H20V29H17Z" fill="#000"/><path d="M11 4H20V5H11ZM11 5H13V6H11Z" fill="#323232"/><path d="M14 6H20V7H14ZM10 7H14V8H10ZM16 7H17V8H16ZM19 7H21V8H19ZM10 8H15V9H10ZM16 8H18V9H16ZM19 8H21V9H19ZM10 9H15V10H10ZM16 9H18V10H16ZM19 9H21V10H19ZM10 10H15V11H10ZM16 10H18V11H16ZM19 10H21V11H19ZM11 11H21V12H11Z" fill="#a68a74"/><path d="M14 7H16V8H14ZM17 7H19V8H17Z" fill="#0f0f0f"/><path d="M6 13H8V14H6ZM5 14H6V15H5ZM8 14H9V15H8ZM5 15H6V16H5ZM7 15H9V16H7ZM5 16H6V17H5ZM7 16H9V17H7ZM5 17H6V18H5ZM7 17H9V18H7ZM5 18H6V19H5ZM7 18H9V19H7ZM5 19H6V20H5ZM7 19H9V20H7ZM5 20H6V21H5ZM8 20H9V21H8ZM6 21H7V22H6ZM8 21H9V22H8Z" fill="#1f3fcc"/><path d="M10 13H20V14H10ZM10 14H15V15H10ZM10 15H13V16H10ZM11 16H12V17H11Z" fill="#0a1828"/><path d="M15 15H20V16H15ZM13 16H20V17H13ZM10 17H11V18H10ZM12 17H20V18H12ZM10 18H11V19H10ZM12 18H20V19H12ZM10 19H11V20H10ZM12 19H20V20H12ZM11 20H16V21H11Z" fill="#d20000"/><path d="M11 21H20V22H11ZM11 22H20V23H11ZM11 23H20V24H11ZM11 24H14V25H11ZM17 24H20V25H17ZM11 25H14V26H11ZM17 25H20V26H17ZM11 26H14V27H11ZM17 26H20V27H17ZM11 27H14V28H11ZM17 27H20V28H17ZM11 28H14V29H11ZM17 28H20V29H17Z" fill="#1a2870"/></svg><div style="position:absolute;left:80px;width:600px;text-align:center;top:693.77px;font-size:11.5px;line-height:1;color:#222;white-space:pre;">0</div><div style="position:absolute;left:76px;top:728px;width:1258px;height:1px;background:#d0d0d0;"></div><div style="position:absolute;left:505px;top:731px;width:1px;height:17px;background:#cfcfcf;"></div><div style="position:absolute;left:949px;top:731px;width:1px;height:17px;background:#cfcfcf;"></div><div style="position:absolute;left:514.4px;top:733.27px;font-size:11.5px;line-height:1;color:#222;white-space:pre;">Size: 32x32&nbsp;&nbsp;&nbsp;Export Format: PNG</div><div style="position:absolute;left:1144px;top:102px;width:190px;height:24px;background:#2a7fcc;"></div><div style="position:absolute;left:938px;width:600px;text-align:center;top:107.90px;font-size:11.7px;line-height:1;color:#fff;white-space:pre;">Animations</div><div style="position:absolute;left:1162px;top:130px;width:120px;height:20px;background:#dedefc;border:1px solid #6464f5;box-sizing:border-box;"></div><svg style="position:absolute;left:1165.0px;top:133.95px" width="13" height="11.5" viewBox="0 0 13 11.5"><rect x="0" y="0" width="13" height="11.5" rx="0.8" fill="#2f8a07"/><rect x="0" y="1.5" width="0.7" height="1.8" fill="#fff"/><rect x="0" y="8.2" width="0.7" height="1.8" fill="#fff"/><rect x="2.9" y="1.5" width="1.1" height="1.8" fill="#fff"/><rect x="2.9" y="8.2" width="1.1" height="1.8" fill="#fff"/><rect x="5.95" y="1.5" width="1.1" height="1.8" fill="#fff"/><rect x="5.95" y="8.2" width="1.1" height="1.8" fill="#fff"/><rect x="9" y="1.5" width="1.1" height="1.8" fill="#fff"/><rect x="9" y="8.2" width="1.1" height="1.8" fill="#fff"/><rect x="12.3" y="1.5" width="0.7" height="1.8" fill="#fff"/><rect x="12.3" y="8.2" width="0.7" height="1.8" fill="#fff"/></svg><div style="position:absolute;left:1186.6px;top:134.10px;font-size:11.7px;line-height:1;color:#222;white-space:pre;">Idle</div><svg style="position:absolute;left:1165.0px;top:154.65px" width="13" height="11.5" viewBox="0 0 13 11.5"><rect x="0" y="0" width="13" height="11.5" rx="0.8" fill="#2f8a07"/><rect x="0" y="1.5" width="0.7" height="1.8" fill="#fff"/><rect x="0" y="8.2" width="0.7" height="1.8" fill="#fff"/><rect x="2.9" y="1.5" width="1.1" height="1.8" fill="#fff"/><rect x="2.9" y="8.2" width="1.1" height="1.8" fill="#fff"/><rect x="5.95" y="1.5" width="1.1" height="1.8" fill="#fff"/><rect x="5.95" y="8.2" width="1.1" height="1.8" fill="#fff"/><rect x="9" y="1.5" width="1.1" height="1.8" fill="#fff"/><rect x="9" y="8.2" width="1.1" height="1.8" fill="#fff"/><rect x="12.3" y="1.5" width="0.7" height="1.8" fill="#fff"/><rect x="12.3" y="8.2" width="0.7" height="1.8" fill="#fff"/></svg><div style="position:absolute;left:1186.6px;top:154.90px;font-size:11.7px;line-height:1;color:#222;white-space:pre;">Walk</div><div style="position:absolute;left:1144px;top:412px;width:190px;height:7px;background:#cccccc;"></div><div style="position:absolute;left:1144px;top:419px;width:190px;height:23px;background:#2468a5;"></div><div style="position:absolute;left:938px;width:600px;text-align:center;top:425.10px;font-size:11.7px;line-height:1;color:#fff;white-space:pre;">Animation Properties</div><div style="position:absolute;left:1144px;top:464px;width:189px;height:1px;background:#e2e2e2;"></div><div style="position:absolute;left:1147.5px;top:448.10px;font-size:11.7px;line-height:1;color:#222;white-space:pre;">Name</div><div style="position:absolute;left:1242px;top:448.10px;font-size:11.7px;line-height:1;color:#222;white-space:pre;">Idle</div><div style="position:absolute;left:1144px;top:486px;width:189px;height:1px;background:#e2e2e2;"></div><div style="position:absolute;left:1147.5px;top:470.10px;font-size:11.7px;line-height:1;color:#222;white-space:pre;">Speed</div><div style="position:absolute;left:1242px;top:470.10px;font-size:11.7px;line-height:1;color:#222;white-space:pre;">0</div><div style="position:absolute;left:1144px;top:508px;width:189px;height:1px;background:#e2e2e2;"></div><div style="position:absolute;left:1147.5px;top:492.10px;font-size:11.7px;line-height:1;color:#222;white-space:pre;">Loop</div><div style="position:absolute;left:1144px;top:530px;width:189px;height:1px;background:#e2e2e2;"></div><div style="position:absolute;left:1147.5px;top:514.10px;font-size:11.7px;line-height:1;color:#222;white-space:pre;">Repeat Count</div><div style="position:absolute;left:1242px;top:514.10px;font-size:11.7px;line-height:1;color:#222;white-space:pre;">1</div><div style="position:absolute;left:1144px;top:552px;width:189px;height:1px;background:#e2e2e2;"></div><div style="position:absolute;left:1147.5px;top:536.10px;font-size:11.7px;line-height:1;color:#222;white-space:pre;">Repeat To</div><div style="position:absolute;left:1242px;top:536.10px;font-size:11.7px;line-height:1;color:#222;white-space:pre;">0</div><div style="position:absolute;left:1144px;top:574px;width:189px;height:1px;background:#e2e2e2;"></div><div style="position:absolute;left:1147.5px;top:558.10px;font-size:11.7px;line-height:1;color:#222;white-space:pre;">Ping Pong</div><div style="position:absolute;left:1144px;top:610px;width:189px;height:1px;background:#e2e2e2;"></div><div style="position:absolute;left:1147.5px;top:579px;font-size:11.7px;line-height:14px;color:#222;">More<br>Information</div><div style="position:absolute;left:1238px;top:442px;width:1px;height:168px;background:#e2e2e2;"></div><div style="position:absolute;left:1243px;top:491px;width:14px;height:14px;border:1px solid #666;border-radius:2px;box-sizing:border-box;background:#fff;"></div><div style="position:absolute;left:1243px;top:557px;width:14px;height:14px;border:1px solid #666;border-radius:2px;box-sizing:border-box;background:#fff;"></div><div style="position:absolute;left:1242px;top:586.10px;font-size:11.7px;line-height:1;color:#1c1cdc;white-space:pre;"><u>Help</u></div></div></div></body></html>
